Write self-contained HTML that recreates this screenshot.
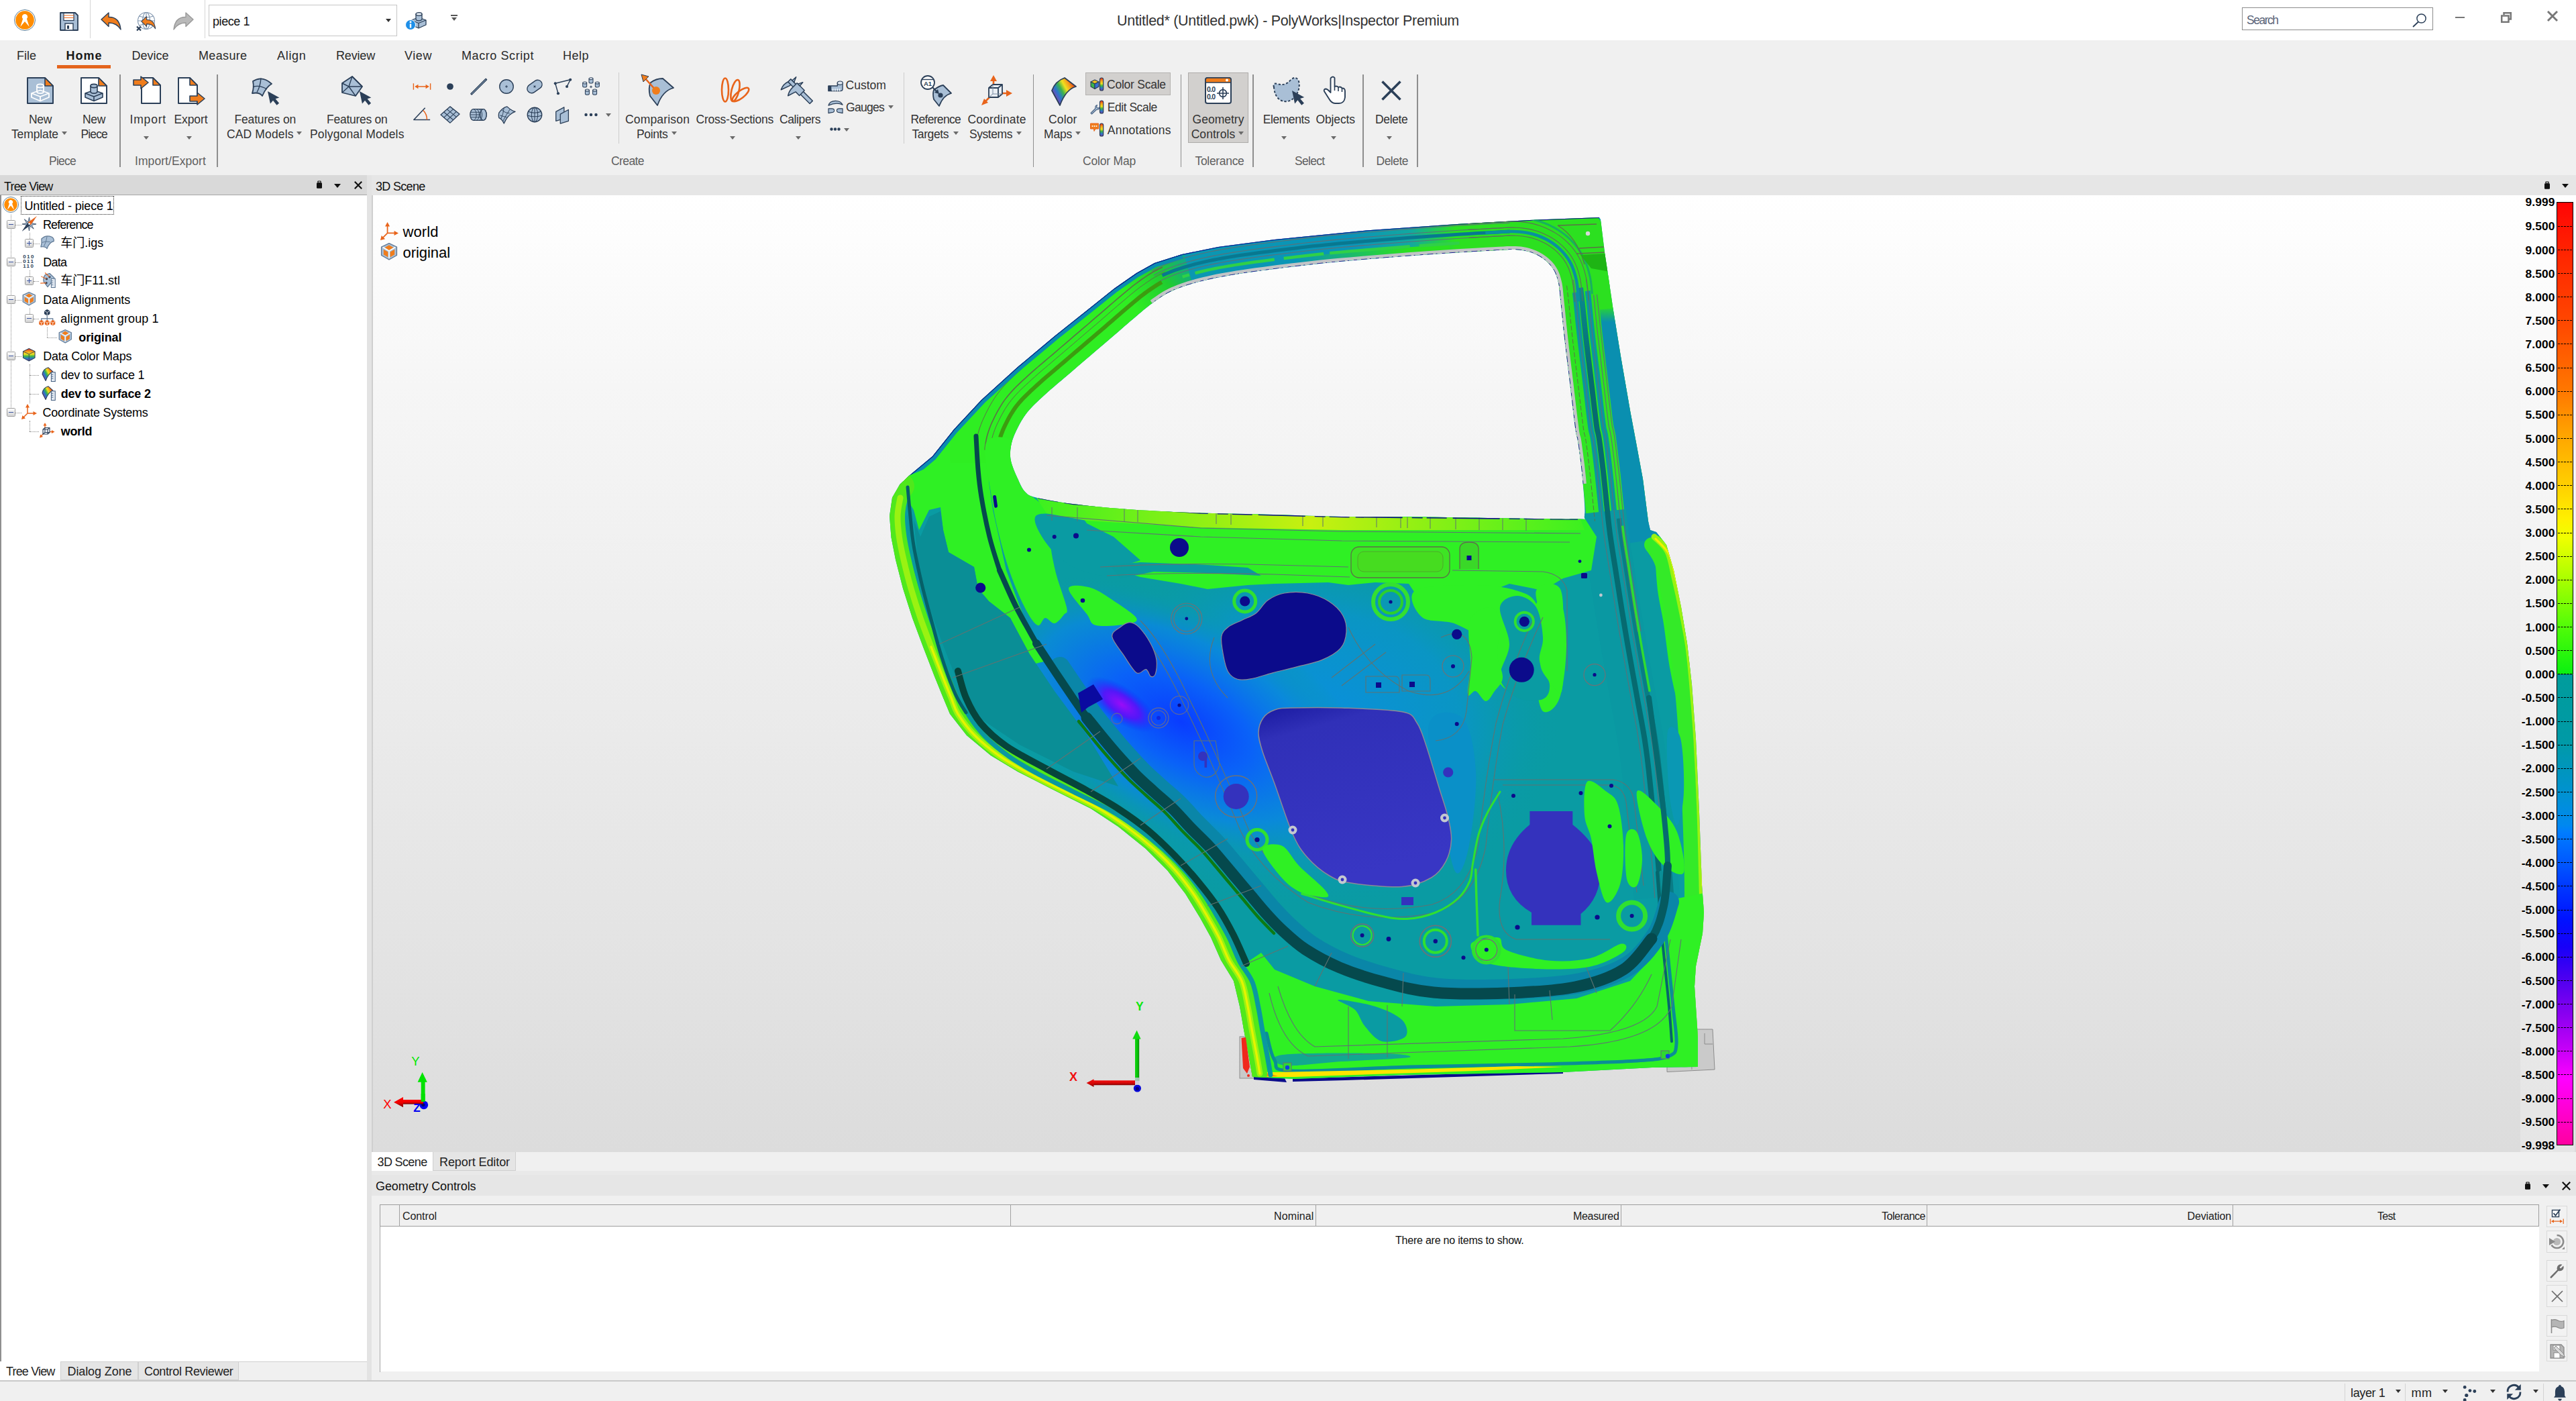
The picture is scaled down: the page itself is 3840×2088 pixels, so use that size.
<!DOCTYPE html>
<html><head><meta charset="utf-8"><title>PolyWorks|Inspector Premium</title>
<style>
html,body{margin:0;padding:0;background:#f0f0f0;overflow:hidden}
body{width:3840px;height:2088px;position:relative;font-family:"Liberation Sans","Noto Sans CJK SC",sans-serif}
.t{position:absolute;white-space:nowrap;line-height:1}
</style></head><body>
<div style="position:absolute;left:0px;top:261px;width:3840px;height:1827px;background:#f0f0f0;"></div>
<div style="position:absolute;left:0px;top:261px;width:547px;height:30px;background:#d9d9d9;"></div>
<div style="position:absolute;left:0px;top:290px;width:547px;height:1.3px;background:#a5a5a5;"></div>
<div style="position:absolute;left:547px;top:261px;width:7px;height:1796px;background:#e3e3e3;"></div>
<div class="t" style="left:6.0px;top:269.3px;font-size:18.0px;letter-spacing:-0.84px;color:#111;">Tree View</div>
<svg style="position:absolute;left:470.5px;top:269px;overflow:visible;" width="10" height="12" viewBox="0 0 10 12"><rect x="1" y="3.2" width="8" height="8.6" rx="1.2" fill="#111"/><rect x="2.4" y="0.4" width="5.2" height="3.4" rx="0.8" fill="#111"/><rect x="3.6" y="1.5" width="2.8" height="1.4" fill="#ddd"/></svg>
<div style="position:absolute;left:498px;top:273.5px;width:0;height:0;border-left:5.5px solid transparent;border-right:5.5px solid transparent;border-top:6px solid #111"></div>
<svg style="position:absolute;left:527.5px;top:269.5px;overflow:visible;" width="12" height="12" viewBox="0 0 12 12"><path d="M0.8,0.8 L11.2,11.2 M11.2,0.8 L0.8,11.2" stroke="#111" stroke-width="2.2"/></svg>
<div style="position:absolute;left:0px;top:291.3px;width:547px;height:1738px;background:#ffffff;"></div>
<div style="position:absolute;left:0px;top:291px;width:1.6px;height:1766px;background:#8f8f8f;"></div>
<div style="position:absolute;left:16.3px;top:320px;width:0;height:294.5px;border-left:1.2px dotted #8a8a8a"></div>
<svg style="position:absolute;left:4.2px;top:293.4px;overflow:visible;" width="24" height="24" viewBox="0 0 24 24"><circle cx="12" cy="12" r="11.5" fill="#fff" stroke="#5f7f96" stroke-width="1"/><circle cx="12" cy="12" r="9.8" fill="#ff8c00"/><path d="M9.84,10.56 a3.12,3.12 0 1 1 4.32,0 L17.04,19.439999999999998 L12,13.44 L6.96,19.439999999999998 Z" fill="#fff"/></svg>
<div style="position:absolute;left:31px;top:292.3px;width:139px;height:27.5px;box-sizing:border-box;border:1.3px dotted #222"></div>
<div class="t" style="left:36.5px;top:297.8px;font-size:18.0px;letter-spacing:-0.17px;color:#000;">Untitled - piece 1</div>
<div style="position:absolute;left:23px;top:334.7px;width:9px;height:0;border-top:1.2px dotted #8a8a8a"></div>
<div style="position:absolute;left:10.3px;top:328.4px;width:12.6px;height:12.6px;box-sizing:border-box;border:1px solid #9c9c9c;border-radius:1.5px;background:linear-gradient(#ffffff,#e4e4e4 55%,#d4d4d4)"></div><div style="position:absolute;left:12.8px;top:334.1px;width:7.6px;height:1.3px;background:#3c55a0;"></div>
<div style="position:absolute;left:23px;top:390.7px;width:9px;height:0;border-top:1.2px dotted #8a8a8a"></div>
<div style="position:absolute;left:10.3px;top:384.4px;width:12.6px;height:12.6px;box-sizing:border-box;border:1px solid #9c9c9c;border-radius:1.5px;background:linear-gradient(#ffffff,#e4e4e4 55%,#d4d4d4)"></div><div style="position:absolute;left:12.8px;top:390.1px;width:7.6px;height:1.3px;background:#3c55a0;"></div>
<div style="position:absolute;left:23px;top:446.7px;width:9px;height:0;border-top:1.2px dotted #8a8a8a"></div>
<div style="position:absolute;left:10.3px;top:440.4px;width:12.6px;height:12.6px;box-sizing:border-box;border:1px solid #9c9c9c;border-radius:1.5px;background:linear-gradient(#ffffff,#e4e4e4 55%,#d4d4d4)"></div><div style="position:absolute;left:12.8px;top:446.1px;width:7.6px;height:1.3px;background:#3c55a0;"></div>
<div style="position:absolute;left:23px;top:530.7px;width:9px;height:0;border-top:1.2px dotted #8a8a8a"></div>
<div style="position:absolute;left:10.3px;top:524.4px;width:12.6px;height:12.6px;box-sizing:border-box;border:1px solid #9c9c9c;border-radius:1.5px;background:linear-gradient(#ffffff,#e4e4e4 55%,#d4d4d4)"></div><div style="position:absolute;left:12.8px;top:530.1px;width:7.6px;height:1.3px;background:#3c55a0;"></div>
<div style="position:absolute;left:23px;top:614.7px;width:9px;height:0;border-top:1.2px dotted #8a8a8a"></div>
<div style="position:absolute;left:10.3px;top:608.4px;width:12.6px;height:12.6px;box-sizing:border-box;border:1px solid #9c9c9c;border-radius:1.5px;background:linear-gradient(#ffffff,#e4e4e4 55%,#d4d4d4)"></div><div style="position:absolute;left:12.8px;top:614.1px;width:7.6px;height:1.3px;background:#3c55a0;"></div>
<svg style="position:absolute;left:31.5px;top:322px;overflow:visible;" width="23" height="23" viewBox="0 0 24 24"><path d="M12,2 L13.6,9.2 L20,5 L15.8,11 L23,12.5 L15.8,14 L19,20 L13.4,15.6 L12,23 L10.4,15.6 L4.5,20 L8.2,14 L1,12.5 L8.2,11 L4.5,5 L10.4,9.2 Z" fill="#a9bfd6" stroke="#2b3f58" stroke-width=".8" stroke-linejoin="round"/><path d="M24,0 L14.2,14.2 L10,10 Z" fill="#e8641b"/><path d="M0.5,24 L10,10 L14.2,14.2 Z" fill="#2b3f58"/><circle cx="12.1" cy="12.1" r="1.5" fill="#fff"/></svg>
<div class="t" style="left:64.0px;top:325.8px;font-size:18.0px;letter-spacing:-0.93px;color:#000;">Reference</div>
<div style="position:absolute;left:43.5px;top:347px;width:0;height:9px;border-left:1.2px dotted #8a8a8a"></div>
<div style="position:absolute;left:50px;top:362.5px;width:9px;height:0;border-top:1.2px dotted #8a8a8a"></div>
<div style="position:absolute;left:37.2px;top:356.2px;width:12.6px;height:12.6px;box-sizing:border-box;border:1px solid #9c9c9c;border-radius:1.5px;background:linear-gradient(#ffffff,#e4e4e4 55%,#d4d4d4)"></div><div style="position:absolute;left:39.7px;top:361.9px;width:7.6px;height:1.3px;background:#3c55a0;"></div><div style="position:absolute;left:42.9px;top:358.7px;width:1.3px;height:7.6px;background:#3c55a0;"></div>
<svg style="position:absolute;left:59.7px;top:351px;overflow:visible;" width="22" height="21" viewBox="0 0 24 22"><path d="M2,5 Q9,-2 19,2 Q23,5 22,9 Q15,10 11,21 Q9,17 1,18 Q3,11 2,5 Z" fill="#a9bfd6" stroke="#5d7692" stroke-width="1.3" stroke-linejoin="round"/><path d="M11,1 Q10,10 6,17 M2.5,11 Q9,8 16,10" fill="none" stroke="#5d7692" stroke-width="1"/></svg>
<div class="t" style="left:90.3px;top:352.563px;font-size:18px;color:#000;font-family:'Liberation Sans','Noto Sans CJK SC',sans-serif;">车门.igs</div>
<svg style="position:absolute;left:34px;top:379.3px;overflow:visible;" width="18.5" height="20.5" viewBox="0 0 19.5 22"><text font-family="Liberation Sans,sans-serif" font-weight="bold" font-size="8.6" fill="#2b3f58" letter-spacing="1.55"><tspan x="0" y="6.5">010</tspan><tspan x="0" y="14">011</tspan><tspan x="0" y="21.5">110</tspan></text></svg>
<div class="t" style="left:64.2px;top:381.8px;font-size:18.0px;letter-spacing:-0.76px;color:#000;">Data</div>
<div style="position:absolute;left:43.5px;top:403px;width:0;height:9px;border-left:1.2px dotted #8a8a8a"></div>
<div style="position:absolute;left:50px;top:418.5px;width:8px;height:0;border-top:1.2px dotted #8a8a8a"></div>
<div style="position:absolute;left:37.2px;top:412.2px;width:12.6px;height:12.6px;box-sizing:border-box;border:1px solid #9c9c9c;border-radius:1.5px;background:linear-gradient(#ffffff,#e4e4e4 55%,#d4d4d4)"></div><div style="position:absolute;left:39.7px;top:417.9px;width:7.6px;height:1.3px;background:#3c55a0;"></div><div style="position:absolute;left:42.9px;top:414.7px;width:1.3px;height:7.6px;background:#3c55a0;"></div>
<svg style="position:absolute;left:58.5px;top:405.5px;overflow:visible;" width="24" height="23" viewBox="0 0 24 23.5"><path d="M8,4 L15,1.5 L22,8 V10 L12,22 L6,14 Q5,8 8,4 Z" fill="#a9bfd6" stroke="#5d7692" stroke-width="1.2" stroke-linejoin="round"/><g fill="#2b3f58"><circle cx="10.5" cy="10" r="1.7"/><circle cx="15" cy="7" r="1.7"/><circle cx="10" cy="16" r="1.7"/></g><g stroke="#e8641b" stroke-width="1.1"><path d="M10.5,10 L2,6 M15,7 L8,0.5 M10,16 L1,16.5"/></g><rect x="17.5" y="9.5" width="6" height="13.5" fill="#e6edf5" stroke="#5d7692" stroke-width="1.1"/><path d="M17.5,13 H20.5 M17.5,16 H20.5 M17.5,19 H20.5" stroke="#5d7692" stroke-width="1"/></svg>
<div class="t" style="left:90.3px;top:408.563px;font-size:18px;color:#000;font-family:'Liberation Sans','Noto Sans CJK SC',sans-serif;">车门F11.stl</div>
<svg style="position:absolute;left:32.8px;top:435px;overflow:visible;" width="20.5" height="20.5" viewBox="0 0 23 23.5"><g transform="scale(1)"><path d="M11.5,0.5 L22,5.5 V17 L11.5,23 L1,17 V5.5 Z" fill="#a9bfd6" stroke="#5d7692" stroke-width="1.2" stroke-linejoin="round"/><path d="M6.2,0.2 L9.6,4 L6,6.4 Z M16.8,0.2 L13.4,4 L17,6.4 Z M0,9 L4.4,11 V14.8 L0,14 Z M23,9 L18.6,11 V14.8 L23,14 Z M7,23.6 L9.4,19.6 L13.6,19.6 L16,23.6 Z" fill="#fff" opacity=".0"/><path d="M11.5,3 L17.5,6.5 L11.5,10 L5.5,6.5 Z" fill="#f07d1c"/><path d="M4,9 L10,12.5 V19.5 L4,16 Z" fill="#f07d1c"/><path d="M19,9 L13,12.5 V19.5 L19,16 Z" fill="#f07d1c"/><path d="M11.5,11 V21 M11.5,11 L3,6 M11.5,11 L20,6" stroke="#fff" stroke-width="1.4"/></g></svg>
<div class="t" style="left:64.2px;top:437.8px;font-size:18.0px;letter-spacing:-0.07px;color:#000;">Data Alignments</div>
<div style="position:absolute;left:43.5px;top:459px;width:0;height:9px;border-left:1.2px dotted #8a8a8a"></div>
<div style="position:absolute;left:50px;top:474.5px;width:8px;height:0;border-top:1.2px dotted #8a8a8a"></div>
<div style="position:absolute;left:37.2px;top:468.2px;width:12.6px;height:12.6px;box-sizing:border-box;border:1px solid #9c9c9c;border-radius:1.5px;background:linear-gradient(#ffffff,#e4e4e4 55%,#d4d4d4)"></div><div style="position:absolute;left:39.7px;top:473.9px;width:7.6px;height:1.3px;background:#3c55a0;"></div>
<svg style="position:absolute;left:58px;top:460.5px;overflow:visible;" width="24.5" height="24.5" viewBox="0 0 23 23"><path d="M11.5,0 L15.5,2 V6.5 L11.5,9 L7.5,6.5 V2 Z" fill="#2b3f58"/><path d="M11.5,4.3 V9 M11.5,4.3 L7.5,2 M11.5,4.3 L15.5,2" stroke="#fff" stroke-width=".7"/><path d="M11.5,9 V16 M3.5,16 V13 H19.5 V16" fill="none" stroke="#5d7692" stroke-width="1.1"/><g fill="#e8641b"><path d="M3.5,15 L6.8,16.7 V21 L3.5,23 L0.2,21 V16.7 Z"/><path d="M11.5,15 L14.8,16.7 V21 L11.5,23 L8.2,21 V16.7 Z"/><path d="M19.5,15 L22.8,16.7 V21 L19.5,23 L16.2,21 V16.7 Z"/></g><path d="M3.5,19 V23 M3.5,19 L0.5,17 M3.5,19 L6.5,17 M11.5,19 V23 M11.5,19 L8.5,17 M11.5,19 L14.5,17 M19.5,19 V23 M19.5,19 L16.5,17 M19.5,19 L22.5,17" stroke="#fff" stroke-width=".8"/></svg>
<div class="t" style="left:90.3px;top:465.8px;font-size:18.0px;letter-spacing:0.14px;color:#000;">alignment group 1</div>
<div style="position:absolute;left:70px;top:488px;width:0;height:14.5px;border-left:1.2px dotted #8a8a8a"></div>
<div style="position:absolute;left:70px;top:502.5px;width:15px;height:0;border-top:1.2px dotted #8a8a8a"></div>
<svg style="position:absolute;left:87px;top:490.5px;overflow:visible;" width="20.5" height="20.5" viewBox="0 0 23 23.5"><g transform="scale(1)"><path d="M11.5,0.5 L22,5.5 V17 L11.5,23 L1,17 V5.5 Z" fill="#a9bfd6" stroke="#5d7692" stroke-width="1.2" stroke-linejoin="round"/><path d="M6.2,0.2 L9.6,4 L6,6.4 Z M16.8,0.2 L13.4,4 L17,6.4 Z M0,9 L4.4,11 V14.8 L0,14 Z M23,9 L18.6,11 V14.8 L23,14 Z M7,23.6 L9.4,19.6 L13.6,19.6 L16,23.6 Z" fill="#fff" opacity=".0"/><path d="M11.5,3 L17.5,6.5 L11.5,10 L5.5,6.5 Z" fill="#f07d1c"/><path d="M4,9 L10,12.5 V19.5 L4,16 Z" fill="#f07d1c"/><path d="M19,9 L13,12.5 V19.5 L19,16 Z" fill="#f07d1c"/><path d="M11.5,11 V21 M11.5,11 L3,6 M11.5,11 L20,6" stroke="#fff" stroke-width="1.4"/></g></svg>
<div class="t" style="left:117.3px;top:493.8px;font-size:18.0px;letter-spacing:-0.13px;font-weight:bold;color:#000;">original</div>
<svg style="position:absolute;left:34px;top:519px;overflow:visible;" width="18.5" height="19.5" viewBox="0 0 20 21"><defs><linearGradient id="rb4" x1="0" y1="0" x2="0" y2="1"><stop offset="0" stop-color="#e8201c"/><stop offset=".25" stop-color="#f5a51c"/><stop offset=".45" stop-color="#f0e020"/><stop offset=".62" stop-color="#3cb44a"/><stop offset=".8" stop-color="#2a78c8"/><stop offset="1" stop-color="#7a3cb4"/></linearGradient></defs><path d="M10,0.5 L19.5,5 V15.5 L10,20.5 L0.5,15.5 V5 Z" fill="url(#rb4)" stroke="#2b3f58" stroke-width="1.1" stroke-linejoin="round"/><path d="M10,9.5 V20.5 M10,9.5 L0.5,5 M10,9.5 L19.5,5" stroke="#2b3f58" stroke-width=".9" fill="none"/></svg>
<div class="t" style="left:64.2px;top:521.8px;font-size:18.0px;letter-spacing:-0.20px;color:#000;">Data Color Maps</div>
<div style="position:absolute;left:43.5px;top:543px;width:0;height:58px;border-left:1.2px dotted #8a8a8a"></div>
<div style="position:absolute;left:43.5px;top:559px;width:14px;height:0;border-top:1.2px dotted #8a8a8a"></div>
<div style="position:absolute;left:43.5px;top:587px;width:14px;height:0;border-top:1.2px dotted #8a8a8a"></div>
<svg style="position:absolute;left:61.5px;top:547px;overflow:visible;" width="21" height="22" viewBox="0 0 21 22.5"><defs><linearGradient id="cm2" x1="0.9" y1="0.15" x2="0.05" y2="0.7"><stop offset="0" stop-color="#e0201c"/><stop offset=".22" stop-color="#f59a1c"/><stop offset=".4" stop-color="#f0e020"/><stop offset=".58" stop-color="#3cb44a"/><stop offset=".76" stop-color="#2a78c8"/><stop offset="1" stop-color="#8a3cb4"/></linearGradient></defs><path d="M0.8,11 Q2,3 10,0.8 L17,7 Q10,10 6,21 Z" fill="url(#cm2)" stroke="#2b3f58" stroke-width="1.1" stroke-linejoin="round"/><rect x="14.5" y="8" width="6" height="14" fill="#e6edf5" stroke="#4a6484" stroke-width="1.1"/><path d="M14.5,11.5 H17.5 M14.5,14.5 H17.5 M14.5,17.5 H17.5" stroke="#4a6484" stroke-width="1"/></svg>
<div class="t" style="left:90.7px;top:549.8px;font-size:18.0px;letter-spacing:-0.22px;color:#000;">dev to surface 1</div>
<svg style="position:absolute;left:61.5px;top:575px;overflow:visible;" width="21" height="22" viewBox="0 0 21 22.5"><defs><linearGradient id="cm3" x1="0.9" y1="0.15" x2="0.05" y2="0.7"><stop offset="0" stop-color="#e0201c"/><stop offset=".22" stop-color="#f59a1c"/><stop offset=".4" stop-color="#f0e020"/><stop offset=".58" stop-color="#3cb44a"/><stop offset=".76" stop-color="#2a78c8"/><stop offset="1" stop-color="#8a3cb4"/></linearGradient></defs><path d="M0.8,11 Q2,3 10,0.8 L17,7 Q10,10 6,21 Z" fill="url(#cm3)" stroke="#2b3f58" stroke-width="1.1" stroke-linejoin="round"/><rect x="14.5" y="8" width="6" height="14" fill="#e6edf5" stroke="#4a6484" stroke-width="1.1"/><path d="M14.5,11.5 H17.5 M14.5,14.5 H17.5 M14.5,17.5 H17.5" stroke="#4a6484" stroke-width="1"/></svg>
<div class="t" style="left:90.7px;top:577.8px;font-size:18.0px;letter-spacing:-0.19px;font-weight:bold;color:#000;">dev to surface 2</div>
<svg style="position:absolute;left:31.5px;top:602px;overflow:visible;" width="23" height="23" viewBox="0 0 23 23"><g transform="scale(1)"><path d="M9,3 V14 H20 M9,14 L2,21" fill="none" stroke="#e8641b" stroke-width="1.5"/><g fill="#e8641b"><path d="M9,0 L12,5.5 H6 Z"/><path d="M23,14 L17.5,11 V17 Z"/><path d="M0,23 L1.5,17 L6,21.5 Z"/></g></g></svg>
<div class="t" style="left:63.5px;top:605.8px;font-size:18.0px;letter-spacing:-0.28px;color:#000;">Coordinate Systems</div>
<div style="position:absolute;left:43.5px;top:627px;width:0;height:15.5px;border-left:1.2px dotted #8a8a8a"></div>
<div style="position:absolute;left:43.5px;top:643px;width:14px;height:0;border-top:1.2px dotted #8a8a8a"></div>
<svg style="position:absolute;left:59px;top:629.5px;overflow:visible;" width="22.5" height="22.5" viewBox="0 0 22.5 22.5"><g><path d="M8,2 V8 M15,13.5 H19 M5,17 L2,20" fill="none" stroke="#e8641b" stroke-width="1.3"/><g fill="#e8641b"><path d="M8,0 L10.5,4.5 H5.5 Z"/><path d="M22.5,13.5 L18,11 V16 Z"/><path d="M0,22.5 L1.2,17.5 L5,21 Z"/></g><g fill="#f4f7fa" stroke="#2b3f58" stroke-width="1.1" stroke-linejoin="round"><path d="M5,10 L8,7.5 H15 V14.5 L12,17 H5 Z"/><path d="M5,10 H12 V17 M12,10 L15,7.5 M8,7.5 V14.5 H15 M8,14.5 L5,17" fill="none"/></g></g></svg>
<div class="t" style="left:90.7px;top:633.8px;font-size:18.0px;letter-spacing:-0.30px;font-weight:bold;color:#000;">world</div>
<div style="position:absolute;left:0px;top:2029.3px;width:547px;height:27.7px;background:#f0f0f0;"></div>
<div style="position:absolute;left:0px;top:2029.3px;width:547px;height:1px;background:#d0d0d0;"></div>
<div style="position:absolute;left:0px;top:2029.3px;width:90px;height:27.7px;background:#ffffff;"></div>
<div style="position:absolute;left:90px;top:2029.3px;width:115.7px;height:27.7px;background:#e5e5e5;border:1px solid #cfcfcf;box-sizing:border-box"></div>
<div style="position:absolute;left:205.7px;top:2029.3px;width:150.6px;height:27.7px;background:#e5e5e5;border:1px solid #cfcfcf;box-sizing:border-box"></div>
<div class="t" style="left:9.0px;top:2035.1px;font-size:18.0px;letter-spacing:-0.84px;color:#222;">Tree View</div>
<div class="t" style="left:100.5px;top:2035.1px;font-size:18.0px;letter-spacing:-0.10px;color:#222;">Dialog Zone</div>
<div class="t" style="left:215.0px;top:2035.1px;font-size:18.0px;letter-spacing:-0.35px;color:#222;">Control Reviewer</div>
<div style="position:absolute;left:554px;top:261px;width:3286px;height:29.6px;background:#e6e6e6;"></div>
<div class="t" style="left:560.0px;top:269.3px;font-size:18.0px;letter-spacing:-0.69px;color:#111;">3D Scene</div>
<svg style="position:absolute;left:3792px;top:269.5px;overflow:visible;" width="10" height="12" viewBox="0 0 10 12"><rect x="1" y="3.2" width="8" height="8.6" rx="1.2" fill="#111"/><rect x="2.4" y="0.4" width="5.2" height="3.4" rx="0.8" fill="#111"/><rect x="3.6" y="1.5" width="2.8" height="1.4" fill="#ddd"/></svg>
<div style="position:absolute;left:3818.5px;top:274px;width:0;height:0;border-left:5.5px solid transparent;border-right:5.5px solid transparent;border-top:6px solid #111"></div>
<div style="position:absolute;left:554px;top:290.6px;width:2px;height:1426.6px;background:#cfcfcf;"></div>
<div style="position:absolute;left:554px;top:1717.2px;width:3286px;height:27.6px;background:#f0f0f0;"></div>
<div style="position:absolute;left:554px;top:1717.2px;width:91px;height:27.6px;background:#ffffff;"></div>
<div style="position:absolute;left:645px;top:1717.2px;width:123.7px;height:27.6px;background:#e5e5e5;border:1px solid #cfcfcf;border-top:none;box-sizing:border-box"></div>
<div class="t" style="left:562.5px;top:1723.3px;font-size:18.0px;letter-spacing:-0.63px;color:#222;">3D Scene</div>
<div class="t" style="left:655.0px;top:1723.3px;font-size:18.0px;letter-spacing:-0.08px;color:#222;">Report Editor</div>
<div style="position:absolute;left:554px;top:1744.8px;width:3286px;height:6.4px;background:#e9e9e9;"></div>
<div style="position:absolute;left:554px;top:1751px;width:3286px;height:31px;background:#e6e6e6;"></div>
<div class="t" style="left:560.0px;top:1759.3px;font-size:18.0px;letter-spacing:-0.09px;color:#111;">Geometry Controls</div>
<svg style="position:absolute;left:3762.5px;top:1760.5px;overflow:visible;" width="10" height="12" viewBox="0 0 10 12"><rect x="1" y="3.2" width="8" height="8.6" rx="1.2" fill="#111"/><rect x="2.4" y="0.4" width="5.2" height="3.4" rx="0.8" fill="#111"/><rect x="3.6" y="1.5" width="2.8" height="1.4" fill="#ddd"/></svg>
<div style="position:absolute;left:3790px;top:1765px;width:0;height:0;border-left:5.5px solid transparent;border-right:5.5px solid transparent;border-top:6px solid #111"></div>
<svg style="position:absolute;left:3818.5px;top:1761px;overflow:visible;" width="13" height="13" viewBox="0 0 13 13"><path d="M0.8,0.8 L12.2,12.2 M12.2,0.8 L0.8,12.2" stroke="#111" stroke-width="2.2"/></svg>
<div style="position:absolute;left:554px;top:1782px;width:3286px;height:275.5px;background:#f0f0f0;"></div>
<div style="position:absolute;left:565.5px;top:1795.4px;width:3219.5px;height:249px;background:#ffffff;"></div>
<div style="position:absolute;left:565.5px;top:1795.4px;width:3219.5px;height:33px;background:#f0f0f0;border:1px solid #9e9e9e;box-sizing:border-box"></div>
<div style="position:absolute;left:565.5px;top:1828px;width:1.2px;height:216.5px;background:#a8a8a8;"></div>
<div style="position:absolute;left:595.1px;top:1796px;width:1.1px;height:32px;background:#a2a2a2;"></div>
<div style="position:absolute;left:1505.5px;top:1796px;width:1.1px;height:32px;background:#a2a2a2;"></div>
<div style="position:absolute;left:1960.7px;top:1796px;width:1.1px;height:32px;background:#a2a2a2;"></div>
<div style="position:absolute;left:2415.9px;top:1796px;width:1.1px;height:32px;background:#a2a2a2;"></div>
<div style="position:absolute;left:2872px;top:1796px;width:1.1px;height:32px;background:#a2a2a2;"></div>
<div style="position:absolute;left:3328.2px;top:1796px;width:1.1px;height:32px;background:#a2a2a2;"></div>
<div class="t" style="left:600.0px;top:1804.8px;font-size:16.0px;letter-spacing:-0.08px;color:#1c1c1c;">Control</div>
<div class="t" style="left:1899.0px;top:1804.8px;font-size:16.0px;letter-spacing:0.12px;color:#1c1c1c;">Nominal</div>
<div class="t" style="left:2345.0px;top:1804.8px;font-size:16.0px;letter-spacing:-0.33px;color:#1c1c1c;">Measured</div>
<div class="t" style="left:2805.0px;top:1804.8px;font-size:16.0px;letter-spacing:-0.49px;color:#1c1c1c;">Tolerance</div>
<div class="t" style="left:3260.5px;top:1804.8px;font-size:16.0px;letter-spacing:-0.13px;color:#1c1c1c;">Deviation</div>
<div class="t" style="left:3544.0px;top:1804.8px;font-size:16.0px;letter-spacing:-0.71px;color:#1c1c1c;">Test</div>
<div class="t" style="left:2080.0px;top:1840.5px;font-size:16.0px;letter-spacing:-0.22px;color:#111;">There are no items to show.</div>
<div style="position:absolute;left:3796px;top:1796.8px;width:30.5px;height:32.4px;background:#f2f2f2;border:1px solid #d9d9d9;box-sizing:border-box"></div>
<div style="position:absolute;left:3796px;top:1834.4px;width:30.5px;height:32.4px;background:#f2f2f2;border:1px solid #d9d9d9;box-sizing:border-box"></div>
<div style="position:absolute;left:3796px;top:1878.1px;width:30.5px;height:32.4px;background:#f2f2f2;border:1px solid #d9d9d9;box-sizing:border-box"></div>
<div style="position:absolute;left:3796px;top:1915.4px;width:30.5px;height:32.4px;background:#f2f2f2;border:1px solid #d9d9d9;box-sizing:border-box"></div>
<div style="position:absolute;left:3796px;top:1959.8px;width:30.5px;height:32.4px;background:#f2f2f2;border:1px solid #d9d9d9;box-sizing:border-box"></div>
<div style="position:absolute;left:3796px;top:1997.1px;width:30.5px;height:32.4px;background:#f2f2f2;border:1px solid #d9d9d9;box-sizing:border-box"></div>
<svg style="position:absolute;left:3801px;top:1802px;overflow:visible;" width="21" height="23" viewBox="0 0 21 23"><rect x="3.5" y="1.5" width="10" height="10" fill="#fff" stroke="#2b3f58" stroke-width="1.4"/><path d="M5.5,6 L8.5,9.5 L15.5,0.5" fill="none" stroke="#2b3f58" stroke-width="1.8"/><g stroke="#e8641b" stroke-width="1.2"><path d="M0.8,14.5 V22 M20.2,14.5 V22 M3,18.2 H18"/></g><path d="M2,18.2 L6,15.8 V20.6 Z M19,18.2 L15,15.8 V20.6 Z" fill="#e8641b"/></svg>
<svg style="position:absolute;left:3800px;top:1839px;overflow:visible;" width="23" height="23" viewBox="0 0 23 23"><path d="M11.5,2 A9.5,9.5 0 1 1 3.5,16.5" fill="none" stroke="#8a8a8a" stroke-width="2.6"/><circle cx="11.5" cy="11.5" r="5.6" fill="#b9b9b9"/><path d="M0,6 L9,11.5 L0,17 Z" fill="#8a8a8a"/><path d="M23,23 V19 L19,23 Z" fill="#8a8a8a"/></svg>
<svg style="position:absolute;left:3800px;top:1883px;overflow:visible;" width="23" height="23" viewBox="0 0 23 23"><path d="M1.5,20 L12,9.5 Q10.5,4.5 14.5,2 Q17,0.7 19.5,1.8 L15.5,5.8 L17.2,7.5 L21.2,3.5 Q22.5,6.5 20.5,9.3 Q18,12 13.8,11 L3.5,21.8 Q1.5,22.5 1.5,20 Z" fill="#6e6e6e"/></svg>
<svg style="position:absolute;left:3802.5px;top:1923px;overflow:visible;" width="18" height="18" viewBox="0 0 18 18"><path d="M1,1 L17,17 M17,1 L1,17" stroke="#6e6e6e" stroke-width="1.7"/></svg>
<svg style="position:absolute;left:3801px;top:1965px;overflow:visible;" width="22" height="22" viewBox="0 0 22 22"><path d="M2.5,1 V22" stroke="#8a8a8a" stroke-width="1.6"/><path d="M2.5,2.5 Q8,0.5 12,3 Q16,5.5 21,3.5 V14 Q16,16 12,13.5 Q8,11 2.5,13 Z" fill="#b5b5b5" stroke="#8a8a8a" stroke-width="1.2"/></svg>
<svg style="position:absolute;left:3800.5px;top:2002.5px;overflow:visible;" width="23" height="22" viewBox="0 0 23 22"><path d="M1,1 H17 L21,5 V21 H1 Z" fill="#b5b5b5" stroke="#8a8a8a" stroke-width="1.3"/><rect x="5" y="2" width="10" height="7" fill="#fff" stroke="#8a8a8a" stroke-width="1"/><rect x="6" y="13" width="9" height="8" fill="#fff" stroke="#8a8a8a" stroke-width="1"/><path d="M9,3 L20,14 L22.5,19.5 L17,17 L6,6 Z" fill="#d9d9d9" stroke="#8a8a8a" stroke-width="1"/></svg>
<div style="position:absolute;left:0px;top:2057.3px;width:3840px;height:1.3px;background:#c9c9c9;"></div>
<div style="position:absolute;left:0px;top:2058.6px;width:3840px;height:29.4px;background:#f0f0f0;"></div>
<div style="position:absolute;left:3495px;top:2062px;width:1px;height:26px;background:#d4d4d4;"></div>
<div style="position:absolute;left:3584.6px;top:2062px;width:1px;height:26px;background:#d4d4d4;"></div>
<div style="position:absolute;left:3791px;top:2062px;width:1px;height:26px;background:#d4d4d4;"></div>
<div class="t" style="left:3504.0px;top:2067.4px;font-size:18.0px;letter-spacing:-0.36px;color:#222;">layer 1</div>
<div style="position:absolute;left:3570.5px;top:2071px;width:0;height:0;border-left:4.5px solid transparent;border-right:4.5px solid transparent;border-top:5px solid #333"></div>
<div class="t" style="left:3594.5px;top:2067.4px;font-size:18.0px;letter-spacing:0.51px;color:#222;">mm</div>
<div style="position:absolute;left:3640.5px;top:2071px;width:0;height:0;border-left:4.5px solid transparent;border-right:4.5px solid transparent;border-top:5px solid #333"></div>
<svg style="position:absolute;left:3670px;top:2064px;overflow:visible;" width="23" height="25" viewBox="0 0 25 29"><g fill="#2b3f58"><circle cx="4" cy="4" r="2.8"/><circle cx="13" cy="10" r="2.8"/><circle cx="21" cy="11" r="2.8"/><circle cx="7" cy="18" r="3"/><circle cx="4" cy="26" r="2.8"/></g></svg>
<div style="position:absolute;left:3712px;top:2071px;width:0;height:0;border-left:4.5px solid transparent;border-right:4.5px solid transparent;border-top:5px solid #333"></div>
<svg style="position:absolute;left:3735px;top:2062px;overflow:visible;" width="25" height="25" viewBox="0 0 28 28"><g fill="none" stroke="#2b3f58" stroke-width="3.2"><path d="M3.5,14 A10.5,10.5 0 0 1 22,6.5"/><path d="M24.5,14 A10.5,10.5 0 0 1 6,21.5"/></g><path d="M25.5,1 V11 H15.5 Z M2.5,27 V17 H12.5 Z" fill="#2b3f58"/></svg>
<div style="position:absolute;left:3776px;top:2071px;width:0;height:0;border-left:4.5px solid transparent;border-right:4.5px solid transparent;border-top:5px solid #333"></div>
<svg style="position:absolute;left:3807px;top:2063.5px;overflow:visible;" width="18" height="24" viewBox="0 0 19 25.5"><path d="M9.5,0 Q11.5,0 11.5,2 Q17,4 17,11 V17 L19,20 H0 L2,17 V11 Q2,4 7.5,2 Q7.5,0 9.5,0 Z" fill="#2b3f58"/><path d="M6.5,22 H12.5 Q12,25 9.5,25 Q7,25 6.5,22 Z" fill="#2b3f58"/></svg>
<div style="position:absolute;left:0px;top:0px;width:3840px;height:60px;background:#ffffff;"></div>
<svg style="position:absolute;left:21px;top:14px;overflow:visible;" width="32" height="32" viewBox="0 0 32 32"><circle cx="16" cy="16" r="15.5" fill="#fff" stroke="#5f7f96" stroke-width="1"/><circle cx="16" cy="16" r="13.8" fill="#ff8c00"/><path d="M13.120000000000001,14.08 a4.16,4.16 0 1 1 5.76,0 L22.72,25.92 L16,17.92 L9.280000000000001,25.92 Z" fill="#fff"/></svg>
<svg style="position:absolute;left:88.5px;top:17.5px;overflow:visible;" width="28" height="28" viewBox="0 0 28 28"><path d="M1,1 H23 L27,5 V27 H1 Z" fill="#a9bfd6" stroke="#2b3f58" stroke-width="1.8" stroke-linejoin="round"/><rect x="6" y="1.5" width="15" height="11" fill="#fff" stroke="#2b3f58" stroke-width="1.2"/><path d="M6,5 H21 M6,8.5 H21" stroke="#e8641b" stroke-width="1.2"/><rect x="8" y="17" width="12" height="10" fill="#fff" stroke="#2b3f58" stroke-width="1.4"/><rect x="11" y="20" width="3" height="5" fill="#2b3f58"/></svg>
<div style="position:absolute;left:134px;top:0px;width:1px;height:57px;background:#d5d5d5;"></div>
<svg style="position:absolute;left:150px;top:18px;overflow:visible;" width="31" height="27" viewBox="0 0 31 27"><path d="M1,11 L12,1 V7.5 Q28,7 30,26 Q24,16 12,16 V21.5 Z" fill="#f07d1c" stroke="#2b3f58" stroke-width="1.4" stroke-linejoin="round"/></svg>
<svg style="position:absolute;left:203px;top:18px;overflow:visible;" width="30" height="28" viewBox="0 0 30 28"><g fill="none" stroke="#7f94ad" stroke-width="1.1"><circle cx="15" cy="13" r="12.5"/><ellipse cx="15" cy="13" rx="5.5" ry="12.5"/><path d="M15,0.5 V25.5 M2.5,13 H27.5 M4.5,6 Q15,10 25.5,6 M4.5,20 Q15,16 25.5,20"/></g><g transform="translate(7,6) scale(.72)"><path d="M1,11 L12,1 V7.5 Q28,7 30,26 Q24,16 12,16 V21.5 Z" fill="#f07d1c" stroke="#2b3f58" stroke-width="1.4" stroke-linejoin="round"/></g><path d="M1,21.5 L7,27.5 M7,21.5 L1,27.5" stroke="#2b3f58" stroke-width="2.2"/></svg>
<svg style="position:absolute;left:258px;top:18px" width="31" height="27" viewBox="0 0 31 27"><g transform="translate(31,0) scale(-1,1)"><path d="M1,11 L12,1 V7.5 Q28,7 30,26 Q24,16 12,16 V21.5 Z" fill="#b9b9b9" stroke="#9a9a9a" stroke-width="1.4" stroke-linejoin="round"/></g></svg>
<div style="position:absolute;left:305px;top:0px;width:1px;height:57px;background:#d5d5d5;"></div>
<div style="position:absolute;left:311px;top:7px;width:281px;height:47px;background:#fff;border:1px solid #c6c6c6;box-sizing:border-box"></div>
<div class="t" style="left:317.0px;top:23.3px;font-size:18.0px;letter-spacing:-0.43px;color:#111;">piece 1</div>
<div style="position:absolute;left:574.5px;top:27.5px;width:0;height:0;border-left:4.5px solid transparent;border-right:4.5px solid transparent;border-top:5px solid #333"></div>
<svg style="position:absolute;left:604px;top:16px;overflow:visible;" width="34" height="30" viewBox="0 0 34 30"><g stroke="#2b3f58" stroke-width="1.3" stroke-linejoin="round" fill="#a9bfd6"><path d="M9,14 L20,10 L31,14 V21 L20,26 L9,21 Z"/><path d="M9,14 L20,18.5 L31,14 M20,18.5 V26" fill="none"/><path d="M16,5 V12.5 A4.5,2.3 0 0 0 25,12.5 V5 Z"/><ellipse cx="20.5" cy="5" rx="4.5" ry="2.3" fill="#dfe7f0"/></g><circle cx="8" cy="21" r="7.5" fill="#1e8fe8" stroke="#fff" stroke-width="1"/><rect x="6.8" y="19.5" width="2.4" height="6" fill="#fff"/><circle cx="8" cy="16.8" r="1.5" fill="#fff"/></svg>
<div style="position:absolute;left:672px;top:22px;width:10px;height:2px;background:#555;"></div>
<div style="position:absolute;left:672.5px;top:25.5px;width:0;height:0;border-left:4.5px solid transparent;border-right:4.5px solid transparent;border-top:5px solid #555"></div>
<div class="t" style="left:1665.0px;top:20.8px;font-size:21.5px;letter-spacing:-0.30px;color:#333;">Untitled* (Untitled.pwk) - PolyWorks|Inspector Premium</div>
<div style="position:absolute;left:3342px;top:11px;width:285px;height:34px;background:#fff;border:1px solid #8c8c8c;box-sizing:border-box"></div>
<div class="t" style="left:3349.0px;top:22.0px;font-size:17.5px;letter-spacing:-1.49px;color:#5a6478;">Search</div>
<svg style="position:absolute;left:3596px;top:19px;overflow:visible;" width="22" height="22" viewBox="0 0 22 22"><circle cx="13.5" cy="8.5" r="6.6" fill="none" stroke="#2b3f58" stroke-width="1.5"/><path d="M9,13.5 L1,21" stroke="#2b3f58" stroke-width="1.8"/></svg>
<div style="position:absolute;left:3660px;top:24.6px;width:14px;height:2.8px;background:#777;"></div>
<svg style="position:absolute;left:3728px;top:18px;overflow:visible;" width="16" height="16" viewBox="0 0 16 16"><path d="M4.5,4 V1.2 H14.8 V10.5 H12" fill="none" stroke="#777" stroke-width="2.5"/><rect x="1.2" y="5.5" width="10.3" height="9.3" fill="none" stroke="#777" stroke-width="2.5"/></svg>
<svg style="position:absolute;left:3797px;top:16px;overflow:visible;" width="16" height="16" viewBox="0 0 16 16"><path d="M1,1 L15,15 M15,1 L1,15" stroke="#777" stroke-width="2.9"/></svg>
<div style="position:absolute;left:0px;top:60px;width:3840px;height:201px;background:#f0f0f0;"></div>
<div class="t" style="left:25.0px;top:73.8px;font-size:18.0px;color:#2a2a2a;">File</div>
<div class="t" style="left:196.6px;top:73.8px;font-size:18.0px;color:#2a2a2a;">Device</div>
<div class="t" style="left:296.0px;top:73.8px;font-size:18.0px;letter-spacing:0.35px;color:#2a2a2a;">Measure</div>
<div class="t" style="left:413.0px;top:73.8px;font-size:18.0px;letter-spacing:0.69px;color:#2a2a2a;">Align</div>
<div class="t" style="left:501.0px;top:73.8px;font-size:18.0px;letter-spacing:-0.17px;color:#2a2a2a;">Review</div>
<div class="t" style="left:603.0px;top:73.8px;font-size:18.0px;letter-spacing:0.58px;color:#2a2a2a;">View</div>
<div class="t" style="left:688.0px;top:73.8px;font-size:18.0px;letter-spacing:0.58px;color:#2a2a2a;">Macro Script</div>
<div class="t" style="left:839.0px;top:73.8px;font-size:18.0px;letter-spacing:0.50px;color:#2a2a2a;">Help</div>
<div class="t" style="left:98.5px;top:73.8px;font-size:18.0px;letter-spacing:1.00px;font-weight:bold;color:#1a1a1a;">Home</div>
<div style="position:absolute;left:85px;top:97px;width:80px;height:5px;background:#e4641c;"></div>
<div style="position:absolute;left:178.2px;top:111px;width:1.7px;height:138px;background:#8e8e8e;"></div>
<div style="position:absolute;left:323.2px;top:111px;width:1.7px;height:138px;background:#8e8e8e;"></div>
<div style="position:absolute;left:1539.7px;top:111px;width:1.7px;height:138px;background:#8e8e8e;"></div>
<div style="position:absolute;left:1759.7px;top:111px;width:1.7px;height:138px;background:#8e8e8e;"></div>
<div style="position:absolute;left:1867.2px;top:111px;width:1.7px;height:138px;background:#8e8e8e;"></div>
<div style="position:absolute;left:2031.2px;top:111px;width:1.7px;height:138px;background:#8e8e8e;"></div>
<div style="position:absolute;left:2112.2px;top:111px;width:1.7px;height:138px;background:#8e8e8e;"></div>
<div style="position:absolute;left:921.8px;top:108px;width:1px;height:106px;background:#cdcdcd;"></div>
<div style="position:absolute;left:1346.7px;top:108px;width:1px;height:106px;background:#cdcdcd;"></div>
<div class="t" style="left:73.0px;top:231.7px;font-size:17.5px;letter-spacing:-0.76px;color:#5f5f5f;">Piece</div>
<div class="t" style="left:201.0px;top:231.7px;font-size:17.5px;letter-spacing:0.07px;color:#5f5f5f;">Import/Export</div>
<div class="t" style="left:911.0px;top:231.7px;font-size:17.5px;letter-spacing:-0.59px;color:#5f5f5f;">Create</div>
<div class="t" style="left:1614.0px;top:231.7px;font-size:17.5px;letter-spacing:-0.19px;color:#5f5f5f;">Color Map</div>
<div class="t" style="left:1781.5px;top:231.7px;font-size:17.5px;letter-spacing:-0.32px;color:#5f5f5f;">Tolerance</div>
<div class="t" style="left:1930.0px;top:231.7px;font-size:17.5px;letter-spacing:-0.69px;color:#5f5f5f;">Select</div>
<div class="t" style="left:2051.5px;top:231.7px;font-size:17.5px;letter-spacing:-0.51px;color:#5f5f5f;">Delete</div>
<svg style="position:absolute;left:40px;top:115px;overflow:visible;" width="40" height="40" viewBox="0 0 40 40"><path d="M1,1 H27 L39,13 V39 H1 Z" fill="#a9bfd6" stroke="#2b3f58" stroke-width="2" stroke-linejoin="round"/><path d="M27,1 L39,13 H27 Z" fill="#f07d1c" stroke="#2b3f58" stroke-width="1.6" stroke-linejoin="round"/><g fill="none" stroke="#fff" stroke-width="1.8" stroke-linejoin="round"><path d="M7,24 L20,19.5 L33,24 L20,29 Z"/><path d="M7,24 V30 L20,35.5 L33,30 V24 M20,29 V35.5"/><ellipse cx="20" cy="13" rx="5" ry="2.6"/><path d="M15,13 V21.5 A5,2.6 0 0 0 25,21.5 V13"/></g></svg>
<div class="t" style="left:43.0px;top:170.2px;font-size:17.5px;letter-spacing:-0.34px;color:#333333;">New</div>
<div class="t" style="left:17.0px;top:191.7px;font-size:17.5px;letter-spacing:-0.13px;color:#333333;">Template</div>
<div style="position:absolute;left:91.5px;top:195.5px;width:0;height:0;border-left:4.5px solid transparent;border-right:4.5px solid transparent;border-top:5px solid #6a6a6a"></div>
<svg style="position:absolute;left:120px;top:115px;overflow:visible;" width="40" height="40" viewBox="0 0 40 40"><path d="M1,1 H27 L39,13 V39 H1 Z" fill="#fff" stroke="#2b3f58" stroke-width="2" stroke-linejoin="round"/><path d="M27,1 L39,13 H27 Z" fill="#f07d1c" stroke="#2b3f58" stroke-width="1.6" stroke-linejoin="round"/><g fill="#a9bfd6" stroke="#2b3f58" stroke-width="1.6" stroke-linejoin="round"><path d="M7,24 L20,19.5 L33,24 V30 L20,35.5 L7,30 Z"/><path d="M7,24 L20,29 L33,24 M20,29 V35.5" fill="none"/><path d="M15,13 V21.5 A5,2.6 0 0 0 25,21.5 V13 Z"/><ellipse cx="20" cy="13" rx="5" ry="2.6"/></g></svg>
<div class="t" style="left:123.0px;top:170.2px;font-size:17.5px;letter-spacing:-0.34px;color:#333333;">New</div>
<div class="t" style="left:120.5px;top:191.7px;font-size:17.5px;letter-spacing:-0.86px;color:#333333;">Piece</div>
<svg style="position:absolute;left:198px;top:113px;overflow:visible;" width="42" height="42" viewBox="0 0 42 42"><path d="M13,3 H30 L41,14 V41 H13 Z" fill="#fff" stroke="#2b3f58" stroke-width="2" stroke-linejoin="round"/><path d="M30,3 L41,14 H30 Z" fill="#f07d1c" stroke="#2b3f58" stroke-width="1.6" stroke-linejoin="round"/><path d="M1,6 H12 V1 L23,10 L12,19 V14 H1 Z" fill="#f07d1c" stroke="#2b3f58" stroke-width="1.6" stroke-linejoin="round"/></svg>
<div class="t" style="left:193.5px;top:170.2px;font-size:17.5px;letter-spacing:0.82px;color:#333333;">Import</div>
<div style="position:absolute;left:214px;top:203px;width:0;height:0;border-left:4.5px solid transparent;border-right:4.5px solid transparent;border-top:5px solid #6a6a6a"></div>
<svg style="position:absolute;left:265px;top:113px;overflow:visible;" width="42" height="44" viewBox="0 0 42 44"><path d="M1,3 H18 L29,14 V41 H1 Z" fill="#fff" stroke="#2b3f58" stroke-width="2" stroke-linejoin="round"/><path d="M18,3 L29,14 H18 Z" fill="#f07d1c" stroke="#2b3f58" stroke-width="1.6" stroke-linejoin="round"/><path d="M18,30 H29 V25 L40,34 L29,43 V38 H18 Z" fill="#f07d1c" stroke="#2b3f58" stroke-width="1.6" stroke-linejoin="round"/></svg>
<div class="t" style="left:259.5px;top:170.2px;font-size:17.5px;letter-spacing:-0.10px;color:#333333;">Export</div>
<div style="position:absolute;left:278px;top:203px;width:0;height:0;border-left:4.5px solid transparent;border-right:4.5px solid transparent;border-top:5px solid #6a6a6a"></div>
<svg style="position:absolute;left:375px;top:115px;overflow:visible;" width="40" height="42" viewBox="0 0 40 42"><path d="M2,6 Q16,-3 30,10 Q22,14 16,28 Q12,22 1,24 Q4,15 2,6 Z" fill="#a9bfd6" stroke="#2b3f58" stroke-width="1.8" stroke-linejoin="round"/><path d="M14,1.5 Q13,14 8,22.5 M2,14.5 Q12,11 23,18" fill="none" stroke="#2b3f58" stroke-width="1.4"/><g transform="translate(24,21) scale(1) rotate(-12)"><path d="M0,0 L0,19 L5,15 L9,23 L13,21 L9,13.5 L15,13 Z" fill="#2b3f58"/></g></svg>
<div class="t" style="left:349.5px;top:170.2px;font-size:17.5px;letter-spacing:-0.17px;color:#333333;">Features on</div>
<div class="t" style="left:338.0px;top:191.7px;font-size:17.5px;letter-spacing:0.13px;color:#333333;">CAD Models</div>
<div style="position:absolute;left:441.5px;top:195.5px;width:0;height:0;border-left:4.5px solid transparent;border-right:4.5px solid transparent;border-top:5px solid #6a6a6a"></div>
<svg style="position:absolute;left:509px;top:113px;overflow:visible;" width="42" height="44" viewBox="0 0 42 44"><path d="M16,1 L31,16 L21,30 L1,25 L1,11 Z" fill="#a9bfd6" stroke="#2b3f58" stroke-width="1.8" stroke-linejoin="round"/><path d="M16,1 L11,16 L1,11 M11,16 L31,16 M11,16 L1,25 M11,16 L21,30 M16,1 L31,16" fill="none" stroke="#2b3f58" stroke-width="1.4"/><g transform="translate(27,23) scale(1) rotate(-12)"><path d="M0,0 L0,19 L5,15 L9,23 L13,21 L9,13.5 L15,13 Z" fill="#2b3f58"/></g></svg>
<div class="t" style="left:487.0px;top:170.2px;font-size:17.5px;letter-spacing:-0.26px;color:#333333;">Features on</div>
<div class="t" style="left:462.0px;top:191.7px;font-size:17.5px;letter-spacing:0.15px;color:#333333;">Polygonal Models</div>
<svg style="position:absolute;left:615px;top:115px;overflow:visible;" width="28" height="28" viewBox="0 0 30 30"><g stroke="#e8641b" stroke-width="1.5" fill="none"><path d="M1.5,10 V20 M28.5,10 V20 M5,15 H25"/></g><path d="M3.5,15 L9,11.5 V18.5 Z M26.5,15 L21,11.5 V18.5 Z" fill="#e8641b"/></svg>
<svg style="position:absolute;left:657px;top:115px;overflow:visible;" width="28" height="28" viewBox="0 0 30 30"><circle cx="15" cy="15" r="5.2" fill="#2b3f58"/></svg>
<svg style="position:absolute;left:698.8px;top:115px;overflow:visible;" width="28" height="28" viewBox="0 0 30 30"><path d="M3,26.5 L27,2.5 L28.5,4 L4.5,28 Z" fill="#a9bfd6" stroke="#2b3f58" stroke-width="1.4" stroke-linejoin="round"/></svg>
<svg style="position:absolute;left:740.8px;top:115px;overflow:visible;" width="28" height="28" viewBox="0 0 30 30"><circle cx="15" cy="15" r="11" fill="#a9bfd6" stroke="#2b3f58" stroke-width="1.5"/><path d="M15,13 V17 M13,15 H17" stroke="#2b3f58" stroke-width="1.2"/></svg>
<svg style="position:absolute;left:782.9px;top:115px;overflow:visible;" width="28" height="28" viewBox="0 0 30 30"><rect x="2" y="8" width="26" height="14" rx="7" transform="rotate(-35 15 15)" fill="#a9bfd6" stroke="#2b3f58" stroke-width="1.5"/><path d="M13.5,13.5 L16.5,16.5 M16.5,13.5 L13.5,16.5" stroke="#2b3f58" stroke-width="1.1"/></svg>
<svg style="position:absolute;left:824.8px;top:115px;overflow:visible;" width="28" height="28" viewBox="0 0 30 30"><path d="M7.5,26 L3,10 L27,4 L21.5,15" fill="none" stroke="#2b3f58" stroke-width="1.6" stroke-linejoin="round"/><g fill="#2b3f58"><circle cx="7.5" cy="26" r="2.2"/><circle cx="3" cy="10" r="2.2"/><circle cx="27" cy="4" r="2.2"/><circle cx="21.5" cy="15" r="2.2"/></g></svg>
<svg style="position:absolute;left:866.7px;top:115px;overflow:visible;" width="28" height="28" viewBox="0 0 30 30"><path d="M11.8,2.5 v5.5 a3.2,1.6 0 0 0 6.4,0 v-5.5" fill="#a9bfd6" stroke="#2b3f58" stroke-width="1.1"/><ellipse cx="15" cy="2.5" rx="3.2" ry="1.6" fill="#dfe7f0" stroke="#2b3f58" stroke-width="1.1"/><path d="M1.8,9 v5.5 a3.2,1.6 0 0 0 6.4,0 v-5.5" fill="#a9bfd6" stroke="#2b3f58" stroke-width="1.1"/><ellipse cx="5" cy="9" rx="3.2" ry="1.6" fill="#dfe7f0" stroke="#2b3f58" stroke-width="1.1"/><path d="M21.8,9 v5.5 a3.2,1.6 0 0 0 6.4,0 v-5.5" fill="#a9bfd6" stroke="#2b3f58" stroke-width="1.1"/><ellipse cx="25" cy="9" rx="3.2" ry="1.6" fill="#dfe7f0" stroke="#2b3f58" stroke-width="1.1"/><path d="M5.8,21 v5.5 a3.2,1.6 0 0 0 6.4,0 v-5.5" fill="#a9bfd6" stroke="#2b3f58" stroke-width="1.1"/><ellipse cx="9" cy="21" rx="3.2" ry="1.6" fill="#dfe7f0" stroke="#2b3f58" stroke-width="1.1"/><path d="M17.8,21 v5.5 a3.2,1.6 0 0 0 6.4,0 v-5.5" fill="#a9bfd6" stroke="#2b3f58" stroke-width="1.1"/><ellipse cx="21" cy="21" rx="3.2" ry="1.6" fill="#dfe7f0" stroke="#2b3f58" stroke-width="1.1"/><path d="M15,13.5 V17.5 M13,15.5 H17" stroke="#2b3f58" stroke-width="1.1"/></svg>
<svg style="position:absolute;left:615px;top:157px;overflow:visible;" width="28" height="28" viewBox="0 0 30 30"><path d="M20,4 L2,23 H28" fill="none" stroke="#2b3f58" stroke-width="1.7" stroke-linejoin="round"/><path d="M17,8 Q23,14 23,23" fill="none" stroke="#e8641b" stroke-width="1.7"/></svg>
<svg style="position:absolute;left:657px;top:157px;overflow:visible;" width="28" height="28" viewBox="0 0 30 30"><path d="M15,2 L30,14 L15,28 L0,15 Z" fill="#a9bfd6" stroke="#2b3f58" stroke-width="1.4" stroke-linejoin="round"/><path d="M5,10.7 L20,23.3 M10,6.3 L25,18.7 M20,6 L5,19.3 M25,10 L10,23.7" stroke="#2b3f58" stroke-width="1.1"/></svg>
<svg style="position:absolute;left:698.8px;top:157px;overflow:visible;" width="28" height="28" viewBox="0 0 30 30"><path d="M7,6 H23 A5,9 0 0 1 23,24 H7 A5,9 0 0 1 7,6 Z" fill="#a9bfd6" stroke="#2b3f58" stroke-width="1.4"/><ellipse cx="23" cy="15" rx="5" ry="9" fill="#a9bfd6" stroke="#2b3f58" stroke-width="1.4"/><path d="M3,11 H19 M2.5,15 H18 M3,19 H19 M7,6 A5,9 0 0 1 7,24 M11.5,6 A5,9 0 0 1 11.5,24 M16,6 A5,9 0 0 1 16,24" fill="none" stroke="#2b3f58" stroke-width="1"/></svg>
<svg style="position:absolute;left:740.8px;top:157px;overflow:visible;" width="28" height="28" viewBox="0 0 30 30"><path d="M3,12 Q9,3 16,2 Q22,8 29,10 Q17,14 11,29 Q8,22 3,20 Q2,16 3,12 Z" fill="#a9bfd6" stroke="#2b3f58" stroke-width="1.4" stroke-linejoin="round"/><path d="M7,7 Q14,13 20,12.5 M4.5,16 Q11,18 15.5,19 M11,4 Q10,14 6,22 M20.5,6.5 Q15,14 9.5,25" fill="none" stroke="#2b3f58" stroke-width="1"/></svg>
<svg style="position:absolute;left:782.9px;top:157px;overflow:visible;" width="28" height="28" viewBox="0 0 30 30"><circle cx="15" cy="15" r="11.5" fill="#a9bfd6" stroke="#2b3f58" stroke-width="1.5"/><ellipse cx="15" cy="15" rx="5" ry="11.5" fill="none" stroke="#2b3f58" stroke-width="1.1"/><path d="M15,3.5 V26.5 M4.5,10 Q15,14 25.5,10 M3.5,16 Q15,20 26.5,16" fill="none" stroke="#2b3f58" stroke-width="1.1"/></svg>
<svg style="position:absolute;left:824.8px;top:157px;overflow:visible;" width="28" height="28" viewBox="0 0 30 30"><path d="M4,10 L17,3 V21 L4,25 Z" fill="#a9bfd6" stroke="#2b3f58" stroke-width="1.4" stroke-linejoin="round"/><path d="M11,14 L24,7 V25 L11,29 Z" fill="#a9bfd6" stroke="#2b3f58" stroke-width="1.4" stroke-linejoin="round"/></svg>
<svg style="position:absolute;left:866.7px;top:157px;overflow:visible;" width="28" height="28" viewBox="0 0 30 30"><g fill="#2b3f58"><circle cx="7" cy="15" r="2.4"/><circle cx="15" cy="15" r="2.4"/><circle cx="23" cy="15" r="2.4"/></g></svg>
<div style="position:absolute;left:902.5px;top:168.5px;width:0;height:0;border-left:4.5px solid transparent;border-right:4.5px solid transparent;border-top:5px solid #6a6a6a"></div>
<svg style="position:absolute;left:956px;top:111px;overflow:visible;" width="48" height="46" viewBox="0 0 48 46"><path d="M14,12 Q22,6 32,6 L48,20 Q32,24 24,46 L13,32 Q10,20 14,12 Z" fill="#a9bfd6" stroke="#2b3f58" stroke-width="1.8" stroke-linejoin="round"/><path d="M22,24 L5,5" stroke="#e8641b" stroke-width="2.6"/><path d="M0,0 L11,3 L3,11 Z" fill="#f07d1c" stroke="#2b3f58" stroke-width="1"/><circle cx="22" cy="24" r="6" fill="#f07d1c"/></svg>
<div class="t" style="left:932.0px;top:170.2px;font-size:17.5px;letter-spacing:0.17px;color:#333333;">Comparison</div>
<div class="t" style="left:949.0px;top:191.7px;font-size:17.5px;letter-spacing:-0.36px;color:#333333;">Points</div>
<div style="position:absolute;left:1000.5px;top:195.5px;width:0;height:0;border-left:4.5px solid transparent;border-right:4.5px solid transparent;border-top:5px solid #6a6a6a"></div>
<svg style="position:absolute;left:1075px;top:115px;overflow:visible;" width="42" height="40" viewBox="0 0 42 40"><g fill="none" stroke="#e8641b" stroke-width="2.6"><ellipse cx="6" cy="19" rx="5" ry="17.5"/><ellipse cx="21" cy="20" rx="5.5" ry="16.5" transform="rotate(14 21 20)"/><ellipse cx="29" cy="26" rx="5.5" ry="15" transform="rotate(52 29 26)"/></g></svg>
<div class="t" style="left:1037.5px;top:170.2px;font-size:17.5px;letter-spacing:-0.22px;color:#333333;">Cross-Sections</div>
<div style="position:absolute;left:1088px;top:203px;width:0;height:0;border-left:4.5px solid transparent;border-right:4.5px solid transparent;border-top:5px solid #6a6a6a"></div>
<svg style="position:absolute;left:1170px;top:114px;overflow:visible;" width="43" height="41" viewBox="0 0 44 40"><g transform="translate(9,3) rotate(45)" fill="#a9bfd6" stroke="#2b3f58" stroke-width="1.5" stroke-linejoin="round"><path d="M0,0 H47 V6 H0 Z"/><path d="M0,6 Q-3,14 1,22 L6,8 V6 Z"/><path d="M11,-2.5 H27 V8.5 H19 L15,21 Q11,15 11,8.5 Z"/><path d="M3,0 L3.5,-8 L7,0 Z M13,-2.5 L16.5,-9.5 L17,-2.5 Z"/></g></svg>
<div class="t" style="left:1162.0px;top:170.2px;font-size:17.5px;letter-spacing:-0.40px;color:#333333;">Calipers</div>
<div style="position:absolute;left:1186px;top:203px;width:0;height:0;border-left:4.5px solid transparent;border-right:4.5px solid transparent;border-top:5px solid #6a6a6a"></div>
<svg style="position:absolute;left:1233.5px;top:119.5px;overflow:visible;" width="23" height="17" viewBox="0 0 24 17"><path d="M1,8 H15 V3.5 A4.5,3 0 0 1 23,3.5 V13 Q23,16 19,16 H1 Z" fill="#a9bfd6" stroke="#2b3f58" stroke-width="1.4" stroke-linejoin="round"/><ellipse cx="19" cy="3.5" rx="4.2" ry="2.8" fill="#dfe7f0" stroke="#2b3f58" stroke-width="1.2"/><rect x="0.5" y="8" width="5" height="8" fill="#2b3f58"/><path d="M8,16 V12.5 M11.5,16 V12.5 M15,16 V12.5 M18.5,16 V12.5" stroke="#fff" stroke-width="1.2"/></svg>
<div class="t" style="left:1260.5px;top:118.7px;font-size:17.5px;letter-spacing:0.03px;color:#333333;">Custom</div>
<svg style="position:absolute;left:1233.5px;top:148.5px;overflow:visible;" width="23" height="21" viewBox="0 0 24 21"><path d="M1,8 Q3,1 12,1 Q20,1 23,7 Q14,2.5 1,8 Z" fill="#a9bfd6" stroke="#2b3f58" stroke-width="1.3" stroke-linejoin="round"/><path d="M1,13 H6 Q10,13 10,16 Q10,19 6,19 L1,20 Z M23,13 H18 Q14,13 14,16 Q14,19 18,19 L23,20 Z" fill="#a9bfd6" stroke="#2b3f58" stroke-width="1.2" stroke-linejoin="round"/></svg>
<div class="t" style="left:1261.0px;top:152.4px;font-size:17.5px;letter-spacing:-0.72px;color:#333333;">Gauges</div>
<div style="position:absolute;left:1323.5px;top:157px;width:0;height:0;border-left:4.5px solid transparent;border-right:4.5px solid transparent;border-top:5px solid #6a6a6a"></div>
<svg style="position:absolute;left:1234px;top:181px;overflow:visible;" width="22" height="22" viewBox="0 0 22 22"><g fill="#2b3f58"><circle cx="5.5" cy="11.5" r="2.2"/><circle cx="11" cy="11.5" r="2.2"/><circle cx="16.5" cy="11.5" r="2.2"/></g></svg>
<div style="position:absolute;left:1258px;top:190.5px;width:0;height:0;border-left:4.5px solid transparent;border-right:4.5px solid transparent;border-top:5px solid #6a6a6a"></div>
<svg style="position:absolute;left:1372px;top:112px;overflow:visible;" width="47" height="47" viewBox="0 0 47 47"><path d="M20,22 Q28,16 34,15 L46,27 Q34,30 28,46 L20,36 Q18,28 20,22 Z" fill="#a9bfd6" stroke="#2b3f58" stroke-width="1.8" stroke-linejoin="round"/><circle cx="11" cy="11" r="10" fill="#fff" stroke="#2b3f58" stroke-width="1.8"/><path d="M3,6.5 H19" stroke="#2b3f58" stroke-width="1.4"/><text x="11" y="16" font-family="Liberation Sans,sans-serif" font-weight="bold" font-size="9.5" text-anchor="middle" fill="#2b3f58">A1</text><path d="M18,18 L26,26" stroke="#2b3f58" stroke-width="2"/><path d="M28,28 L21,26 L26,21 Z" fill="#2b3f58"/><circle cx="30" cy="30" r="3.6" fill="#2b3f58"/></svg>
<div class="t" style="left:1357.5px;top:170.2px;font-size:17.5px;letter-spacing:-0.69px;color:#333333;">Reference</div>
<div class="t" style="left:1359.5px;top:191.7px;font-size:17.5px;letter-spacing:-0.41px;color:#333333;">Targets</div>
<div style="position:absolute;left:1420.5px;top:195.5px;width:0;height:0;border-left:4.5px solid transparent;border-right:4.5px solid transparent;border-top:5px solid #6a6a6a"></div>
<svg style="position:absolute;left:1463px;top:112px;overflow:visible;" width="46" height="46" viewBox="0 0 46 46"><g stroke="#e8641b" stroke-width="2.6"><path d="M18,16 V6 M31,27 H40 M12,33 L5,40"/></g><g fill="#e8641b"><path d="M18,0 L23,9 H13 Z"/><path d="M46,27 L37,22 V32 Z"/><path d="M0,45 L4,35 L10,41 Z"/></g><g fill="#e9eef4" stroke="#2b3f58" stroke-width="1.8" stroke-linejoin="round"><path d="M11,19 L17,14 H31 V28 L25,33 H11 Z"/><path d="M11,19 H25 V33 M25,19 L31,14" fill="none"/><path d="M17,14 V28 H31 M17,28 L11,33" fill="none" stroke="#7b8da3" stroke-width="1"/></g></svg>
<div class="t" style="left:1442.5px;top:170.2px;font-size:17.5px;letter-spacing:0.14px;color:#333333;">Coordinate</div>
<div class="t" style="left:1445.0px;top:191.7px;font-size:17.5px;letter-spacing:-0.44px;color:#333333;">Systems</div>
<div style="position:absolute;left:1514.5px;top:195.5px;width:0;height:0;border-left:4.5px solid transparent;border-right:4.5px solid transparent;border-top:5px solid #6a6a6a"></div>
<svg style="position:absolute;left:1567px;top:115px;overflow:visible;" width="38" height="43" viewBox="0 0 38 43"><defs><linearGradient id="cm" x1="0.95" y1="0.2" x2="0.1" y2="0.75"><stop offset="0" stop-color="#e0201c"/><stop offset=".22" stop-color="#f59a1c"/><stop offset=".4" stop-color="#f0e020"/><stop offset=".58" stop-color="#3cb44a"/><stop offset=".76" stop-color="#2a78c8"/><stop offset="1" stop-color="#8a3cb4"/></linearGradient></defs><path d="M1,20 Q6,6 20,1 L37,14 Q22,18 13,42 Z" fill="url(#cm)" stroke="#2b3f58" stroke-width="1.8" stroke-linejoin="round"/></svg>
<div class="t" style="left:1563.0px;top:170.2px;font-size:17.5px;letter-spacing:0.14px;color:#333333;">Color</div>
<div class="t" style="left:1556.0px;top:191.7px;font-size:17.5px;letter-spacing:-0.20px;color:#333333;">Maps</div>
<div style="position:absolute;left:1602.5px;top:195.5px;width:0;height:0;border-left:4.5px solid transparent;border-right:4.5px solid transparent;border-top:5px solid #6a6a6a"></div>
<div style="position:absolute;left:1618px;top:108.4px;width:127px;height:33.2px;background:#d2d0ce;border:1px solid #b4b2b0;box-sizing:border-box"></div>
<svg style="position:absolute;left:1624.5px;top:114.5px;overflow:visible;" width="21" height="21" viewBox="0 0 21 21"><defs><linearGradient id="rb" x1="0" y1="0" x2="0" y2="1"><stop offset="0" stop-color="#e8201c"/><stop offset=".25" stop-color="#f5a51c"/><stop offset=".45" stop-color="#f0e020"/><stop offset=".62" stop-color="#3cb44a"/><stop offset=".8" stop-color="#2a78c8"/><stop offset="1" stop-color="#7a3cb4"/></linearGradient></defs><rect x="14.5" y="1" width="5.2" height="19" rx="2.6" fill="url(#rb)" stroke="#2b3f58" stroke-width="1.2"/><g stroke="#2b3f58" stroke-width="1.1" stroke-linejoin="round"><path d="M1,7 L7,4 L13,7 L7,10 Z" fill="#f0c020"/><path d="M1,7 V14 L7,17.5 V10 Z" fill="#3cb44a"/><path d="M13,7 V14 L7,17.5 V10 Z" fill="#3a6fd0"/></g></svg>
<div class="t" style="left:1650.0px;top:118.4px;font-size:17.5px;letter-spacing:-0.24px;color:#333333;">Color Scale</div>
<svg style="position:absolute;left:1624.5px;top:148.5px;overflow:visible;" width="21" height="22" viewBox="0 0 21 22"><defs><linearGradient id="rb2" x1="0" y1="0" x2="0" y2="1"><stop offset="0" stop-color="#e8201c"/><stop offset=".25" stop-color="#f5a51c"/><stop offset=".45" stop-color="#f0e020"/><stop offset=".62" stop-color="#3cb44a"/><stop offset=".8" stop-color="#2a78c8"/><stop offset="1" stop-color="#7a3cb4"/></linearGradient></defs><rect x="14.5" y="1" width="5.2" height="19" rx="2.6" fill="url(#rb2)" stroke="#2b3f58" stroke-width="1.2"/><path d="M1,19.5 L8,12.5 Q7,8.5 10.5,7.5 L9.5,10.5 L11.5,12.5 L14,11 Q13.5,15 9.5,14.5 L2.5,21 Z" fill="#a9bfd6" stroke="#4a6484" stroke-width="1.1" stroke-linejoin="round"/></svg>
<div class="t" style="left:1650.8px;top:152.4px;font-size:17.5px;letter-spacing:-0.48px;color:#333333;">Edit Scale</div>
<svg style="position:absolute;left:1624.5px;top:182.5px;overflow:visible;" width="21" height="21" viewBox="0 0 21 21"><defs><linearGradient id="rb3" x1="0" y1="0" x2="0" y2="1"><stop offset="0" stop-color="#e8201c"/><stop offset=".25" stop-color="#f5a51c"/><stop offset=".45" stop-color="#f0e020"/><stop offset=".62" stop-color="#3cb44a"/><stop offset=".8" stop-color="#2a78c8"/><stop offset="1" stop-color="#7a3cb4"/></linearGradient></defs><rect x="14.5" y="1" width="5.2" height="19" rx="2.6" fill="url(#rb3)" stroke="#2b3f58" stroke-width="1.2"/><path d="M0.5,1 H12.5 V9 H8 L6,12.5 L5.5,9 H0.5 Z" fill="#f07d1c" stroke="#e8641b" stroke-width="1" stroke-linejoin="round"/><g fill="#fff"><circle cx="3.5" cy="5" r="1"/><circle cx="6.5" cy="5" r="1"/><circle cx="9.5" cy="5" r="1"/></g></svg>
<div class="t" style="left:1650.8px;top:186.4px;font-size:17.5px;letter-spacing:0.23px;color:#333333;">Annotations</div>
<div style="position:absolute;left:1771px;top:108.4px;width:90px;height:104.4px;background:#d2d0ce;border:1px solid #aeacaa;box-sizing:border-box"></div>
<svg style="position:absolute;left:1796px;top:115px;overflow:visible;" width="40" height="40" viewBox="0 0 40 40"><rect x="1" y="1" width="38" height="38" rx="3" fill="#fff" stroke="#2b3f58" stroke-width="2"/><path d="M1,8 V4 Q1,1 4,1 H36 Q39,1 39,4 V8 Z" fill="#f07d1c" stroke="#2b3f58" stroke-width="1.6"/><circle cx="33" cy="4.6" r="2" fill="#fff"/><text x="3" y="22" font-family="Liberation Sans,sans-serif" font-weight="bold" font-size="10.5" letter-spacing="-0.8" fill="#2b3f58">0.0</text><text x="3" y="33" font-family="Liberation Sans,sans-serif" font-weight="bold" font-size="10.5" letter-spacing="-0.8" fill="#2b3f58">0.0</text><circle cx="27" cy="24" r="5.4" fill="none" stroke="#2b3f58" stroke-width="1.6"/><path d="M27,15 V33 M18,24 H36" stroke="#2b3f58" stroke-width="1.6"/></svg>
<div class="t" style="left:1777.5px;top:170.2px;font-size:17.5px;letter-spacing:0.02px;color:#333333;">Geometry</div>
<div class="t" style="left:1775.7px;top:191.7px;font-size:17.5px;letter-spacing:0.04px;color:#333333;">Controls</div>
<div style="position:absolute;left:1846px;top:195.5px;width:0;height:0;border-left:4.5px solid transparent;border-right:4.5px solid transparent;border-top:5px solid #6a6a6a"></div>
<svg style="position:absolute;left:1896px;top:115px;overflow:visible;" width="46" height="44" viewBox="0 0 46 44"><path d="M3,15 Q1,8 8,10 Q20,14 28,4 Q36,-3 40,6 Q43,18 34,30 Q24,40 12,34 Q4,28 3,15 Z" fill="#a9bfd6" stroke="#2b3f58" stroke-width="2" stroke-dasharray="3.2 2.6"/><g transform="translate(30,20) scale(1.05) rotate(-12)"><path d="M0,0 L0,19 L5,15 L9,23 L13,21 L9,13.5 L15,13 Z" fill="#2b3f58"/></g></svg>
<div class="t" style="left:1882.7px;top:170.2px;font-size:17.5px;letter-spacing:-0.43px;color:#333333;">Elements</div>
<div style="position:absolute;left:1909.8px;top:203px;width:0;height:0;border-left:4.5px solid transparent;border-right:4.5px solid transparent;border-top:5px solid #6a6a6a"></div>
<svg style="position:absolute;left:1973px;top:114px;overflow:visible;" width="33" height="41" viewBox="0 0 33 41"><path d="M11,2 Q14,-1 16.5,2 V15 Q20,13.5 22,16 Q25.5,14.5 27.5,17.5 Q32,17 32,22 V31 Q31,40 23,40 H17 Q12,40 8,33 L1,22 Q0,19 3,18.5 Q6,18.5 10.5,24 V4 Q10.5,2.5 11,2 Z" fill="#fff" stroke="#2b3f58" stroke-width="1.9" stroke-linejoin="round"/><path d="M16.5,15 V21 M22,16 V22 M27.5,18 V23" stroke="#2b3f58" stroke-width="1.6"/></svg>
<div class="t" style="left:1961.5px;top:170.2px;font-size:17.5px;letter-spacing:-0.12px;color:#333333;">Objects</div>
<div style="position:absolute;left:1984px;top:203px;width:0;height:0;border-left:4.5px solid transparent;border-right:4.5px solid transparent;border-top:5px solid #6a6a6a"></div>
<svg style="position:absolute;left:2059px;top:120px;overflow:visible;" width="30" height="30" viewBox="0 0 30 30"><path d="M1.5,1.5 L28.5,28.5 M28.5,1.5 L1.5,28.5" stroke="#2b3f58" stroke-width="3.6"/></svg>
<div class="t" style="left:2050.0px;top:170.2px;font-size:17.5px;letter-spacing:-0.35px;color:#333333;">Delete</div>
<div style="position:absolute;left:2067px;top:203px;width:0;height:0;border-left:4.5px solid transparent;border-right:4.5px solid transparent;border-top:5px solid #6a6a6a"></div>
<div style="position:absolute;left:556px;top:290.6px;width:3284px;height:1426.6px;background:linear-gradient(to bottom,#ffffff 0%,#f6f6f6 20%,#ececec 50%,#e3e3e3 80%,#dcdcdc 100%)"></div>
<svg style="position:absolute;left:556px;top:291px" width="3284" height="1426" viewBox="556 291 3284 1426">
<defs>
<clipPath id="dc"><path d="M2384.0,324.0 L2280.0,328.0 L2172.0,334.0 L2036.0,343.5 L1900.0,357.0 L1816.0,368.0 L1762.0,379.0 L1721.0,392.0 L1694.0,407.0 L1661.0,430.0 L1626.0,458.0 L1572.0,501.0 L1517.0,547.0 L1463.0,596.0 L1422.0,640.0 L1390.0,680.0 L1354.0,710.0 L1341.0,722.5 L1330.0,741.5 L1326.0,769.0 L1328.5,801.0 L1335.0,834.0 L1346.0,877.0 L1360.0,921.0 L1376.0,964.0 L1393.0,1008.0 L1406.0,1040.0 L1416.0,1064.0 L1441.0,1096.0 L1477.0,1126.0 L1517.0,1150.0 L1572.0,1178.0 L1626.0,1205.0 L1667.0,1232.0 L1708.0,1265.0 L1740.0,1297.0 L1767.0,1332.0 L1789.0,1368.0 L1805.0,1397.0 L1820.0,1431.0 L1839.0,1462.0 L1848.0,1500.0 L1854.0,1534.0 L1861.0,1571.0 L1867.0,1605.0 L1929.0,1608.0 L2090.0,1602.0 L2330.0,1598.0 L2463.0,1591.0 L2531.0,1590.0 L2531.0,1546.0 L2526.0,1470.0 L2528.0,1440.0 L2538.0,1391.0 L2540.0,1360.0 L2537.0,1319.0 L2533.0,1210.0 L2528.0,1101.0 L2522.0,1020.0 L2515.0,959.0 L2506.0,905.0 L2495.0,850.0 L2484.0,812.0 L2469.0,793.0 L2460.0,790.0 L2457.0,777.0 L2449.0,714.0 L2439.0,660.0 L2430.0,612.0 L2416.0,531.0 L2405.0,463.0 L2397.0,409.0 L2392.0,376.0 L2386.0,327.0 Z M2000.0,389.7 C1967.9,392.6 1951.1,394.6 1925.0,397.8 C1898.9,401.0 1866.2,405.1 1843.5,408.7 C1820.8,412.3 1804.8,415.6 1789.0,419.6 C1773.2,423.7 1759.7,428.0 1748.4,433.0 C1737.1,438.0 1730.1,443.1 1721.0,449.5 C1711.9,455.9 1705.3,461.7 1694.0,471.2 C1682.7,480.7 1668.8,492.9 1653.0,506.5 C1637.2,520.1 1614.8,539.1 1599.0,552.7 C1583.2,566.3 1569.3,577.6 1558.0,588.0 C1546.7,598.4 1538.2,605.9 1531.0,615.0 C1523.8,624.1 1518.7,634.1 1514.7,642.4 C1510.7,650.7 1508.3,657.6 1507.0,665.0 C1505.7,672.4 1505.3,678.8 1507.0,687.0 C1508.7,695.2 1513.9,706.3 1517.4,714.0 C1520.9,721.7 1523.5,728.4 1528.0,733.0 C1532.5,737.6 1532.8,738.5 1544.6,741.5 C1556.4,744.5 1576.4,748.1 1599.0,751.0 C1621.6,753.9 1648.7,756.7 1680.4,759.0 C1712.1,761.3 1752.8,763.3 1789.0,764.6 C1825.2,765.9 1862.6,766.1 1897.8,767.0 C1933.0,767.9 1968.0,769.5 2000.0,770.0 C2032.0,770.5 2052.3,769.7 2090.0,770.0 C2127.7,770.3 2182.7,771.4 2226.0,772.0 C2269.3,772.6 2327.3,774.1 2350.0,773.6 C2372.7,773.1 2360.5,778.6 2362.0,768.7 C2363.5,758.8 2360.6,732.1 2359.0,714.0 C2357.4,695.9 2354.2,672.4 2352.4,660.0 C2350.6,647.6 2350.4,654.4 2348.4,639.7 C2346.4,625.0 2342.9,594.4 2340.2,571.7 C2337.5,549.1 2334.3,523.7 2332.0,503.8 C2329.7,483.9 2328.2,466.2 2326.6,452.2 C2325.0,438.2 2324.9,428.7 2322.6,419.6 C2320.3,410.5 2317.8,404.2 2313.0,397.8 C2308.2,391.4 2301.7,385.7 2294.0,381.5 C2286.3,377.3 2278.1,374.2 2266.8,372.8 C2255.5,371.4 2250.9,372.2 2226.0,373.4 C2201.1,374.6 2155.1,377.5 2117.4,380.2 C2079.7,382.9 2032.1,386.8 2000.0,389.7 Z" clip-rule="evenodd"/></clipPath>
<radialGradient id="bl1" cx="1760" cy="1075" r="330" gradientUnits="userSpaceOnUse" gradientTransform="translate(1760 1075) rotate(28) scale(1 .52) translate(-1760 -1075)"><stop offset="0" stop-color="#0a3cff"/><stop offset=".35" stop-color="#0a62f8"/><stop offset=".7" stop-color="#0a88dc" stop-opacity=".85"/><stop offset="1" stop-color="#0a9ba3" stop-opacity="0"/></radialGradient>
<radialGradient id="pu1" cx="1672" cy="1050" r="62" gradientUnits="userSpaceOnUse" gradientTransform="translate(1672 1050) rotate(35) scale(1 .42) translate(-1672 -1050)"><stop offset="0" stop-color="#9a0cf8"/><stop offset=".5" stop-color="#5a10f8" stop-opacity=".9"/><stop offset="1" stop-color="#0a30ff" stop-opacity="0"/></radialGradient>
<linearGradient id="vb1" x1="0" y1="0" x2="0.3" y2="1"><stop offset="0" stop-color="#1a1aa0"/><stop offset=".18" stop-color="#3030b8"/><stop offset="1" stop-color="#3836c4"/></linearGradient>
<linearGradient id="belt" x1="0" y1="0" x2="1" y2="0"><stop offset="0" stop-color="#3cf020"/><stop offset=".3" stop-color="#90f014"/><stop offset=".5" stop-color="#c8f010"/><stop offset=".7" stop-color="#90f014"/><stop offset="1" stop-color="#3cf020"/></linearGradient>
<linearGradient id="topf" gradientUnits="userSpaceOnUse" x1="1700" y1="0" x2="2330" y2="0"><stop offset="0" stop-color="#0a98b0"/><stop offset=".5" stop-color="#0a94b8"/><stop offset=".64" stop-color="#12a8a0"/><stop offset=".745" stop-color="#2ce020"/><stop offset="1" stop-color="#2ce020"/></linearGradient>
<linearGradient id="diag" gradientUnits="userSpaceOnUse" x1="1800" y1="400" x2="1700" y2="470"><stop offset="0" stop-color="#0a98b0"/><stop offset=".5" stop-color="#20cc30"/><stop offset="1" stop-color="#2fee22"/></linearGradient>
<linearGradient id="rp" gradientUnits="userSpaceOnUse" x1="0" y1="380" x2="0" y2="800"><stop offset="0" stop-color="#2ce020"/><stop offset=".25" stop-color="#2ce020"/><stop offset="1" stop-color="#34e828"/></linearGradient>
<linearGradient id="rpd" gradientUnits="userSpaceOnUse" x1="0" y1="430" x2="0" y2="560"><stop offset="0" stop-color="#0a8a90"/><stop offset="1" stop-color="#066a70"/></linearGradient>
<linearGradient id="rpo" gradientUnits="userSpaceOnUse" x1="0" y1="455" x2="0" y2="480"><stop offset="0" stop-color="#2ce020"/><stop offset="1" stop-color="#0a8fb0"/></linearGradient>
<radialGradient id="bl0" cx="1950" cy="1080" r="380" gradientUnits="userSpaceOnUse" gradientTransform="translate(1950 1080) scale(1 .74) translate(-1950 -1080)"><stop offset="0" stop-color="#0a8ee0"/><stop offset=".6" stop-color="#0a94cc" stop-opacity=".8"/><stop offset="1" stop-color="#0a9ba3" stop-opacity="0"/></radialGradient>
<linearGradient id="wedge" gradientUnits="userSpaceOnUse" x1="1930" y1="0" x2="2100" y2="0"><stop offset="0" stop-color="#2ce020" stop-opacity="0"/><stop offset="1" stop-color="#2ce020"/></linearGradient>
</defs>
<rect x="1848" y="1545" width="22" height="62" fill="#c9c9c9" stroke="#8c8c8c" stroke-width="1"/>
<path d="M2485,1534 H2553 L2556,1594 L2485,1597.5 Z" fill="#cacaca" stroke="#8c8c8c" stroke-width="1"/><path d="M2520,1536 L2522,1594 M2541,1540 V1556 H2553" fill="none" stroke="#8c8c8c" stroke-width="1"/>
<path d="M1869,1604 L1915,1607 L1918,1613 L1869,1609 Z" fill="#0b0b8b"/>
<path d="M1927,1607.5 L2330,1596 L2330,1600 L2005,1610 L1927,1612 Z" fill="#0b0b8b"/>
<path d="M2190,1592 L2408,1588 L2408,1592 L2190,1598 Z" fill="#0b0b8b"/>
<g clip-path="url(#dc)">
<rect x="1300" y="300" width="1300" height="1330" fill="#0a9ba3"/>
<ellipse cx="1950" cy="1080" rx="380" ry="280" fill="url(#bl0)"/>
<ellipse cx="1760" cy="1075" rx="330" ry="330" fill="url(#bl1)"/>
<ellipse cx="1672" cy="1050" rx="62" ry="62" fill="url(#pu1)"/>
<path d="M2130.0,1080.0 C2135.0,1056.7 2168.3,1058.3 2180.0,1070.0 C2191.7,1081.7 2198.3,1118.3 2200.0,1150.0 C2201.7,1181.7 2195.0,1235.0 2190.0,1260.0 C2185.0,1285.0 2176.7,1308.3 2170.0,1300.0 C2163.3,1291.7 2156.7,1246.7 2150.0,1210.0 C2143.3,1173.3 2125.0,1103.3 2130.0,1080.0 Z" fill="#0a90c8" />
<path d="M1450.0,590.0 L1384.0,684.0 L1340.0,722.0 L1400.0,740.0 L1480.0,700.0 L1490.0,640.0 Z" fill="#2ff024" />
<path d="M2251.5,372.1 L2246.9,372.3 L2241.3,372.6 L2234.4,373.0 L2226.0,373.4 L2215.7,373.9 L2203.8,374.6 L2190.6,375.4 L2176.5,376.2 L2161.7,377.2 L2146.8,378.2 L2131.9,379.2 L2117.4,380.2 L2102.9,381.3 L2087.7,382.4 L2072.2,383.6 L2056.6,384.9 L2041.3,386.1 L2026.6,387.4 L2012.7,388.6 L2000.0,389.7 L1988.6,390.8 L1978.4,391.8 L1969.1,392.7 L1960.3,393.7 L1951.7,394.6 L1943.2,395.6 L1934.4,396.7 L1925.0,397.8 L1914.9,399.0 L1904.4,400.3 L1893.7,401.7 L1883.0,403.1 L1872.4,404.5 L1862.1,405.9 L1852.4,407.3 L1843.5,408.7 L1835.3,410.0 L1827.7,411.4 L1820.5,412.7 L1813.7,414.0 L1807.2,415.3 L1801.0,416.7 L1795.0,418.1 L1789.0,419.6 L1783.2,421.1 L1777.6,422.7 L1772.2,424.3 L1767.0,426.0 L1762.0,427.6 L1757.3,429.4 L1752.7,431.2 L1748.4,433.0 L1744.3,434.9 L1740.6,436.8 L1737.1,438.7 L1733.8,440.7 L1702.0,389.9 L1706.9,386.9 L1712.3,383.9 L1718.1,380.9 L1724.1,378.1 L1730.1,375.6 L1736.0,373.3 L1742.1,371.1 L1748.3,369.0 L1754.5,367.0 L1760.9,365.1 L1767.5,363.2 L1774.1,361.5 L1780.9,359.8 L1787.7,358.2 L1794.7,356.7 L1801.9,355.2 L1809.4,353.7 L1817.2,352.3 L1825.3,350.9 L1834.1,349.4 L1843.6,348.0 L1853.7,346.5 L1864.3,345.0 L1875.1,343.6 L1886.1,342.2 L1897.0,340.8 L1907.6,339.5 L1917.8,338.2 L1927.2,337.1 L1936.2,336.0 L1944.9,335.0 L1953.7,334.0 L1962.8,333.0 L1972.5,332.1 L1982.9,331.0 L1994.5,329.9 L2007.4,328.8 L2021.5,327.6 L2036.3,326.3 L2051.8,325.1 L2067.4,323.8 L2083.1,322.6 L2098.4,321.4 L2113.1,320.4 L2127.7,319.3 L2142.8,318.3 L2157.9,317.3 L2172.7,316.4 L2187.0,315.5 L2200.4,314.7 L2212.5,314.0 L2222.9,313.5 L2231.3,313.0 L2238.1,312.7 L2244.1,312.4 L2249.8,312.2 Z" fill="url(#topf)" />
<path d="M1777.6,422.7 L1772.2,424.3 L1767.0,426.0 L1762.0,427.6 L1757.3,429.4 L1752.7,431.2 L1748.4,433.0 L1744.3,434.9 L1740.6,436.8 L1737.1,438.7 L1733.8,440.7 L1730.7,442.8 L1727.5,444.9 L1724.3,447.2 L1721.0,449.5 L1717.7,451.9 L1714.6,454.2 L1711.5,456.7 L1708.3,459.2 L1705.1,461.8 L1701.7,464.7 L1698.0,467.8 L1694.0,471.2 L1689.6,474.9 L1685.0,478.8 L1680.2,483.0 L1675.2,487.3 L1669.9,491.9 L1664.5,496.6 L1658.8,501.5 L1653.0,506.5 L1646.8,511.8 L1640.1,517.5 L1633.1,523.5 L1626.0,529.6 L1618.9,535.7 L1611.9,541.7 L1605.2,547.4 L1599.0,552.7 L1593.2,557.7 L1587.5,562.5 L1582.1,567.1 L1576.8,571.5 L1571.8,575.8 L1567.0,580.0 L1562.4,584.1 L1558.0,588.0 L1553.9,591.8 L1550.0,595.3 L1546.4,598.7 L1543.0,602.0 L1539.7,605.2 L1536.7,608.4 L1533.8,611.7 L1531.0,615.0 L1528.4,618.4 L1526.0,621.9 L1523.7,625.5 L1521.6,629.0 L1519.7,632.5 L1517.9,635.9 L1516.3,639.2 L1514.7,642.4 L1513.3,645.5 L1512.0,648.4 L1510.8,651.3 L1509.8,654.0 L1508.9,656.8 L1508.2,659.5 L1507.5,662.2 L1507.0,665.0 L1506.6,667.7 L1506.2,670.4 L1506.0,673.1 L1505.9,675.7 L1505.9,678.4 L1506.1,681.2 L1506.4,684.0 L1507.0,687.0 L1507.8,690.2 L1508.9,693.6 L1510.1,697.1 L1511.5,700.7 L1428.2,734.6 L1425.9,728.8 L1423.6,722.3 L1421.2,714.7 L1419.1,706.2 L1417.5,697.9 L1416.5,689.9 L1416.0,682.0 L1415.9,674.4 L1416.2,667.2 L1416.7,660.7 L1417.5,654.9 L1418.4,649.3 L1419.5,643.3 L1421.0,637.0 L1422.8,630.8 L1424.7,624.8 L1426.8,619.1 L1429.0,613.6 L1431.2,608.4 L1433.4,603.7 L1435.6,599.4 L1437.8,594.8 L1440.5,589.7 L1443.6,584.2 L1447.1,578.3 L1451.0,572.1 L1455.5,565.6 L1460.5,559.1 L1465.6,552.9 L1470.6,547.4 L1475.4,542.3 L1480.1,537.6 L1484.6,533.3 L1488.9,529.3 L1493.0,525.4 L1497.5,521.4 L1502.5,516.9 L1507.8,512.2 L1513.1,507.6 L1518.5,503.0 L1523.9,498.4 L1529.3,493.8 L1534.8,489.2 L1540.5,484.3 L1546.7,479.0 L1553.4,473.3 L1560.4,467.3 L1567.5,461.2 L1574.7,455.1 L1581.6,449.1 L1588.2,443.5 L1594.4,438.2 L1600.1,433.3 L1605.6,428.5 L1611.0,423.9 L1616.3,419.3 L1621.4,414.8 L1626.4,410.5 L1631.4,406.3 L1636.0,402.4 L1640.1,398.9 L1643.8,395.8 L1647.5,392.7 L1651.3,389.5 L1655.4,386.2 L1659.8,382.8 L1664.4,379.4 L1668.8,376.2 L1672.7,373.5 L1676.5,370.8 L1680.9,367.8 L1686.0,364.5 L1691.8,361.0 L1698.1,357.4 L1705.0,353.9 L1712.0,350.7 L1718.8,347.8 L1725.4,345.2 L1732.1,342.8 L1738.9,340.5 L1745.7,338.3 L1752.6,336.2 Z" fill="url(#diag)" />
<path d="M2324.9,434.0 L2324.4,430.2 L2324.0,426.5 L2323.4,423.0 L2322.6,419.6 L2321.7,416.3 L2320.8,413.3 L2319.8,410.4 L2318.7,407.7 L2317.5,405.1 L2316.2,402.6 L2314.7,400.2 L2313.0,397.8 L2311.1,395.4 L2309.1,393.2 L2306.9,391.0 L2304.6,388.8 L2302.1,386.8 L2299.5,384.9 L2296.8,383.1 L2294.0,381.5 L2291.1,380.0 L2288.1,378.6 L2285.0,377.3 L2281.8,376.1 L2278.4,375.0 L2274.7,374.1 L2270.9,373.4 L2266.8,372.8 L2262.8,372.4 L2259.1,372.2 L2255.5,372.1 L2251.5,372.1 L2246.9,372.3 L2241.3,372.6 L2234.4,373.0 L2226.0,373.4 L2215.7,373.9 L2203.8,374.6 L2190.6,375.4 L2176.5,376.2 L2170.3,276.4 L2184.6,275.6 L2198.1,274.8 L2210.3,274.1 L2220.8,273.5 L2229.2,273.1 L2236.0,272.7 L2242.3,272.4 L2248.7,272.2 L2255.7,272.1 L2263.5,272.2 L2271.3,272.7 L2279.1,273.6 L2287.6,274.8 L2296.5,276.5 L2305.2,278.7 L2313.5,281.3 L2321.4,284.2 L2328.8,287.2 L2335.5,290.4 L2342.1,293.8 L2349.2,298.0 L2356.5,302.7 L2363.4,307.8 L2370.0,313.2 L2376.2,318.9 L2382.1,324.8 L2387.7,331.1 L2393.0,337.8 L2398.0,344.9 L2402.7,352.5 L2406.9,360.2 L2410.5,368.0 L2413.5,375.5 L2416.0,382.6 L2418.0,389.2 L2419.8,396.0 L2421.5,403.8 L2422.8,411.5 L2423.7,418.3 L2424.4,424.0 Z" fill="url(#rp)" />
<path d="M2322.6,419.6 L2323.0,422.9 L2323.6,427.3 L2324.3,432.7 L2325.0,438.7 L2325.8,445.3 L2326.6,452.2 L2327.4,459.5 L2328.2,467.4 L2329.0,475.8 L2329.9,484.7 L2330.9,494.0 L2332.0,503.8 L2333.2,514.2 L2334.5,525.2 L2335.9,536.7 L2337.4,548.5 L2338.8,560.2 L2340.2,571.7 L2341.6,583.6 L2343.1,596.1 L2344.6,608.7 L2346.0,620.6 L2347.3,631.1 L2348.4,639.7 L2349.3,645.5 L2349.9,648.8 L2350.5,650.7 L2351.0,652.5 L2351.6,655.2 L2352.4,660.0 L2353.3,666.8 L2354.4,674.7 L2355.5,683.5 L2356.6,693.1 L2357.8,703.3 L2359.0,714.0 L2360.2,725.6 L2361.5,738.3 L2362.8,751.6 L2364.2,765.0 L2365.6,778.0 L2367.0,790.0 L2466.2,777.8 L2465.0,766.9 L2463.7,754.7 L2462.4,741.6 L2461.0,728.3 L2459.7,715.2 L2458.4,703.0 L2457.1,691.9 L2455.9,681.4 L2454.7,671.4 L2453.6,662.1 L2452.5,653.6 L2451.3,645.5 L2450.0,637.2 L2448.0,628.1 L2446.6,623.0 L2447.4,626.2 L2447.8,628.6 L2447.4,625.9 L2446.5,618.6 L2445.3,608.6 L2443.9,596.9 L2442.4,584.5 L2440.9,571.8 L2439.5,559.8 L2438.1,548.1 L2436.6,536.3 L2435.2,524.6 L2433.8,513.2 L2432.5,502.5 L2431.4,492.5 L2430.3,483.3 L2429.4,474.4 L2428.5,465.7 L2427.7,457.3 L2426.8,449.1 L2426.0,441.2 L2425.1,433.6 L2424.3,426.6 L2423.5,420.2 L2422.8,414.7 L2422.2,410.3 L2421.8,407.1 Z" fill="url(#rp)" />
<path d="M2161.4,372.2 L2146.4,373.2 L2131.5,374.2 L2117.0,375.2 L2102.5,376.3 L2087.3,377.4 L2071.8,378.6 L2056.2,379.9 L2040.9,381.1 L2026.2,382.4 L2012.3,383.6 L1999.5,384.7 L1988.2,385.8 L1977.9,386.8 L1968.5,387.7 L1959.7,388.7 L1951.2,389.7 L1942.6,390.6 L1933.8,391.7 L1932.8,383.8 L1941.7,382.7 L1950.3,381.7 L1958.8,380.7 L1967.7,379.8 L1977.1,378.8 L1987.4,377.8 L1998.8,376.8 L2011.6,375.6 L2025.5,374.4 L2040.2,373.2 L2055.6,371.9 L2071.1,370.7 L2086.7,369.5 L2101.9,368.3 L2116.5,367.2 L2131.0,366.2 L2145.9,365.2 L2160.9,364.2 Z" fill="url(#wedge)" />
<path d="M2175.6,362.3 L2160.8,363.2 L2145.8,364.2 L2130.9,365.2 L2116.4,366.2 L2101.8,367.3 L2086.6,368.5 L2071.1,369.7 L2055.5,370.9 L2040.1,372.2 L2025.4,373.4 L2011.5,374.6 L1998.7,375.8 L1987.3,376.8 L1977.0,377.8 L1967.6,378.8 L1958.7,379.7 L1950.1,380.7 L1941.6,381.7 L1932.7,382.8 L1923.3,383.9 L1913.2,385.1 L1902.7,386.4 L1892.0,387.8 L1881.1,389.2 L1870.5,390.6 L1860.2,392.0 L1850.4,393.5 L1841.3,394.9 L1833.0,396.2 L1825.2,397.6 L1817.9,398.9 L1810.9,400.3 L1804.3,401.6 L1797.9,403.0 L1791.7,404.5 L1785.5,406.0 L1779.5,407.6 L1773.7,409.3 L1768.1,410.9 L1762.6,412.7" fill="none" stroke="#30d048" stroke-width="4.5" stroke-dasharray="60 14 120 9"/>
<path d="M2250.7,345.1 L2245.6,345.3 L2239.9,345.6 L2233.0,346.0 L2224.6,346.4 L2214.3,347.0 L2202.3,347.6 L2189.0,348.4 L2174.8,349.3 L2160.0,350.2 L2145.0,351.2 L2130.0,352.2 L2115.5,353.3 L2100.8,354.3 L2085.6,355.5 L2070.0,356.7 L2054.4,358.0 L2039.1,359.2 L2024.3,360.5 L2010.3,361.7 L1997.5,362.8 L1986.1,363.9 L1975.7,364.9 L1966.2,365.9 L1957.3,366.8 L1948.7,367.8 L1940.1,368.8 L1931.2,369.9 L1921.7,371.0 L1911.6,372.2 L1901.1,373.5 L1890.3,374.9 L1879.5,376.3 L1868.7,377.7 L1858.3,379.2 L1848.4,380.6 L1839.3,382.0 L1830.8,383.4 L1822.9,384.8 L1815.5,386.1 L1808.4,387.5 L1801.6,388.9 L1795.0,390.4 L1788.6,391.9 L1782.3,393.4 L1776.1,395.1 L1770.1,396.8 L1764.2,398.5 L1758.6,400.3 L1753.1,402.2 L1747.7,404.1 L1742.6,406.2 L1737.5,408.3 L1732.5,410.6" fill="none" stroke="#087890" stroke-width="5" />
<path d="M2250.9,351.1 L2245.9,351.3 L2240.2,351.6 L2233.3,352.0 L2224.9,352.4 L2214.6,353.0 L2202.6,353.6 L2189.4,354.4 L2175.2,355.3 L2160.4,356.2 L2145.4,357.2 L2130.4,358.2 L2115.9,359.3 L2101.3,360.3 L2086.1,361.5 L2070.5,362.7 L2054.9,363.9 L2039.6,365.2 L2024.8,366.4 L2010.9,367.6 L1998.1,368.8 L1986.6,369.9 L1976.3,370.9 L1966.9,371.8 L1958.0,372.8 L1949.4,373.8 L1940.8,374.8 L1931.9,375.8 L1922.5,377.0 L1912.4,378.2 L1901.8,379.5 L1891.1,380.9 L1880.2,382.3 L1869.5,383.7 L1859.2,385.1 L1849.3,386.6 L1840.2,388.0 L1831.8,389.3 L1824.0,390.7 L1816.6,392.0 L1809.6,393.4 L1802.9,394.8 L1796.4,396.2 L1790.0,397.7 L1783.8,399.3 L1777.7,400.9 L1771.7,402.5 L1766.0,404.2 L1760.4,406.0 L1755.1,407.8 L1749.9,409.7 L1744.8,411.7 L1739.9,413.8 L1735.2,416.0 L1730.7,418.3 L1726.6,420.6" fill="none" stroke="#5c7078" stroke-width="1.1" />
<path d="M2250.6,339.1 L2245.4,339.3 L2239.6,339.6 L2232.7,340.0 L2224.3,340.4 L2213.9,341.0 L2201.9,341.7 L2188.6,342.4 L2174.4,343.3 L2159.6,344.2 L2144.6,345.2 L2129.6,346.3 L2115.0,347.3 L2100.4,348.4 L2085.1,349.5 L2069.6,350.7 L2053.9,352.0 L2038.6,353.2 L2023.8,354.5 L2009.8,355.7 L1997.0,356.8 L1985.5,357.9 L1975.1,358.9 L1965.6,359.9 L1956.7,360.9 L1948.0,361.8 L1939.4,362.8 L1930.5,363.9 L1921.0,365.0 L1910.9,366.3 L1900.4,367.6 L1889.5,368.9 L1878.7,370.4 L1867.9,371.8 L1857.5,373.2 L1847.6,374.7 L1838.3,376.1 L1829.8,377.5 L1821.9,378.9 L1814.4,380.2 L1807.2,381.6 L1800.3,383.1 L1793.7,384.5 L1787.2,386.0 L1780.8,387.6 L1774.5,389.3 L1768.4,391.0 L1762.5,392.8 L1756.7,394.6 L1751.1,396.5 L1745.6,398.5 L1740.3,400.6 L1735.1,402.8 L1729.9,405.2 L1725.0,407.7 L1720.5,410.2" fill="none" stroke="#5c7078" stroke-width="1.1" />
<path d="M2250.4,332.1 L2245.0,332.4 L2239.2,332.7 L2232.3,333.0 L2223.9,333.5 L2213.6,334.0 L2201.5,334.7 L2188.2,335.4 L2174.0,336.3 L2159.2,337.3 L2144.1,338.3 L2129.1,339.3 L2114.5,340.3 L2099.9,341.4 L2084.6,342.5 L2069.0,343.8 L2053.4,345.0 L2038.0,346.3 L2023.2,347.5 L2009.2,348.7 L1996.4,349.9 L1984.8,350.9 L1974.4,352.0 L1964.9,352.9 L1955.9,353.9 L1947.2,354.9 L1938.5,355.9 L1929.6,356.9 L1920.2,358.1 L1910.1,359.3 L1899.5,360.6 L1888.7,362.0 L1877.8,363.4 L1867.0,364.9 L1856.5,366.3 L1846.5,367.8 L1837.2,369.2 L1828.7,370.6 L1820.7,372.0 L1813.1,373.4 L1805.8,374.8 L1798.9,376.2 L1792.2,377.7 L1785.6,379.2 L1779.1,380.8 L1772.7,382.5 L1766.5,384.3 L1760.4,386.1 L1754.5,388.0 L1748.7,389.9 L1743.1,392.0 L1737.6,394.1 L1732.2,396.4 L1726.9,398.9 L1721.7,401.5 L1717.0,404.2" fill="none" stroke="#5c7078" stroke-width="1.1" />
<path d="M1731.9,420.5 L1727.8,422.8 L1724.0,425.1 L1720.4,427.4 L1717.0,429.7 L1713.7,432.0 L1710.3,434.4 L1706.7,437.0 L1703.3,439.6 L1699.9,442.2 L1696.6,444.9 L1693.3,447.6 L1689.8,450.5 L1686.1,453.6 L1682.1,457.1 L1677.7,460.8 L1673.0,464.8 L1668.1,469.0 L1663.1,473.3 L1657.8,477.9 L1652.4,482.6 L1646.8,487.5 L1640.9,492.5 L1634.7,497.8 L1628.1,503.5 L1621.1,509.4 L1614.0,515.5 L1606.8,521.6 L1599.9,527.6 L1593.2,533.3 L1587.0,538.6 L1581.2,543.6 L1575.5,548.4 L1570.1,553.0 L1564.8,557.5 L1559.7,561.8 L1554.8,566.1 L1550.1,570.2 L1545.6,574.3 L1541.4,578.1 L1537.4,581.7 L1533.7,585.3 L1530.0,588.8 L1526.5,592.3 L1523.1,595.9 L1519.7,599.6 L1516.5,603.5 L1513.4,607.6 L1510.6,611.7 L1508.0,615.8 L1505.6,619.8 L1503.4,623.7 L1501.5,627.4 L1499.7,631.0 L1498.0,634.4 L1496.4,637.8 L1494.9,641.2 L1493.6,644.6 L1492.3,648.0 L1491.2,651.4 L1490.3,654.9 L1489.4,658.3 L1488.8,661.8 L1488.3,665.1" fill="none" stroke="#3c9c10" stroke-width="6" />
<path d="M1733.0,398.2 L1727.7,400.7 L1722.7,403.3 L1718.0,405.9 L1713.7,408.5 L1709.7,411.1 L1706.0,413.6 L1702.5,416.0 L1699.0,418.5 L1695.2,421.3 L1691.4,424.1 L1687.8,426.9 L1684.3,429.8 L1680.8,432.6 L1677.3,435.6 L1673.6,438.7 L1669.5,442.1 L1665.0,445.9 L1660.3,450.0 L1655.4,454.2 L1650.3,458.6 L1645.1,463.2 L1639.6,467.9 L1634.0,472.7 L1628.2,477.7 L1622.1,483.0 L1615.4,488.7 L1608.4,494.6 L1601.3,500.7 L1594.2,506.8 L1587.2,512.8 L1580.5,518.5 L1574.3,523.8 L1568.5,528.8 L1562.9,533.5 L1557.5,538.1 L1552.2,542.6 L1547.0,547.0 L1542.0,551.4 L1537.1,555.7 L1532.4,559.9 L1528.2,563.8 L1524.2,567.4 L1520.3,571.1 L1516.4,574.8 L1512.6,578.6 L1508.8,582.6 L1505.0,586.9 L1501.2,591.4 L1497.6,596.1 L1494.3,600.9 L1491.4,605.6 L1488.7,610.1 L1486.3,614.4 L1484.1,618.5 L1482.2,622.4 L1480.4,626.1 L1478.6,629.8 L1476.9,633.7 L1475.4,637.7 L1473.9,641.7 L1472.6,645.8 L1471.4,650.0 L1470.4,654.2 L1469.6,658.4 L1469.0,662.3 L1468.4,666.3 L1468.1,670.6" fill="none" stroke="#5c7048" stroke-width="1.6" />
<path d="M1736.3,405.6 L1731.2,407.9 L1726.5,410.3 L1722.0,412.8 L1717.9,415.3 L1714.1,417.8 L1710.5,420.2 L1707.1,422.6 L1703.6,425.1 L1699.9,427.7 L1696.3,430.4 L1692.8,433.2 L1689.3,436.0 L1685.9,438.8 L1682.4,441.7 L1678.7,444.9 L1674.7,448.3 L1670.2,452.0 L1665.5,456.0 L1660.6,460.3 L1655.5,464.6 L1650.3,469.2 L1644.9,473.9 L1639.3,478.8 L1633.5,483.7 L1627.3,489.0 L1620.6,494.7 L1613.6,500.7 L1606.5,506.8 L1599.4,512.9 L1592.4,518.9 L1585.7,524.6 L1579.5,529.9 L1573.7,534.8 L1568.1,539.6 L1562.7,544.2 L1557.4,548.7 L1552.2,553.1 L1547.2,557.4 L1542.4,561.7 L1537.8,565.8 L1533.6,569.7 L1529.6,573.3 L1525.8,576.9 L1522.0,580.5 L1518.3,584.2 L1514.6,588.1 L1511.0,592.1 L1507.5,596.4 L1504.1,600.8 L1501.0,605.3 L1498.2,609.7 L1495.6,614.1 L1493.3,618.2 L1491.2,622.2 L1489.4,625.9 L1487.6,629.5 L1485.9,633.1 L1484.3,636.8 L1482.8,640.5 L1481.5,644.3 L1480.2,648.1 L1479.1,652.0 L1478.2,655.9 L1477.5,659.8 L1476.9,663.4 L1476.4,667.2 L1476.0,671.1" fill="none" stroke="#5c7048" stroke-width="1" />
<path d="M1727.4,385.4 L1721.6,388.1 L1716.1,390.9 L1710.9,393.8 L1706.2,396.7 L1701.9,399.5 L1698.0,402.1 L1694.5,404.6 L1690.9,407.1 L1686.9,410.0 L1682.9,413.0 L1679.1,416.0 L1675.4,418.9 L1671.8,421.9 L1668.3,424.9 L1664.6,428.0 L1660.5,431.4 L1656.0,435.3 L1651.2,439.3 L1646.2,443.6 L1641.1,448.0 L1635.9,452.6 L1630.5,457.3 L1624.9,462.1 L1619.1,467.0 L1613.0,472.3 L1606.3,478.0 L1599.3,484.0 L1592.2,490.1 L1585.1,496.2 L1578.1,502.1 L1571.4,507.9 L1565.2,513.2 L1559.4,518.1 L1553.9,522.8 L1548.4,527.4 L1543.1,532.0 L1537.9,536.4 L1532.8,540.8 L1527.8,545.2 L1523.0,549.5 L1518.7,553.4 L1514.7,557.2 L1510.7,560.9 L1506.6,564.8 L1502.6,568.8 L1498.5,573.1 L1494.4,577.7 L1490.3,582.7 L1486.3,587.9 L1482.7,593.1 L1479.4,598.2 L1476.5,603.1 L1473.9,607.8 L1471.7,612.1 L1469.6,616.2 L1467.8,620.0 L1465.9,624.1 L1464.0,628.3 L1462.3,632.7 L1460.7,637.1 L1459.2,641.8 L1457.8,646.5 L1456.7,651.3 L1455.8,655.9" fill="none" stroke="#5c7048" stroke-width="1" />
<path d="M1762.0,379.0 L1721.0,392.0 L1694.0,407.0 L1661.0,430.0 L1626.0,458.0 L1572.0,501.0 L1517.0,547.0 L1463.0,596.0 L1422.0,640.0 L1390.0,680.0 L1354.0,710.0 L1341.0,722.5" fill="none" stroke="#0a8cb0" stroke-width="13"/>
<path d="M2384.0,324.0 L2280.0,328.0 L2172.0,334.0 L2036.0,343.5 L1900.0,357.0 L1816.0,368.0 L1762.0,379.0 L1721.0,392.0 L1694.0,407.0 L1661.0,430.0 L1626.0,458.0 L1572.0,501.0 L1517.0,547.0 L1463.0,596.0 L1422.0,640.0 L1390.0,680.0 L1354.0,710.0 L1341.0,722.5" fill="none" stroke="#101090" stroke-width="2.2"/>
<path d="M2343.9,436.4 L2344.7,443.1 L2345.5,450.1 L2346.3,457.5 L2347.1,465.5 L2347.9,473.9 L2348.8,482.7 L2349.8,492.0 L2350.9,501.7 L2352.1,511.9 L2353.4,522.9 L2354.8,534.4 L2356.2,546.1 L2357.7,557.9 L2359.1,569.4 L2360.5,581.3 L2362.0,593.9 L2363.4,606.4 L2364.8,618.3 L2366.1,628.7 L2367.2,637.1 L2368.0,642.3 L2368.5,644.5 L2368.8,645.5 L2369.5,647.9 L2370.3,651.8 L2371.2,657.2 L2372.2,664.3 L2373.2,672.3 L2374.3,681.2 L2375.5,690.9 L2376.7,701.2 L2377.9,711.9 L2379.1,723.6 L2380.4,736.4 L2381.8,749.7 L2383.1,763.1 L2384.5,775.9 L2385.9,787.7 L2387.2,797.9 L2388.5,807.0 L2396.4,805.8 L2395.1,796.8 L2393.8,786.7 L2392.4,775.0 L2391.1,762.2 L2389.7,748.9 L2388.4,735.6 L2387.1,722.8 L2385.8,711.0 L2384.6,700.3 L2383.4,690.0 L2382.3,680.3 L2381.1,671.3 L2380.1,663.2 L2379.1,656.1 L2378.2,650.4 L2377.2,645.9 L2376.4,643.2 L2376.3,642.7 L2375.9,640.9 L2375.1,636.0 L2374.1,627.7 L2372.8,617.3 L2371.4,605.5 L2369.9,593.0 L2368.4,580.4 L2367.0,568.5 L2365.6,556.9 L2364.2,545.2 L2362.7,533.5 L2361.3,522.0 L2360.0,511.0 L2358.8,500.8 L2357.8,491.1 L2356.8,481.9 L2355.9,473.1 L2355.1,464.7 L2354.2,456.7 L2353.4,449.2 L2352.6,442.1 L2351.8,435.4 Z" fill="#0a96a0" />
<path d="M2362.7,434.1 L2363.5,440.9 L2364.4,448.0 L2365.2,455.5 L2366.0,463.6 L2366.8,472.0 L2367.7,480.8 L2368.7,490.0 L2369.8,499.5 L2370.9,509.7 L2372.3,520.7 L2373.6,532.1 L2375.1,543.8 L2376.5,555.6 L2377.9,567.2 L2379.4,579.1 L2380.8,591.7 L2382.3,604.2 L2383.7,616.0 L2385.0,626.4 L2386.0,634.4 L2386.7,639.0 L2387.0,640.2 L2387.0,640.2 L2387.9,643.2 L2389.0,648.4 L2390.0,654.5 L2391.0,661.8 L2392.1,669.9 L2393.2,678.9 L2394.3,688.7 L2395.5,699.0 L2396.8,709.8 L2398.0,721.6 L2399.3,734.5 L2400.7,747.8 L2402.0,761.1 L2403.4,773.8 L2404.7,785.4 L2406.0,795.4 L2407.3,804.2 L2415.2,803.0 L2413.9,794.3 L2412.7,784.4 L2411.3,772.9 L2410.0,760.3 L2408.6,747.0 L2407.3,733.7 L2406.0,720.8 L2404.7,709.0 L2403.5,698.1 L2402.3,687.7 L2401.1,678.0 L2400.0,668.9 L2398.9,660.7 L2397.9,653.3 L2396.9,646.9 L2395.6,641.3 L2394.7,638.0 L2394.8,638.4 L2394.6,637.7 L2394.0,633.3 L2392.9,625.3 L2391.6,615.0 L2390.2,603.3 L2388.8,590.8 L2387.3,578.2 L2385.9,566.2 L2384.5,554.6 L2383.0,542.9 L2381.6,531.1 L2380.2,519.7 L2378.9,508.8 L2377.7,498.6 L2376.7,489.1 L2375.7,480.0 L2374.8,471.2 L2374.0,462.7 L2373.1,454.7 L2372.3,447.1 L2371.5,439.9 L2370.7,433.1 Z" fill="#0a96a0" />
<path d="M2384.9,461.6 L2385.7,470.1 L2386.6,478.8 L2387.6,487.9 L2388.6,497.4 L2389.8,507.5 L2391.1,518.4 L2392.5,529.8 L2393.9,541.5 L2395.4,553.3 L2396.8,564.9 L2398.2,576.9 L2399.7,589.5 L2401.2,602.0 L2402.6,613.7 L2403.8,624.0 L2404.9,631.8 L2405.5,635.8 L2405.5,635.9 L2405.3,634.9 L2406.3,638.6 L2407.7,645.0 L2408.8,651.7 L2409.8,659.3 L2410.9,667.5 L2412.0,676.6 L2413.2,686.4 L2414.4,696.8 L2415.7,707.8 L2416.9,719.7 L2418.2,732.6 L2419.6,745.9 L2420.9,759.1 L2422.2,771.7 L2423.6,783.0 L2424.8,792.8 L2426.1,801.5 L2427.3,809.8 L2479.7,801.7 L2478.5,793.8 L2477.4,785.7 L2476.2,776.5 L2474.9,765.8 L2473.6,753.7 L2472.3,740.6 L2471.0,727.3 L2469.7,714.2 L2468.3,701.9 L2467.1,690.8 L2465.8,680.2 L2464.6,670.2 L2463.5,660.9 L2462.4,652.3 L2461.2,644.0 L2459.8,635.4 L2457.7,625.6 L2456.2,620.3 L2457.1,623.9 L2457.7,626.9 L2457.3,624.5 L2456.4,617.3 L2455.2,607.4 L2453.8,595.8 L2452.3,583.3 L2450.9,570.7 L2449.4,558.6 L2448.0,546.9 L2446.5,535.1 L2445.1,523.4 L2443.7,512.0 L2442.4,501.3 L2441.3,491.4 L2440.3,482.3 L2439.4,473.4 L2438.5,464.7 L2437.6,456.3 Z" fill="url(#rpo)" />
<path d="M2356.3,765.9 L2357.6,778.9 L2359.1,791.0 L2360.4,801.5 L2361.8,810.9 L2363.1,819.7 L2364.5,828.9 L2366.2,839.1 L2368.1,851.2 L2370.4,865.7 L2372.9,882.0 L2375.7,899.4 L2378.5,917.2 L2381.4,934.7 L2384.1,951.3 L2386.8,967.1 L2389.5,982.5 L2392.3,997.7 L2394.9,1012.5 L2397.6,1027.1 L2400.1,1041.4 L2402.6,1055.2 L2405.1,1068.5 L2407.5,1081.4 L2409.8,1094.3 L2412.0,1107.5 L2414.1,1121.1 L2416.0,1135.5 L2417.8,1150.5 L2419.4,1165.8 L2421.0,1181.2 L2422.5,1196.3 L2424.0,1210.8 L2425.5,1225.1 L2427.0,1239.3 L2428.4,1253.3 L2429.7,1266.7 L2431.0,1279.3 L2432.0,1290.7 L2433.0,1301.3 L2433.8,1311.4 L2434.5,1320.6 L2435.1,1328.7 L2435.6,1335.5 L2436.0,1340.6 L2503.8,1335.4 L2503.4,1330.4 L2502.9,1323.7 L2502.3,1315.4 L2501.6,1305.9 L2500.7,1295.5 L2499.8,1284.5 L2498.7,1272.8 L2497.4,1260.1 L2496.1,1246.5 L2494.7,1232.4 L2493.2,1218.1 L2491.7,1203.8 L2490.2,1189.3 L2488.7,1174.3 L2487.0,1158.7 L2485.3,1142.9 L2483.5,1127.1 L2481.4,1111.6 L2479.2,1096.8 L2476.8,1082.7 L2474.4,1069.2 L2471.9,1056.1 L2469.5,1043.0 L2467.1,1029.4 L2464.5,1015.1 L2461.9,1000.4 L2459.2,985.6 L2456.5,970.6 L2453.8,955.4 L2451.2,940.0 L2448.5,923.7 L2445.6,906.4 L2442.8,888.7 L2440.1,871.4 L2437.5,855.2 L2435.3,840.7 L2433.3,828.5 L2431.7,818.2 L2430.3,809.3 L2429.0,801.0 L2427.8,792.4 L2426.5,782.7 L2425.2,771.3 L2423.9,758.8 Z" fill="#0a98a2" />
<path d="M2352.0,429.2 L2352.8,435.3 L2353.6,442.0 L2354.4,449.1 L2355.2,456.6 L2356.0,464.6 L2356.9,473.0 L2357.8,481.8 L2358.8,491.0 L2359.8,500.6 L2361.0,510.9 L2362.3,521.9 L2363.7,533.3 L2365.2,545.0 L2366.6,556.8 L2368.0,568.4 L2369.4,580.3 L2370.9,592.9 L2372.4,605.4 L2373.8,617.2 L2375.1,627.6 L2376.1,635.8 L2376.9,640.7 L2377.2,642.4 L2377.4,643.0 L2378.2,645.7 L2379.2,650.2 L2380.1,655.9 L2381.1,663.1 L2382.1,671.2 L2383.2,680.1 L2384.4,689.8 L2385.6,700.1 L2386.8,710.9 L2388.1,722.7 L2389.4,735.5 L2390.7,748.8 L2392.1,762.1 L2393.4,774.9 L2394.8,786.6 L2396.1,796.7 L2397.4,805.7 L2398.7,814.2 L2400.1,823.2 L2401.7,833.5 L2403.7,845.7 L2405.9,860.1 L2408.5,876.4 L2411.2,893.7 L2414.1,911.5 L2416.9,928.9 L2419.6,945.3 L2422.3,960.9 L2425.0,976.2 L2427.7,991.3 L2430.4,1006.1 L2433.0,1020.7 L2435.6,1035.1 L2438.0,1048.7 L2440.5,1061.9 L2442.9,1075.0 L2445.3,1088.2 L2447.6,1101.8 L2449.7,1116.1 L2451.7,1131.1 L2453.5,1146.5 L2455.2,1162.0 L2456.8,1177.5 L2458.3,1192.6 L2459.8,1207.1 L2461.3,1221.4 L2462.8,1235.7 L2464.2,1249.7 L2465.6,1263.2 L2466.8,1275.9 L2467.9,1287.5 L2468.8,1298.3 L2469.7,1308.5 L2470.4,1317.9 L2471.0,1326.1 L2471.5,1332.8 L2471.9,1337.9 L2479.9,1337.3 L2479.5,1332.2 L2479.0,1325.5 L2478.4,1317.3 L2477.7,1307.9 L2476.8,1297.6 L2475.9,1286.7 L2474.8,1275.1 L2473.5,1262.4 L2472.2,1248.9 L2470.8,1234.9 L2469.3,1220.5 L2467.8,1206.3 L2466.3,1191.8 L2464.8,1176.7 L2463.2,1161.2 L2461.5,1145.6 L2459.6,1130.1 L2457.6,1115.0 L2455.5,1100.6 L2453.2,1086.8 L2450.8,1073.5 L2448.4,1060.4 L2445.9,1047.3 L2443.4,1033.6 L2440.9,1019.3 L2438.2,1004.7 L2435.6,989.9 L2432.9,974.8 L2430.2,959.5 L2427.5,944.0 L2424.8,927.6 L2421.9,910.2 L2419.1,892.5 L2416.4,875.1 L2413.8,858.9 L2411.6,844.4 L2409.6,832.2 L2408.0,822.0 L2406.6,813.0 L2405.3,804.5 L2404.0,795.6 L2402.7,785.6 L2401.4,774.0 L2400.0,761.3 L2398.7,748.0 L2397.3,734.7 L2396.0,721.9 L2394.8,710.1 L2393.6,699.2 L2392.4,688.9 L2391.2,679.2 L2390.1,670.2 L2389.0,662.0 L2388.0,654.8 L2387.0,648.7 L2385.9,643.7 L2385.1,640.8 L2385.0,640.6 L2384.8,639.4 L2384.1,634.7 L2383.0,626.6 L2381.7,616.2 L2380.3,604.4 L2378.8,591.9 L2377.4,579.4 L2375.9,567.4 L2374.5,555.8 L2373.1,544.1 L2371.7,532.4 L2370.3,520.9 L2369.0,510.0 L2367.8,499.7 L2366.7,490.2 L2365.8,481.0 L2364.9,472.2 L2364.0,463.8 L2363.2,455.8 L2362.4,448.2 L2361.6,441.1 L2360.7,434.3 L2360.0,428.2 Z" fill="url(#rpd)" />
<path d="M2413.3,772.7 L2414.6,784.1 L2415.9,794.0 L2417.2,802.8 L2418.4,811.1 L2419.8,820.1 L2421.5,830.3 L2423.4,842.6 L2425.7,857.0 L2428.2,873.3 L2431.0,890.6 L2433.8,908.3 L2436.6,925.7 L2439.3,942.0 L2442.0,957.5 L2444.7,972.7 L2447.4,987.7 L2450.0,1002.6 L2452.7,1017.2 L2455.2,1031.5 L2457.7,1045.1 L2460.2,1058.2 L2462.6,1071.4 L2465.0,1084.8 L2467.3,1098.7 L2469.5,1113.3 L2471.6,1128.6 L2473.4,1144.2 L2475.1,1159.9 L2476.7,1175.5 L2478.2,1190.6 L2479.7,1205.0 L2481.2,1219.3 L2482.7,1233.6 L2484.1,1247.7 L2485.5,1261.3 L2486.7,1274.0 L2487.8,1285.6 L2488.8,1296.5 L2489.6,1306.9 L2490.4,1316.3 L2491.0,1324.6 L2491.5,1331.3 L2491.9,1336.3" fill="none" stroke="#0a7c86" stroke-width="7" />
<path d="M2335.5,425.8 L2336.2,431.2 L2336.9,437.3 L2337.7,443.9 L2338.5,450.9 L2339.3,458.3 L2340.1,466.2 L2341.0,474.6 L2341.9,483.5 L2342.9,492.8 L2343.9,502.4 L2345.1,512.8 L2346.4,523.8 L2347.8,535.3 L2349.3,547.0 L2350.7,558.7 L2352.1,570.3 L2353.5,582.2 L2355.0,594.7 L2356.5,607.3 L2357.9,619.1 L2359.2,629.6 L2360.3,638.0 L2361.1,643.4 L2361.6,646.0 L2362.0,647.4 L2362.7,649.6 L2363.4,653.1 L2364.3,658.3 L2365.2,665.2 L2366.3,673.2 L2367.4,682.1 L2368.5,691.7 L2369.7,702.0 L2370.9,712.7 L2372.2,724.3 L2373.5,737.1 L2374.8,750.4 L2376.1,763.8 L2377.5,776.7" fill="none" stroke="#5c7048" stroke-width="1" stroke-dasharray="7 3"/>
<path d="M2345.4,416.7 L2345.8,420.0 L2346.4,424.4 L2347.1,429.8 L2347.8,435.9 L2348.6,442.6 L2349.5,449.7 L2350.3,457.1 L2351.1,465.1 L2351.9,473.5 L2352.8,482.3 L2353.8,491.6 L2354.9,501.2 L2356.0,511.5 L2357.4,522.5 L2358.8,533.9 L2360.2,545.7 L2361.6,557.4 L2363.0,569.0 L2364.5,580.9 L2365.9,593.4 L2367.4,606.0 L2368.8,617.8 L2370.1,628.2 L2371.2,636.5 L2372.0,641.6 L2372.4,643.6 L2372.6,644.4 L2373.3,646.9 L2374.3,651.1 L2375.2,656.7 L2376.1,663.8 L2377.2,671.8 L2378.3,680.7 L2379.4,690.4 L2380.6,700.7 L2381.9,711.5 L2383.1,723.2 L2384.4,736.0 L2385.7,749.3 L2387.1,762.7 L2388.5,775.4 L2389.8,787.2 L2391.2,797.4 L2392.4,806.4 L2393.7,815.0 L2395.2,824.0 L2396.8,834.3 L2398.7,846.4 L2401.0,860.9 L2403.5,877.2 L2406.3,894.5 L2409.1,912.3 L2411.9,929.7 L2414.7,946.2 L2417.4,961.8 L2420.1,977.1 L2422.8,992.2 L2425.4,1007.0 L2428.1,1021.6 L2430.6,1035.9 L2433.1,1049.6 L2435.6,1062.8 L2438.0,1075.9 L2440.4,1089.0 L2442.6,1102.6 L2444.8,1116.8 L2446.7,1131.7 L2448.6,1147.0 L2450.2,1162.6 L2451.8,1178.0 L2453.4,1193.1 L2454.9,1207.6 L2456.4,1221.9 L2457.8,1236.2 L2459.3,1250.2 L2460.6,1263.7 L2461.8,1276.3 L2462.9,1287.9 L2463.9,1298.7 L2464.7,1308.9 L2465.4,1318.2 L2466.0,1326.4 L2466.5,1333.2 L2466.9,1338.2" fill="none" stroke="#5c7078" stroke-width="1.1" />
<path d="M2364.3,414.4 L2364.7,417.6 L2365.2,422.0 L2365.9,427.4 L2366.7,433.6 L2367.5,440.4 L2368.3,447.6 L2369.2,455.1 L2370.0,463.2 L2370.8,471.6 L2371.7,480.4 L2372.7,489.5 L2373.7,499.1 L2374.9,509.3 L2376.2,520.2 L2377.6,531.6 L2379.1,543.3 L2380.5,555.1 L2381.9,566.7 L2383.3,578.6 L2384.8,591.2 L2386.3,603.7 L2387.7,615.5 L2388.9,625.9 L2390.0,633.9 L2390.7,638.4 L2390.9,639.3 L2390.9,639.1 L2391.8,642.2 L2392.9,647.7 L2394.0,653.9 L2395.0,661.3 L2396.0,669.4 L2397.1,678.4 L2398.3,688.2 L2399.5,698.5 L2400.7,709.4 L2402.0,721.2 L2403.3,734.1 L2404.6,747.4 L2406.0,760.7 L2407.3,773.3 L2408.7,784.9 L2410.0,794.8 L2411.2,803.6 L2412.5,812.1 L2413.9,821.0 L2415.6,831.3 L2417.5,843.5 L2419.8,858.0 L2422.3,874.2 L2425.0,891.5 L2427.9,909.2 L2430.7,926.6 L2433.4,943.0 L2436.1,958.5 L2438.8,973.8 L2441.5,988.8 L2444.1,1003.6 L2446.8,1018.3 L2449.3,1032.6 L2451.8,1046.2 L2454.3,1059.3 L2456.7,1072.4 L2459.1,1085.8 L2461.4,1099.6 L2463.6,1114.1 L2465.6,1129.3 L2467.4,1144.9 L2469.1,1160.6 L2470.7,1176.1 L2472.3,1191.2 L2473.8,1205.6 L2475.3,1219.9 L2476.7,1234.3 L2478.2,1248.3 L2479.5,1261.8 L2480.7,1274.5 L2481.8,1286.2 L2482.8,1297.1 L2483.6,1307.4 L2484.4,1316.8 L2485.0,1325.0 L2485.5,1331.8 L2485.9,1336.8" fill="none" stroke="#5c7078" stroke-width="1.1" />
<path d="M2375.5,439.5 L2376.3,446.7 L2377.1,454.3 L2377.9,462.3 L2378.8,470.8 L2379.7,479.6 L2380.6,488.7 L2381.7,498.2 L2382.9,508.3 L2384.2,519.2 L2385.6,530.7 L2387.0,542.4 L2388.4,554.1 L2389.8,565.7 L2391.3,577.7 L2392.7,590.3 L2394.2,602.8 L2395.6,614.6 L2396.9,624.8 L2397.9,632.8 L2398.6,637.0 L2398.7,637.5 L2398.5,636.9 L2399.5,640.3 L2400.8,646.2 L2401.9,652.7 L2402.9,660.2 L2404.0,668.4 L2405.1,677.5 L2406.3,687.3 L2407.5,697.6 L2408.7,708.5 L2410.0,720.4 L2411.3,733.3 L2412.6,746.6 L2413.9,759.9 L2415.3,772.4 L2416.6,783.9 L2417.9,793.8 L2419.1,802.5 L2420.4,810.8 L2421.8,819.8 L2423.5,830.0 L2425.4,842.2 L2427.7,856.7 L2430.2,873.0 L2432.9,890.3 L2435.8,908.0 L2438.6,925.4 L2441.3,941.7" fill="none" stroke="#5c7078" stroke-width="1.2" />
<path d="M2380.4,438.9 L2381.3,446.1 L2382.1,453.8 L2382.9,461.8 L2383.8,470.3 L2384.6,479.0 L2385.6,488.1 L2386.6,497.6 L2387.8,507.7 L2389.1,518.6 L2390.5,530.1 L2392.0,541.8 L2393.4,553.5 L2394.8,565.1 L2396.2,577.1 L2397.7,589.7 L2399.2,602.2 L2400.6,614.0 L2401.8,624.2 L2402.9,632.1 L2403.5,636.2 L2403.5,636.3 L2403.3,635.5 L2404.4,639.1 L2405.7,645.3 L2406.8,652.0 L2407.9,659.5 L2408.9,667.8 L2410.0,676.9 L2411.2,686.7 L2412.4,697.1 L2413.7,708.0 L2414.9,719.9 L2416.3,732.8 L2417.6,746.1 L2418.9,759.3 L2420.3,771.9 L2421.6,783.3 L2422.9,793.1 L2424.1,801.7 L2425.4,810.1 L2426.8,819.0 L2428.4,829.2 L2430.3,841.5 L2432.6,856.0 L2435.1,872.2 L2437.9,889.5 L2440.7,907.2 L2443.5,924.5 L2446.2,940.9" fill="none" stroke="#5c7078" stroke-width="1.2" />
<path d="M2418.6,783.6 L2419.9,793.5 L2421.1,802.2 L2422.4,810.5 L2423.8,819.5 L2425.4,829.7 L2427.4,841.9 L2429.6,856.4 L2432.2,872.7 L2434.9,890.0 L2437.7,907.7 L2440.6,925.0 L2443.3,941.4 L2445.9,956.8 L2448.6,972.0 L2451.3,987.0 L2454.0,1001.9 L2456.6,1016.5 L2459.2,1030.8" fill="none" stroke="#30dc30" stroke-width="3.5" />
<path d="M2353.4,449.3 L2352.9,444.5 L2352.5,440.0 L2352.1,435.6 L2351.7,431.3 L2351.3,427.0 L2350.7,422.5 L2349.9,417.8 L2348.8,413.2 L2347.7,409.0 L2346.5,405.0 L2345.1,401.0 L2343.5,397.0 L2341.7,393.0 L2339.6,389.1 L2337.2,385.3 L2334.6,381.6 L2331.8,378.1 L2328.8,374.7 L2325.6,371.5 L2322.3,368.4 L2318.7,365.5 L2314.9,362.7 L2311.0,360.1 L2307.0,357.8 L2303.1,355.8 L2299.1,353.9 L2294.8,352.1 L2290.3,350.5 L2285.6,349.0 L2280.6,347.8 L2275.4,346.8 L2270.1,346.0 L2265.1,345.5 L2260.3,345.2 L2255.5,345.1 L2250.7,345.1 L2245.6,345.3 L2239.9,345.6 L2233.0,346.0 L2224.6,346.4 L2214.3,347.0" fill="none" stroke="#0a90a0" stroke-width="4.5" />
<path d="M2347.5,450.0 L2347.0,445.1 L2346.5,440.5 L2346.2,436.2 L2345.8,431.9 L2345.3,427.7 L2344.7,423.4 L2344.0,419.0 L2343.0,414.7 L2341.9,410.6 L2340.8,406.8 L2339.5,403.1 L2338.0,399.3 L2336.3,395.7 L2334.4,392.1 L2332.2,388.6 L2329.8,385.2 L2327.2,381.9 L2324.4,378.8 L2321.5,375.8 L2318.3,372.9 L2315.0,370.2 L2311.5,367.7 L2307.8,365.2 L2304.1,363.1 L2300.4,361.2 L2296.6,359.4 L2292.7,357.7 L2288.4,356.2 L2284.0,354.8 L2279.3,353.6 L2274.4,352.7 L2269.4,352.0 L2264.6,351.5 L2260.0,351.2 L2255.5,351.1 L2250.9,351.1 L2245.9,351.3 L2240.2,351.6 L2233.3,352.0 L2224.9,352.4 L2214.6,353.0 L2202.6,353.6 L2189.4,354.4" fill="none" stroke="#5c7058" stroke-width="1.1" />
<path d="M2359.4,448.7 L2358.9,443.9 L2358.5,439.4 L2358.1,435.1 L2357.7,430.7 L2357.2,426.3 L2356.6,421.6 L2355.7,416.7 L2354.7,411.8 L2353.5,407.4 L2352.2,403.1 L2350.8,398.9 L2349.0,394.6 L2347.0,390.3 L2344.7,386.1 L2342.2,381.9 L2339.4,378.0 L2336.4,374.2 L2333.2,370.6 L2329.8,367.2 L2326.2,363.9 L2322.4,360.7 L2318.3,357.8 L2314.1,355.0 L2309.9,352.6 L2305.7,350.4 L2301.5,348.4 L2297.0,346.5 L2292.2,344.8 L2287.2,343.3 L2281.9,341.9 L2276.4,340.9 L2270.9,340.1 L2265.6,339.5 L2260.6,339.2 L2255.6,339.1 L2250.6,339.1 L2245.4,339.3 L2239.6,339.6 L2232.7,340.0 L2224.3,340.4 L2213.9,341.0 L2201.9,341.7 L2188.6,342.4" fill="none" stroke="#5c7058" stroke-width="1.1" />
<path d="M2368.4,447.7 L2367.9,443.0 L2367.5,438.6 L2367.1,434.3 L2366.7,429.8 L2366.1,425.2 L2365.5,420.2 L2364.6,415.0 L2363.4,409.7 L2362.2,404.9 L2360.8,400.4 L2359.2,395.7 L2357.3,391.0 L2355.1,386.3 L2352.5,381.5 L2349.7,377.0 L2346.6,372.6 L2343.3,368.4 L2339.8,364.5 L2336.0,360.7 L2332.1,357.1 L2327.9,353.6 L2323.5,350.4 L2318.8,347.4 L2314.2,344.7 L2309.7,342.4 L2305.2,340.2 L2300.3,338.2 L2295.1,336.3 L2289.6,334.6 L2283.9,333.1 L2277.9,332.0 L2272.0,331.1 L2266.4,330.5 L2261.0,330.2 L2255.6,330.1 L2250.3,330.1 L2245.0,330.4 L2239.1,330.7 L2232.2,331.0 L2223.8,331.5 L2213.5,332.0 L2201.4,332.7 L2188.1,333.5" fill="none" stroke="#5c7058" stroke-width="1.1" />
<path d="M2373.4,438.1 L2373.0,433.7 L2372.6,429.2 L2372.1,424.5 L2371.4,419.3 L2370.5,413.8 L2369.2,408.3 L2367.9,403.3 L2366.5,398.5 L2364.8,393.7 L2362.8,388.6 L2360.4,383.6 L2357.7,378.5 L2354.7,373.6 L2351.4,369.0 L2347.9,364.6 L2344.2,360.4 L2340.2,356.3 L2336.0,352.5 L2331.6,348.9 L2326.9,345.5 L2322.0,342.3 L2317.1,339.4 L2312.4,337.0 L2307.6,334.7 L2302.5,332.6 L2297.0,330.6 L2291.2,328.8 L2285.2,327.3 L2278.9,326.1 L2272.7,325.2 L2266.9,324.6 L2261.2,324.2 L2255.6,324.1 L2250.1,324.2 L2244.7,324.4 L2238.8,324.7 L2231.9,325.0 L2223.5,325.5" fill="none" stroke="#18b060" stroke-width="3" />
<path d="M2322,336 L2380,334 M2322,336 Q2350,352 2362,394 M2354,370 L2392,368 M2350,378 L2393,376" fill="none" stroke="#5c7048" stroke-width="1.3"/>
<path d="M2356,380 L2394,378 L2400,405 L2372,400 Z" fill="#1eb414"/>
<circle cx="2367" cy="348" r="3.2" fill="#d8d8d8"/>
<path d="M2362.2,720.9 L2361.6,713.8 L2360.9,706.7 L2360.1,699.4 L2359.3,691.9 L2358.3,684.5 L2357.4,677.4 L2356.5,670.8 L2355.7,664.8 L2355.0,659.6 L2354.4,655.7 L2353.9,653.1 L2353.4,651.3 L2353.0,650.0 L2352.6,648.7 L2352.2,646.8 L2351.6,643.9 L2351.0,639.3 L2350.2,633.2 L2349.2,625.7 L2348.2,617.4 L2347.1,608.4 L2346.0,599.0 L2344.9,589.5 L2343.8,580.2 L2342.8,571.4 L2341.7,562.8 L2340.7,554.0 L2339.6,545.2 L2338.5,536.4 L2337.5,527.8 L2336.4,519.3 L2335.5,511.2 L2334.6,503.5 L2333.8,496.2 L2333.0,489.0 L2332.3,482.2 L2331.6,475.5 L2331.0,469.2 L2330.4,463.1 L2329.8,457.4 L2329.2,451.9 L2328.7,446.9 L2328.2,442.2 L2327.8,437.9 L2327.4,433.8 L2327.0,429.9 L2326.5,426.2 L2325.9,422.5 L2325.1,419.0 L2324.2,415.6 L2323.3,412.5 L2322.3,409.5 L2321.1,406.6 L2319.9,403.9 L2318.4,401.3 L2316.9,398.8 L2315.1,396.2 L2313.1,393.8 L2311.0,391.4 L2308.7,389.1 L2306.3,386.9 L2303.7,384.8 L2301.0,382.8 L2298.2,380.9 L2295.3,379.2 L2292.2,377.7 L2289.2,376.2 L2285.9,374.9 L2282.6,373.6 L2279.1,372.5 L2275.3,371.6 L2271.3,370.8 L2267.1,370.2 L2263.0,369.8 L2259.3,369.6 L2255.5,369.5 L2251.4,369.5 L2246.7,369.7 L2241.1,370.0 L2234.3,370.4 L2225.9,370.8 L2215.6,371.3 L2203.7,372.0 L2190.5,372.8 L2176.3,373.6 L2161.6,374.6 L2146.6,375.6 L2131.7,376.6 L2117.2,377.6 L2102.7,378.7 L2087.5,379.8 L2072.0,381.0 L2056.4,382.3 L2041.1,383.5 L2026.4,384.8 L2012.5,386.0 L1999.8,387.1 L1988.4,388.2 L1978.2,389.2 L1968.8,390.1 L1960.0,391.1 L1951.4,392.0 L1942.9,393.0 L1934.1,394.1 L1924.7,395.2 L1914.6,396.4 L1904.1,397.7 L1893.4,399.1 L1882.6,400.5 L1872.0,401.9 L1861.8,403.3 L1852.1,404.7 L1843.1,406.1 L1834.9,407.5 L1827.2,408.8 L1820.0,410.1 L1813.2,411.4 L1806.7,412.8 L1800.4,414.2 L1794.4,415.6 L1788.4,417.1 L1782.5,418.6 L1776.8,420.2 L1771.4,421.8 L1766.2,423.5 L1761.2,425.2 L1756.4,426.9 L1751.8,428.8 L1747.3,430.6 L1743.2,432.5 L1739.4,434.5 L1735.8,436.5 L1732.5,438.5 L1729.2,440.6 L1726.0,442.8 L1722.8,445.0 L1719.5,447.4 L1716.2,449.8" fill="none" stroke="#c2c4c6" stroke-width="5.2" />
<path d="M2360.0,721.1 L2359.4,714.0 L2358.7,706.9 L2357.9,699.6 L2357.1,692.2 L2356.2,684.8 L2355.2,677.7 L2354.3,671.1 L2353.5,665.1 L2352.8,659.9 L2352.2,656.1 L2351.7,653.6 L2351.3,651.9 L2350.9,650.6 L2350.5,649.2 L2350.0,647.3 L2349.5,644.2 L2348.8,639.6 L2348.0,633.4 L2347.0,626.0 L2346.0,617.6 L2345.0,608.6 L2343.9,599.2 L2342.7,589.8 L2341.7,580.5 L2340.6,571.7 L2339.6,563.0 L2338.5,554.3 L2337.4,545.5 L2336.3,536.7 L2335.3,528.0 L2334.3,519.6 L2333.3,511.5 L2332.4,503.8 L2331.6,496.4 L2330.8,489.3 L2330.1,482.4 L2329.4,475.8 L2328.8,469.4 L2328.2,463.3 L2327.6,457.6 L2327.0,452.2 L2326.5,447.1 L2326.0,442.4 L2325.6,438.1 L2325.3,434.0 L2324.8,430.2 L2324.4,426.5 L2323.8,423.0 L2323.0,419.5 L2322.1,416.2 L2321.2,413.1 L2320.2,410.3 L2319.1,407.5 L2317.9,404.9 L2316.5,402.4 L2315.0,400.0 L2313.3,397.6 L2311.4,395.2 L2309.4,392.9 L2307.2,390.7 L2304.9,388.5 L2302.4,386.5 L2299.8,384.6 L2297.0,382.8 L2294.2,381.1 L2291.3,379.6 L2288.3,378.2 L2285.1,376.9 L2281.9,375.7 L2278.5,374.7 L2274.8,373.8 L2271.0,373.0 L2266.8,372.4 L2262.8,372.0 L2259.2,371.8 L2255.5,371.7 L2251.5,371.7 L2246.8,371.9 L2241.3,372.2 L2234.4,372.6 L2226.0,373.0 L2215.7,373.5 L2203.8,374.2 L2190.6,375.0 L2176.5,375.8 L2161.7,376.8 L2146.7,377.8 L2131.8,378.8 L2117.4,379.8 L2102.8,380.9 L2087.6,382.0 L2072.1,383.2 L2056.6,384.5 L2041.3,385.7 L2026.5,387.0 L2012.7,388.2 L2000.0,389.3 L1988.6,390.4 L1978.4,391.4 L1969.0,392.3 L1960.2,393.3 L1951.7,394.2 L1943.2,395.2 L1934.3,396.3 L1925.0,397.4 L1914.9,398.6 L1904.4,399.9 L1893.7,401.3 L1882.9,402.7 L1872.3,404.1 L1862.1,405.5 L1852.4,406.9 L1843.4,408.3 L1835.2,409.7 L1827.6,411.0 L1820.4,412.3 L1813.6,413.6 L1807.1,414.9 L1800.9,416.3 L1794.9,417.7 L1788.9,419.2 L1783.1,420.7 L1777.5,422.3 L1772.1,423.9 L1766.9,425.6 L1761.9,427.3 L1757.2,429.0 L1752.6,430.8 L1748.2,432.6 L1744.2,434.5 L1740.4,436.4 L1736.9,438.4 L1733.6,440.4 L1730.4,442.5 L1727.3,444.6 L1724.1,446.8 L1720.8,449.2 L1717.5,451.5" fill="none" stroke="#14148c" stroke-width="1" stroke-dasharray="5 7 2 4 9 6"/>
<path d="M1340.0,715.0 L1400.0,690.0 L1470.0,690.0 L1480.0,760.0 L1500.0,850.0 L1530.0,930.0 L1560.0,985.0 L1540.0,990.0 L1506.0,921.0 L1474.0,896.0 L1458.0,877.0 L1452.0,845.0 L1414.0,823.0 L1406.0,790.0 L1402.0,756.0 L1385.0,760.0 L1370.0,790.0 L1362.0,760.0 L1350.0,740.0 Z" fill="#2ff024" />
<path d="M1362.0,775.0 L1372.0,800.0 L1385.0,770.0 L1402.0,762.0 L1406.0,790.0 L1414.0,823.0 L1452.0,845.0 L1458.0,877.0 L1474.0,896.0 L1506.0,921.0 L1535.0,975.0 L1572.0,1030.0 L1620.0,1095.0 L1667.0,1172.0 L1600.0,1150.0 L1520.0,1110.0 L1460.0,1070.0 L1425.0,1020.0 L1395.0,950.0 L1372.0,870.0 Z" fill="#0a8e96" />
<path d="M1470.0,660.0 C1475.7,646.7 1503.7,650.0 1512.0,660.0 C1520.3,670.0 1514.5,705.8 1520.0,720.0 C1525.5,734.2 1535.0,736.7 1545.0,745.0 C1555.0,753.3 1576.5,760.8 1580.0,770.0 C1583.5,779.2 1567.2,786.7 1566.0,800.0 C1564.8,813.3 1569.0,832.5 1573.0,850.0 C1577.0,867.5 1587.8,894.0 1590.0,905.0 C1592.2,916.0 1589.0,912.0 1586.0,916.0 C1583.0,920.0 1576.7,928.2 1572.0,929.0 C1567.3,929.8 1562.2,920.5 1558.0,921.0 C1553.8,921.5 1551.7,933.8 1547.0,932.0 C1542.3,930.2 1536.5,922.0 1530.0,910.0 C1523.5,898.0 1514.7,878.3 1508.0,860.0 C1501.3,841.7 1495.0,820.0 1490.0,800.0 C1485.0,780.0 1481.3,763.3 1478.0,740.0 C1474.7,716.7 1464.3,673.3 1470.0,660.0 Z" fill="#2ff024" />
<path d="M1593.0,877.0 C1594.0,870.5 1614.7,872.8 1626.0,876.0 C1637.3,879.2 1649.7,888.5 1661.0,896.0 C1672.3,903.5 1690.8,915.3 1694.0,921.0 C1697.2,926.7 1690.0,928.2 1680.0,930.0 C1670.0,931.8 1644.0,934.5 1634.0,932.0 C1624.0,929.5 1626.8,924.2 1620.0,915.0 C1613.2,905.8 1592.0,883.5 1593.0,877.0 Z" fill="#2ff024" />
<path d="M1545.0,768.0 C1553.3,761.7 1592.5,768.3 1610.0,772.0 C1627.5,775.7 1635.0,780.3 1650.0,790.0 C1665.0,799.7 1688.3,820.0 1700.0,830.0 C1711.7,840.0 1726.7,845.0 1720.0,850.0 C1713.3,855.0 1680.0,860.8 1660.0,860.0 C1640.0,859.2 1616.7,853.3 1600.0,845.0 C1583.3,836.7 1569.2,822.8 1560.0,810.0 C1550.8,797.2 1536.7,774.3 1545.0,768.0 Z" fill="#0a9ba3" />
<path d="M1600.0,750.0 L2362.0,772.0 L2380.0,800.0 L2372.0,850.0 L2330.0,862.0 L2300.0,880.0 L2250.0,870.0 L2200.0,890.0 L2120.0,900.0 L2100.0,870.0 L2050.0,868.0 L2010.0,872.0 L1980.0,868.0 L1900.0,870.0 L1860.0,872.0 L1800.0,878.0 L1760.0,870.0 L1700.0,860.0 L1660.0,848.0 L1700.0,835.0 L1660.0,800.0 L1620.0,780.0 Z" fill="#2ff024" />
<path d="M1545.0,742.0 L1600.0,751.0 L1790.0,764.6 L2000.0,770.0 L2356.0,773.6 L2362.0,790.0 L2000.0,790.0 L1790.0,786.0 L1620.0,776.0 L1560.0,765.0 Z" fill="url(#belt)" />
<path d="M1655.0,842.0 L1700.0,838.0 L1800.0,842.0 L1860.0,846.0 L1880.0,858.0 L1800.0,854.0 L1720.0,852.0 L1670.0,862.0 Z" fill="#0a9aa0" />
<path d="M2110.0,880.0 C2123.3,872.0 2175.0,872.0 2200.0,872.0 C2225.0,872.0 2245.0,875.3 2260.0,880.0 C2275.0,884.7 2283.3,886.7 2290.0,900.0 C2296.7,913.3 2300.0,941.7 2300.0,960.0 C2300.0,978.3 2297.5,998.3 2290.0,1010.0 C2282.5,1021.7 2265.0,1030.0 2255.0,1030.0 C2245.0,1030.0 2236.7,1021.7 2230.0,1010.0 C2223.3,998.3 2225.0,973.3 2215.0,960.0 C2205.0,946.7 2185.8,936.7 2170.0,930.0 C2154.2,923.3 2130.0,928.3 2120.0,920.0 C2110.0,911.7 2096.7,888.0 2110.0,880.0 Z" fill="#2ff024" />
<path d="M2290.0,900.0 C2294.2,889.2 2317.5,885.0 2325.0,895.0 C2332.5,905.0 2335.0,935.8 2335.0,960.0 C2335.0,984.2 2330.8,1023.3 2325.0,1040.0 C2319.2,1056.7 2305.8,1065.0 2300.0,1060.0 C2294.2,1055.0 2290.0,1026.7 2290.0,1010.0 C2290.0,993.3 2300.0,978.3 2300.0,960.0 C2300.0,941.7 2285.8,910.8 2290.0,900.0 Z" fill="#2ff024" />
<path d="M2236.0,905.0 C2238.0,893.0 2253.0,888.0 2262.0,888.0 C2271.0,888.0 2283.7,894.7 2290.0,905.0 C2296.3,915.3 2299.2,936.7 2300.0,950.0 C2300.8,963.3 2293.3,973.3 2295.0,985.0 C2296.7,996.7 2309.2,1010.5 2310.0,1020.0 C2310.8,1029.5 2308.0,1038.7 2300.0,1042.0 C2292.0,1045.3 2272.7,1045.3 2262.0,1040.0 C2251.3,1034.7 2238.0,1023.3 2236.0,1010.0 C2234.0,996.7 2250.0,977.5 2250.0,960.0 C2250.0,942.5 2234.0,917.0 2236.0,905.0 Z" fill="#0a9ba3" />
<path d="M2191.0,925.0 C2196.0,910.8 2214.5,904.2 2222.0,905.0 C2229.5,905.8 2234.3,918.3 2236.0,930.0 C2237.7,941.7 2231.3,961.7 2232.0,975.0 C2232.7,988.3 2240.7,1000.8 2240.0,1010.0 C2239.3,1019.2 2232.2,1024.2 2228.0,1030.0 C2223.8,1035.8 2219.7,1045.0 2215.0,1045.0 C2210.3,1045.0 2204.5,1031.7 2200.0,1030.0 C2195.5,1028.3 2189.3,1041.7 2188.0,1035.0 C2186.7,1028.3 2191.5,1008.3 2192.0,990.0 C2192.5,971.7 2186.0,939.2 2191.0,925.0 Z" fill="#2ff024" />
<path d="M2290.0,880.0 C2294.0,869.7 2319.3,864.7 2326.0,878.0 C2332.7,891.3 2329.7,934.7 2330.0,960.0 C2330.3,985.3 2331.0,1020.3 2328.0,1030.0 C2325.0,1039.7 2317.3,1024.7 2312.0,1018.0 C2306.7,1011.3 2297.7,1003.0 2296.0,990.0 C2294.3,977.0 2303.0,958.3 2302.0,940.0 C2301.0,921.7 2286.0,890.3 2290.0,880.0 Z" fill="#2ff024" />
<path d="M2470.0,800.0 C2475.0,793.3 2493.0,813.3 2500.0,830.0 C2507.0,846.7 2508.7,871.7 2512.0,900.0 C2515.3,928.3 2518.3,970.0 2520.0,1000.0 C2521.7,1030.0 2524.5,1070.0 2522.0,1080.0 C2519.5,1090.0 2510.3,1073.3 2505.0,1060.0 C2499.7,1046.7 2494.2,1021.7 2490.0,1000.0 C2485.8,978.3 2483.3,951.7 2480.0,930.0 C2476.7,908.3 2471.7,891.7 2470.0,870.0 C2468.3,848.3 2465.0,806.7 2470.0,800.0 Z" fill="#2ff024" />
<path d="M2440.0,1180.0 C2442.5,1171.7 2460.0,1190.0 2470.0,1200.0 C2480.0,1210.0 2493.3,1223.3 2500.0,1240.0 C2506.7,1256.7 2513.3,1291.7 2510.0,1300.0 C2506.7,1308.3 2489.2,1298.3 2480.0,1290.0 C2470.8,1281.7 2461.7,1268.3 2455.0,1250.0 C2448.3,1231.7 2437.5,1188.3 2440.0,1180.0 Z" fill="#2ff024" />
<path d="M2462.0,812.0 C2464.7,816.7 2473.3,825.3 2478.0,840.0 C2482.7,854.7 2486.3,880.0 2490.0,900.0 C2493.7,920.0 2497.0,938.3 2500.0,960.0 C2503.0,981.7 2505.7,1005.0 2508.0,1030.0 C2510.3,1055.0 2512.2,1080.0 2514.0,1110.0 C2515.8,1140.0 2517.7,1175.0 2519.0,1210.0 C2520.3,1245.0 2521.8,1288.3 2522.0,1320.0 C2522.2,1351.7 2521.7,1376.7 2520.0,1400.0 C2518.3,1423.3 2513.3,1436.7 2512.0,1460.0 C2510.7,1483.3 2512.0,1520.0 2512.0,1540.0 C2512.0,1560.0 2512.0,1573.3 2512.0,1580.0" fill="none" stroke="#34ea28" stroke-width="22" stroke-linecap="round" stroke-linejoin="round" />
<path d="M2486.0,1090.0 C2488.8,1076.7 2501.0,1085.0 2505.0,1100.0 C2509.0,1115.0 2510.8,1158.3 2510.0,1180.0 C2509.2,1201.7 2503.7,1230.0 2500.0,1230.0 C2496.3,1230.0 2490.3,1203.3 2488.0,1180.0 C2485.7,1156.7 2483.2,1103.3 2486.0,1090.0 Z" fill="#0a98b4" />
<path d="M2466.0,800.0 C2469.3,803.7 2481.0,812.0 2486.0,822.0 C2491.0,832.0 2492.3,844.5 2496.0,860.0 C2499.7,875.5 2504.5,897.5 2508.0,915.0 C2511.5,932.5 2514.5,946.7 2517.0,965.0 C2519.5,983.3 2521.0,1001.7 2523.0,1025.0 C2525.0,1048.3 2527.2,1074.2 2529.0,1105.0 C2530.8,1135.8 2532.7,1174.2 2534.0,1210.0 C2535.3,1245.8 2536.3,1290.8 2537.0,1320.0 C2537.7,1349.2 2539.5,1365.0 2538.0,1385.0 C2536.5,1405.0 2529.7,1413.3 2528.0,1440.0 C2526.3,1466.7 2527.7,1520.3 2528.0,1545.0 C2528.3,1569.7 2529.7,1580.8 2530.0,1588.0" fill="none" stroke="#9af212" stroke-width="9" stroke-linecap="round" stroke-linejoin="round" />
<path d="M2468.0,803.0 C2471.3,806.8 2483.0,816.2 2488.0,826.0 C2493.0,835.8 2494.3,846.8 2498.0,862.0 C2501.7,877.2 2506.5,899.5 2510.0,917.0 C2513.5,934.5 2516.5,948.7 2519.0,967.0 C2521.5,985.3 2523.0,1003.7 2525.0,1027.0 C2527.0,1050.3 2529.2,1076.5 2531.0,1107.0 C2532.8,1137.5 2534.3,1174.5 2535.5,1210.0 C2536.7,1245.5 2537.6,1301.7 2538.0,1320.0" fill="none" stroke="#f2f000" stroke-width="3" stroke-linecap="round" stroke-linejoin="round" />
<path d="M1880.0,1420.0 L1900.0,1445.0 L1960.0,1470.0 L2040.0,1492.0 L2140.0,1500.0 L2250.0,1497.0 L2350.0,1488.0 L2430.0,1462.0 L2466.0,1424.0 L2486.0,1384.0 L2496.0,1340.0 L2545.0,1330.0 L2545.0,1595.0 L1860.0,1610.0 L1850.0,1500.0 L1835.0,1450.0 Z" fill="#2ff024" />
<path d="M1995.0,1490.0 C2000.0,1489.2 2034.2,1495.0 2050.0,1500.0 C2065.8,1505.0 2082.5,1512.5 2090.0,1520.0 C2097.5,1527.5 2100.0,1539.7 2095.0,1545.0 C2090.0,1550.3 2070.0,1554.5 2060.0,1552.0 C2050.0,1549.5 2041.7,1537.8 2035.0,1530.0 C2028.3,1522.2 2026.7,1511.7 2020.0,1505.0 C2013.3,1498.3 1990.0,1490.8 1995.0,1490.0 Z" fill="#0a9ba3" />
<path d="M1912.0,1572.0 C1936.2,1569.0 2028.7,1569.3 2060.0,1570.0 C2091.3,1570.7 2110.0,1574.0 2100.0,1576.0 C2090.0,1578.0 2030.8,1580.0 2000.0,1582.0 C1969.2,1584.0 1929.7,1589.7 1915.0,1588.0 C1900.3,1586.3 1887.8,1575.0 1912.0,1572.0 Z" fill="#12a890" />
<path d="M2476.0,1300.0 C2477.3,1316.7 2481.0,1366.7 2484.0,1400.0 C2487.0,1433.3 2491.5,1474.0 2494.0,1500.0 C2496.5,1526.0 2500.0,1543.7 2499.0,1556.0 C2498.0,1568.3 2497.8,1569.8 2488.0,1574.0 C2478.2,1578.2 2471.3,1579.0 2440.0,1581.0 C2408.7,1583.0 2356.7,1584.5 2300.0,1586.0 C2243.3,1587.5 2162.5,1588.3 2100.0,1590.0 C2037.5,1591.7 1958.3,1597.7 1925.0,1596.0 C1891.7,1594.3 1906.2,1589.3 1900.0,1580.0 C1893.8,1570.7 1890.0,1546.7 1888.0,1540.0" fill="none" stroke="#0a8e96" stroke-width="5" stroke-linecap="round" stroke-linejoin="round" />
<path d="M2470.0,1300.0 C2471.3,1316.7 2475.0,1366.7 2478.0,1400.0 C2481.0,1433.3 2485.7,1474.7 2488.0,1500.0 C2490.3,1525.3 2491.3,1543.3 2492.0,1552.0" fill="none" stroke="#06666c" stroke-width="4" stroke-linecap="round" stroke-linejoin="round" />
<rect x="2476" y="1566" width="12" height="12" fill="#30d830" stroke="#5f7372" stroke-width="1"/><circle cx="2486" cy="1574" r="3.2" fill="#1040e0"/>
<rect x="1913" y="1584" width="12" height="12" fill="#30d830" stroke="#5f7372" stroke-width="1"/><circle cx="1919" cy="1591" r="3.2" fill="#1040e0"/>
<path d="M1868.0,1597.0 L1900.0,1598.0 L2100.0,1594.0 L2260.0,1589.0 L2330.0,1590.0 L2200.0,1596.0 L1930.0,1605.0 L1868.0,1605.0 Z" fill="#ffe400" />
<path d="M1864.0,1590.0 L1880.0,1597.0 L1905.0,1604.0 L1867.0,1605.0 Z" fill="#ff8a00" />
<path d="M1344.0,724.5 C1342.3,727.4 1336.3,734.6 1334.0,742.0 C1331.7,749.4 1330.2,759.2 1330.0,769.0 C1329.8,778.8 1331.0,790.2 1332.5,801.0 C1334.0,811.8 1336.1,821.3 1339.0,834.0 C1341.9,846.7 1345.8,862.5 1350.0,877.0 C1354.2,891.5 1359.0,906.5 1364.0,921.0 C1369.0,935.5 1374.5,949.5 1380.0,964.0 C1385.5,978.5 1392.0,995.3 1397.0,1008.0 C1402.0,1020.7 1406.2,1030.7 1410.0,1040.0 C1413.8,1049.3 1414.2,1054.7 1420.0,1064.0 C1425.8,1073.3 1434.8,1085.7 1445.0,1096.0 C1455.2,1106.3 1468.3,1117.0 1481.0,1126.0 C1493.7,1135.0 1505.2,1141.3 1521.0,1150.0 C1536.8,1158.7 1557.8,1168.8 1576.0,1178.0 C1594.2,1187.2 1614.2,1196.0 1630.0,1205.0 C1645.8,1214.0 1657.3,1222.0 1671.0,1232.0 C1684.7,1242.0 1699.8,1254.2 1712.0,1265.0 C1724.2,1275.8 1734.2,1285.8 1744.0,1297.0 C1753.8,1308.2 1762.8,1320.2 1771.0,1332.0 C1779.2,1343.8 1786.7,1357.2 1793.0,1368.0 C1799.3,1378.8 1803.8,1386.5 1809.0,1397.0 C1814.2,1407.5 1818.3,1420.2 1824.0,1431.0 C1829.7,1441.8 1838.3,1450.5 1843.0,1462.0 C1847.7,1473.5 1849.5,1488.0 1852.0,1500.0 C1854.5,1512.0 1855.8,1522.2 1858.0,1534.0 C1860.2,1545.8 1863.0,1560.0 1865.0,1571.0 C1867.0,1582.0 1869.2,1595.2 1870.0,1600.0" fill="none" stroke="#50e81c" stroke-width="38" stroke-linecap="round" stroke-linejoin="round" />
<path d="M1342.0,742.0 C1341.3,746.5 1338.2,759.2 1338.0,769.0 C1337.8,778.8 1339.0,790.2 1340.5,801.0 C1342.0,811.8 1344.1,821.3 1347.0,834.0 C1349.9,846.7 1353.8,862.5 1358.0,877.0 C1362.2,891.5 1367.0,906.5 1372.0,921.0 C1377.0,935.5 1382.5,949.5 1388.0,964.0 C1393.5,978.5 1400.0,995.3 1405.0,1008.0 C1410.0,1020.7 1414.2,1030.7 1418.0,1040.0 C1421.8,1049.3 1422.2,1054.7 1428.0,1064.0 C1433.8,1073.3 1442.8,1085.7 1453.0,1096.0 C1463.2,1106.3 1476.3,1117.0 1489.0,1126.0 C1501.7,1135.0 1513.2,1141.3 1529.0,1150.0 C1544.8,1158.7 1565.8,1168.8 1584.0,1178.0 C1602.2,1187.2 1622.2,1196.0 1638.0,1205.0 C1653.8,1214.0 1665.3,1222.0 1679.0,1232.0 C1692.7,1242.0 1707.8,1254.2 1720.0,1265.0 C1732.2,1275.8 1742.2,1285.8 1752.0,1297.0 C1761.8,1308.2 1770.8,1320.2 1779.0,1332.0 C1787.2,1343.8 1794.7,1357.2 1801.0,1368.0 C1807.3,1378.8 1811.8,1386.5 1817.0,1397.0 C1822.2,1407.5 1826.3,1420.2 1832.0,1431.0 C1837.7,1441.8 1846.3,1450.5 1851.0,1462.0 C1855.7,1473.5 1857.5,1488.0 1860.0,1500.0 C1862.5,1512.0 1863.8,1522.2 1866.0,1534.0 C1868.2,1545.8 1871.0,1560.0 1873.0,1571.0 C1875.0,1582.0 1877.2,1595.2 1878.0,1600.0" fill="none" stroke="#9af212" stroke-width="9" stroke-linecap="round" stroke-linejoin="round" />
<path d="M1388.0,964.0 C1390.8,971.3 1400.0,995.3 1405.0,1008.0 C1410.0,1020.7 1414.2,1030.7 1418.0,1040.0 C1421.8,1049.3 1422.2,1054.7 1428.0,1064.0 C1433.8,1073.3 1442.8,1085.7 1453.0,1096.0 C1463.2,1106.3 1476.3,1117.0 1489.0,1126.0 C1501.7,1135.0 1513.2,1141.3 1529.0,1150.0 C1544.8,1158.7 1565.8,1168.8 1584.0,1178.0 C1602.2,1187.2 1622.2,1196.0 1638.0,1205.0 C1653.8,1214.0 1665.3,1222.0 1679.0,1232.0 C1692.7,1242.0 1707.8,1254.2 1720.0,1265.0 C1732.2,1275.8 1742.2,1285.8 1752.0,1297.0 C1761.8,1308.2 1770.8,1320.2 1779.0,1332.0 C1787.2,1343.8 1794.7,1357.2 1801.0,1368.0 C1807.3,1378.8 1811.8,1386.5 1817.0,1397.0 C1822.2,1407.5 1826.3,1420.2 1832.0,1431.0 C1837.7,1441.8 1846.3,1450.5 1851.0,1462.0 C1855.7,1473.5 1857.5,1488.0 1860.0,1500.0 C1862.5,1512.0 1863.8,1522.2 1866.0,1534.0 C1868.2,1545.8 1871.0,1560.0 1873.0,1571.0 C1875.0,1582.0 1877.2,1595.2 1878.0,1600.0" fill="none" stroke="#e4f400" stroke-width="3.4" stroke-linecap="round" stroke-linejoin="round" />
<path d="M1354.0,771.0 C1354.4,776.3 1355.0,792.2 1356.5,803.0 C1358.0,813.8 1360.1,823.3 1363.0,836.0 C1365.9,848.7 1369.8,864.5 1374.0,879.0 C1378.2,893.5 1383.0,908.5 1388.0,923.0 C1393.0,937.5 1398.5,951.5 1404.0,966.0 C1409.5,980.5 1416.0,997.3 1421.0,1010.0 C1426.0,1022.7 1430.2,1032.7 1434.0,1042.0 C1437.8,1051.3 1438.2,1056.7 1444.0,1066.0 C1449.8,1075.3 1458.8,1087.7 1469.0,1098.0 C1479.2,1108.3 1492.3,1119.0 1505.0,1128.0 C1517.7,1137.0 1529.2,1143.3 1545.0,1152.0 C1560.8,1160.7 1581.8,1170.8 1600.0,1180.0 C1618.2,1189.2 1638.2,1198.0 1654.0,1207.0 C1669.8,1216.0 1681.3,1224.0 1695.0,1234.0 C1708.7,1244.0 1723.8,1256.2 1736.0,1267.0 C1748.2,1277.8 1758.2,1287.8 1768.0,1299.0 C1777.8,1310.2 1786.8,1322.2 1795.0,1334.0 C1803.2,1345.8 1810.7,1359.2 1817.0,1370.0 C1823.3,1380.8 1827.8,1388.5 1833.0,1399.0 C1838.2,1409.5 1842.3,1422.2 1848.0,1433.0 C1853.7,1443.8 1862.3,1452.5 1867.0,1464.0 C1871.7,1475.5 1873.5,1490.0 1876.0,1502.0 C1878.5,1514.0 1879.8,1524.2 1882.0,1536.0 C1884.2,1547.8 1887.0,1562.0 1889.0,1573.0 C1891.0,1584.0 1893.2,1597.2 1894.0,1602.0" fill="none" stroke="#0a98a0" stroke-width="7" stroke-linecap="round" stroke-linejoin="round" />
<path d="M1580.0,994.0 C1584.5,1000.7 1599.0,1022.3 1607.0,1034.0 C1615.0,1045.7 1620.3,1053.8 1628.0,1064.0 C1635.7,1074.2 1645.0,1085.3 1653.0,1095.0 C1661.0,1104.7 1667.8,1112.8 1676.0,1122.0 C1684.2,1131.2 1693.3,1141.3 1702.0,1150.0 C1710.7,1158.7 1719.0,1165.8 1728.0,1174.0 C1737.0,1182.2 1746.8,1190.0 1756.0,1199.0 C1765.2,1208.0 1773.8,1218.5 1783.0,1228.0 C1792.2,1237.5 1803.2,1247.7 1811.0,1256.0 C1818.8,1264.3 1823.3,1270.2 1830.0,1278.0 C1836.7,1285.8 1844.0,1294.7 1851.0,1303.0 C1858.0,1311.3 1864.8,1319.5 1872.0,1328.0 C1879.2,1336.5 1886.2,1345.3 1894.0,1354.0 C1901.8,1362.7 1909.0,1370.8 1919.0,1380.0 C1929.0,1389.2 1939.7,1399.7 1954.0,1409.0 C1968.3,1418.3 1986.0,1428.0 2005.0,1436.0 C2024.0,1444.0 2044.7,1450.8 2068.0,1457.0 C2091.3,1463.2 2114.0,1470.2 2145.0,1473.0 C2176.0,1475.8 2218.8,1475.3 2254.0,1474.0 C2289.2,1472.7 2327.0,1470.8 2356.0,1465.0 C2385.0,1459.2 2409.0,1451.0 2428.0,1439.0 C2447.0,1427.0 2460.0,1408.8 2470.0,1393.0 C2480.0,1377.2 2485.0,1352.2 2488.0,1344.0" fill="none" stroke="#0a86a8" stroke-width="30" stroke-linecap="round" stroke-linejoin="round" />
<path d="M1455.0,650.0 C1455.5,658.3 1456.7,684.8 1458.0,700.0 C1459.3,715.2 1460.2,724.3 1463.0,741.0 C1465.8,757.7 1470.5,781.8 1475.0,800.0 C1479.5,818.2 1487.5,841.7 1490.0,850.0" fill="none" stroke="#05494d" stroke-width="7" stroke-linecap="round" stroke-linejoin="round" />
<path d="M1490.0,850.0 C1494.2,859.2 1505.8,886.8 1515.0,905.0 C1524.2,923.2 1540.0,950.0 1545.0,959.0" fill="none" stroke="#05494d" stroke-width="8" stroke-linecap="round" stroke-linejoin="round" />
<path d="M1545.0,959.0 C1549.5,965.8 1563.0,986.5 1572.0,1000.0 C1581.0,1013.5 1591.0,1028.3 1599.0,1040.0 C1607.0,1051.7 1616.5,1065.0 1620.0,1070.0" fill="none" stroke="#05494d" stroke-width="12" stroke-linecap="round" stroke-linejoin="round" />
<path d="M2480.0,1350.0 C2481.0,1340.0 2485.7,1310.0 2486.0,1290.0 C2486.3,1270.0 2484.0,1251.7 2482.0,1230.0 C2480.0,1208.3 2476.7,1181.7 2474.0,1160.0 C2471.3,1138.3 2468.7,1120.0 2466.0,1100.0 C2463.3,1080.0 2459.3,1050.0 2458.0,1040.0" fill="none" stroke="#066a70" stroke-width="8" stroke-linecap="round" stroke-linejoin="round" />
<path d="M2420.0,1445.0 C2427.0,1437.3 2452.0,1414.8 2462.0,1399.0 C2472.0,1383.2 2476.0,1368.2 2480.0,1350.0 C2484.0,1331.8 2485.0,1300.0 2486.0,1290.0" fill="none" stroke="#055a60" stroke-width="12" stroke-linecap="round" stroke-linejoin="round" />
<path d="M1620.0,1070.0 C1624.2,1075.2 1637.0,1091.3 1645.0,1101.0 C1653.0,1110.7 1659.8,1118.8 1668.0,1128.0 C1676.2,1137.2 1685.3,1147.3 1694.0,1156.0 C1702.7,1164.7 1711.0,1171.8 1720.0,1180.0 C1729.0,1188.2 1738.8,1196.0 1748.0,1205.0 C1757.2,1214.0 1765.8,1224.5 1775.0,1234.0 C1784.2,1243.5 1795.2,1253.7 1803.0,1262.0 C1810.8,1270.3 1815.3,1276.2 1822.0,1284.0 C1828.7,1291.8 1836.0,1300.7 1843.0,1309.0 C1850.0,1317.3 1856.8,1325.5 1864.0,1334.0 C1871.2,1342.5 1878.2,1351.3 1886.0,1360.0 C1893.8,1368.7 1901.0,1376.8 1911.0,1386.0 C1921.0,1395.2 1931.7,1405.7 1946.0,1415.0 C1960.3,1424.3 1978.0,1434.0 1997.0,1442.0 C2016.0,1450.0 2036.7,1456.8 2060.0,1463.0 C2083.3,1469.2 2106.0,1476.2 2137.0,1479.0 C2168.0,1481.8 2210.8,1481.3 2246.0,1480.0 C2281.2,1478.7 2319.0,1476.8 2348.0,1471.0 C2377.0,1465.2 2401.0,1457.0 2420.0,1445.0 C2439.0,1433.0 2455.0,1406.7 2462.0,1399.0" fill="none" stroke="#05494d" stroke-width="17" stroke-linecap="round" stroke-linejoin="round" />
<path d="M1608.0,1075.0 C1612.2,1080.2 1625.0,1096.3 1633.0,1106.0 C1641.0,1115.7 1647.8,1123.8 1656.0,1133.0 C1664.2,1142.2 1673.3,1152.3 1682.0,1161.0 C1690.7,1169.7 1699.0,1176.8 1708.0,1185.0 C1717.0,1193.2 1726.8,1201.0 1736.0,1210.0 C1745.2,1219.0 1753.8,1229.5 1763.0,1239.0 C1772.2,1248.5 1783.2,1258.7 1791.0,1267.0 C1798.8,1275.3 1803.3,1281.2 1810.0,1289.0 C1816.7,1296.8 1824.0,1305.7 1831.0,1314.0 C1838.0,1322.3 1844.8,1330.5 1852.0,1339.0 C1859.2,1347.5 1866.2,1356.3 1874.0,1365.0 C1881.8,1373.7 1894.8,1386.7 1899.0,1391.0" fill="none" stroke="#0c7a14" stroke-width="4.5" stroke-linecap="round" stroke-linejoin="round" />
<path d="M1353.0,726.0 C1353.7,733.3 1355.5,755.5 1357.0,770.0 C1358.5,784.5 1359.2,796.3 1362.0,813.0 C1364.8,829.7 1369.7,851.7 1374.0,870.0 C1378.3,888.3 1383.0,904.7 1388.0,923.0 C1393.0,941.3 1398.0,961.5 1404.0,980.0 C1410.0,998.5 1418.0,1020.3 1424.0,1034.0 C1430.0,1047.7 1437.3,1057.3 1440.0,1062.0" fill="none" stroke="#066068" stroke-width="5" stroke-linecap="round" stroke-linejoin="round" />
<path d="M1428.0,1000.0 C1430.0,1006.7 1434.3,1027.0 1440.0,1040.0 C1445.7,1053.0 1452.0,1066.0 1462.0,1078.0 C1472.0,1090.0 1483.7,1100.7 1500.0,1112.0 C1516.3,1123.3 1540.0,1135.0 1560.0,1146.0 C1580.0,1157.0 1602.0,1168.0 1620.0,1178.0 C1638.0,1188.0 1652.7,1196.0 1668.0,1206.0 C1683.3,1216.0 1698.0,1226.3 1712.0,1238.0 C1726.0,1249.7 1739.7,1263.3 1752.0,1276.0 C1764.3,1288.7 1775.5,1301.3 1786.0,1314.0 C1796.5,1326.7 1806.3,1339.0 1815.0,1352.0 C1823.7,1365.0 1830.8,1378.0 1838.0,1392.0 C1845.2,1406.0 1854.7,1428.7 1858.0,1436.0" fill="none" stroke="#06443c" stroke-width="10" stroke-linecap="round" stroke-linejoin="round" />
<rect x="2014" y="815" width="147" height="46" rx="12" fill="#3ee424" stroke="#5c7048" stroke-width="1.3"/>
<rect x="2024" y="822" width="127" height="30" rx="9" fill="#46dc20" stroke="#4ea82c" stroke-width="1"/>
<path d="M2176,848 V818 Q2176,808 2190,808 Q2204,808 2204,818 V848" fill="#3ad828" stroke="#5c7048" stroke-width="1.3"/>
<path d="M1560,768 L1790,787 L2000,792 L2356,795" fill="none" stroke="#5f7372" stroke-width="1.1"/>
<path d="M1620,790 L1790,800 L2000,806 L2340,808" fill="none" stroke="#5f7372" stroke-width="1.1"/>
<path d="M1640,845 Q1760,838 1900,842 L2010,845 M2165,850 L2300,852 Q2330,856 2336,880 V1000" fill="none" stroke="#5f7372" stroke-width="1.1"/>
<path d="M1650,858 Q1760,852 1900,856 L2012,860" fill="none" stroke="#5f7372" stroke-width="1.1"/>
<path d="M1568,756 V776" fill="none" stroke="#5f7372" stroke-width="1"/>
<path d="M1606,756 V777" fill="none" stroke="#5f7372" stroke-width="1"/>
<path d="M1676,758 V778" fill="none" stroke="#5f7372" stroke-width="1"/>
<path d="M1696,758 V778" fill="none" stroke="#5f7372" stroke-width="1"/>
<path d="M1813,761 V781" fill="none" stroke="#5f7372" stroke-width="1"/>
<path d="M1835,761 V782" fill="none" stroke="#5f7372" stroke-width="1"/>
<path d="M1942,763 V784" fill="none" stroke="#5f7372" stroke-width="1"/>
<path d="M1972,764 V785" fill="none" stroke="#5f7372" stroke-width="1"/>
<path d="M2052,765 V786" fill="none" stroke="#5f7372" stroke-width="1"/>
<path d="M2088,766 V787" fill="none" stroke="#5f7372" stroke-width="1"/>
<path d="M2098,766 V787" fill="none" stroke="#5f7372" stroke-width="1"/>
<path d="M2132,767 V788" fill="none" stroke="#5f7372" stroke-width="1"/>
<path d="M2170,768 V789" fill="none" stroke="#5f7372" stroke-width="1"/>
<path d="M2205,768 V790" fill="none" stroke="#5f7372" stroke-width="1"/>
<path d="M2240,769 V790" fill="none" stroke="#5f7372" stroke-width="1"/>
<path d="M2275,770 V791" fill="none" stroke="#5f7372" stroke-width="1"/>
<path d="M1548,742.5 L1600,751.5 L1790,765 L2000,770.5 L2352,774" fill="none" stroke="#10108c" stroke-width="1.6" stroke-dasharray="30 9 70 14 16 6"/>
<path d="M1690,930 Q1720,960 1760,1040 Q1800,1120 1850,1240 Q1880,1300 1950,1345 Q2040,1380 2140,1360 Q2200,1340 2215,1260 Q2225,1160 2240,1080 Q2262,1000 2300,920" fill="none" stroke="#5f7372" stroke-width="1.1"/>
<path d="M1700,925 Q1735,960 1772,1040 Q1812,1120 1862,1238 Q1890,1292 1955,1334 Q2040,1366 2135,1348 Q2190,1330 2204,1258 Q2214,1160 2230,1078 Q2250,1000 2288,918" fill="none" stroke="#5f7372" stroke-width="1.1"/>
<path d="M2240,1170 H2400 Q2420,1172 2424,1195 L2440,1330 M2232,1180 Q2250,1260 2236,1340 Q2230,1390 2260,1400 H2400" fill="none" stroke="#5f7372" stroke-width="1.1"/>
<path d="M2226,1162 H2405 Q2432,1166 2436,1195 L2450,1320" fill="none" stroke="#5f7372" stroke-width="1.1"/>
<path d="M1810,950 Q1790,1000 1830,1040 M2010,935 Q2040,1000 2100,1030 Q2160,1050 2190,1000 M1985,1010 L2050,960 M2000,1022 L2066,972" fill="none" stroke="#5f7372" stroke-width="1.1"/>
<path d="M2036,1008 H2080 Q2086,1008 2086,1016 V1032 H2036 Z M2090,1006 H2126 Q2132,1006 2132,1014 V1030 H2090 Z" fill="none" stroke="#5f7372" stroke-width="1.1"/>
<path d="M2148,950 Q2190,930 2194,980 L2186,1060 Q2180,1100 2140,1104" fill="none" stroke="#5f7372" stroke-width="1.1"/>
<path d="M1780,1104 H1812 L1818,1140 Q1812,1160 1796,1158 Q1782,1154 1780,1140 Z" fill="none" stroke="#5f7372" stroke-width="1.1"/>
<path d="M1400,960 L1520,905 M1420,1010 L1560,960 M1560,1146 L1640,1090 M1626,1180 L1700,1130 M1700,1230 L1760,1190 M1760,1290 L1830,1250 M1800,1350 L1880,1320 M1850,1440 L1920,1410" fill="none" stroke="#5f7372" stroke-width="1.1"/>
<path d="M1960,1470 L1985,1420 M2090,1500 L2092,1450 M2250,1497 L2248,1440 M2380,1480 L2360,1430" fill="none" stroke="#5f7372" stroke-width="1.1"/>
<path d="M1905,1470 Q1925,1540 1960,1560 L2330,1548 Q2450,1540 2470,1500 L2490,1400" fill="none" stroke="#5f7372" stroke-width="1.1"/>
<path d="M1892,1480 Q1910,1556 1950,1574 L2340,1560 Q2470,1552 2492,1500 L2506,1400" fill="none" stroke="#5f7372" stroke-width="1.1"/>
<path d="M2258,1482 V1536 H2400 Q2440,1500 2462,1452 M2310,1476 L2314,1520" fill="none" stroke="#5f7372" stroke-width="1.1"/>
<path d="M2010,1500 V1578 M2068,1498 V1576" fill="none" stroke="#5f7372" stroke-width="1.1"/>
<circle cx="1758" cy="816" r="14" fill="#0b0b8b" />
<circle cx="1461.7" cy="876" r="7.6" fill="#0b0b8b" />
<circle cx="1604" cy="798.6" r="4" fill="#0b0b8b" />
<circle cx="1571.7" cy="800" r="3" fill="#0b0b8b" />
<circle cx="1534" cy="819.5" r="3" fill="#0b0b8b" />
<circle cx="1614" cy="895" r="3.3" fill="#0b0b8b" />
<circle cx="1855.7" cy="896" r="16" fill="none" stroke="#30e030" stroke-width="5"/>
<circle cx="1855.7" cy="896" r="7.6" fill="#0b0b8b" />
<circle cx="1768.8" cy="922" r="23" fill="none" stroke="#6e7276" stroke-width="1.2"/>
<circle cx="1768.8" cy="922" r="19" fill="none" stroke="#6e7276" stroke-width="1.2"/>
<circle cx="1768.8" cy="922" r="2.4" fill="#0b0b8b" />
<rect x="1481" y="738" width="5" height="19" rx="2.4" fill="#0b0b8b" transform="rotate(-8 1483 747)"/>
<path d="M1657.7,948.7 C1656.8,941.7 1665.5,938.2 1669.9,934.7 C1674.3,931.2 1679.2,927.7 1683.9,927.7 C1688.6,927.7 1692.6,929.5 1697.8,934.7 C1703.0,940.0 1710.9,951.1 1715.3,959.2 C1719.7,967.4 1722.8,976.0 1724.0,983.6 C1725.2,991.2 1723.8,1000.5 1722.3,1004.6 C1720.8,1008.7 1717.6,1009.3 1715.3,1008.1 C1713.0,1006.9 1711.8,998.5 1708.3,997.6 C1704.8,996.7 1699.8,1006.3 1694.3,1002.8 C1688.8,999.3 1681.2,985.6 1675.1,976.6 C1669.0,967.6 1658.6,955.7 1657.7,948.7 Z" fill="#0b0b8b" stroke="#8a8a96" stroke-width="1.2"/>
<path d="M1820.8,948.7 C1822.0,941.7 1825.5,938.8 1830.6,934.7 C1835.7,930.6 1844.6,927.7 1851.6,924.2 C1858.6,920.7 1866.1,918.7 1872.5,913.7 C1878.9,908.8 1883.0,899.5 1890.0,894.5 C1897.0,889.5 1904.6,885.8 1914.5,884.0 C1924.4,882.2 1938.3,882.0 1949.4,884.0 C1960.5,886.0 1972.2,890.8 1980.9,896.3 C1989.6,901.8 1997.5,909.6 2001.8,917.2 C2006.1,924.8 2007.6,933.5 2007.0,941.7 C2006.4,949.9 2004.4,959.2 1998.3,966.2 C1992.2,973.2 1981.5,979.0 1970.4,983.6 C1959.3,988.2 1944.1,990.9 1931.9,994.1 C1919.7,997.3 1908.1,999.9 1897.0,1002.8 C1885.9,1005.7 1874.2,1010.0 1865.5,1011.6 C1856.8,1013.2 1850.4,1014.1 1844.6,1012.3 C1838.8,1010.5 1834.1,1007.0 1830.6,1001.0 C1827.1,995.0 1825.2,985.3 1823.6,976.6 C1822.0,967.9 1819.6,955.7 1820.8,948.7 Z" fill="#0b0b8b" stroke="#8a8a96" stroke-width="1.2"/>
<path d="M1607.0,1033.0 L1630.0,1020.0 L1644.0,1042.0 L1622.0,1054.0 L1612.0,1062.0 Z" fill="#0a0aa0" />
<circle cx="2272.3" cy="926.3" r="13.6" fill="none" stroke="#30e030" stroke-width="4"/>
<circle cx="2272.3" cy="926.3" r="7.6" fill="#0b0b8b" />
<circle cx="2171.7" cy="945.3" r="7.6" fill="#0b0b8b" />
<circle cx="2268.2" cy="998.3" r="18.5" fill="#0b0b8b" />
<circle cx="2073" cy="897" r="26" fill="none" stroke="#34e030" stroke-width="6"/>
<circle cx="2073" cy="897" r="17" fill="none" stroke="#2cd02c" stroke-width="4"/>
<circle cx="2073" cy="897" r="2.6" fill="#0b0b8b" />
<rect x="2186.5" y="828" width="7" height="7" fill="#0b0b8b"/>
<circle cx="2355" cy="836.6" r="2.4" fill="#0b0b8b" />
<rect x="2357" y="854" width="9" height="8" rx="1.5" fill="#0b0b8b"/>
<circle cx="2166" cy="993" r="16" fill="none" stroke="#6e7276" stroke-width="1.2"/>
<circle cx="2166" cy="993" r="3" fill="#0b0b8b" />
<circle cx="2377" cy="1005.7" r="16" fill="none" stroke="#6e7276" stroke-width="1.2"/>
<circle cx="2377" cy="1005.7" r="2.6" fill="#0b0b8b" />
<circle cx="2386.4" cy="887" r="2.4" fill="#c0c8d0" />
<rect x="2051" y="1017" width="8" height="8" fill="#0b0b8b"/><rect x="2101" y="1016" width="8" height="8" fill="#0b0b8b"/>
<circle cx="1665" cy="1071" r="8" fill="none" stroke="#5a66a0" stroke-width="1.3"/>
<circle cx="1727" cy="1070" r="15" fill="none" stroke="#5a66a0" stroke-width="1.4"/>
<circle cx="1727" cy="1070" r="11" fill="none" stroke="#5a66a0" stroke-width="1.2"/>
<circle cx="1727" cy="1070" r="3" fill="#1028e0" />
<circle cx="1758" cy="1051" r="13.6" fill="none" stroke="#5a66a0" stroke-width="1.3"/>
<circle cx="1758" cy="1051" r="2.6" fill="#0b0b8b" />
<circle cx="1793" cy="1127" r="7" fill="#3432bd" />
<rect x="1795.5" y="1130" width="3.6" height="14" fill="#3432bd"/>
<circle cx="1842.7" cy="1187" r="31" fill="none" stroke="#6e7276" stroke-width="1.4"/>
<circle cx="1842.7" cy="1187" r="19" fill="#3432bd" />
<circle cx="1874" cy="1251.5" r="15" fill="none" stroke="#30e030" stroke-width="5"/>
<circle cx="1874" cy="1251.5" r="3.6" fill="#0b0b8b" />
<path d="M1876.0,1092.0 C1876.2,1083.7 1879.0,1075.7 1883.0,1070.0 C1887.0,1064.3 1893.0,1060.5 1900.0,1058.0 C1907.0,1055.5 1908.3,1055.5 1925.0,1055.0 C1941.7,1054.5 1972.5,1054.0 2000.0,1055.0 C2027.5,1056.0 2071.3,1057.1 2090.0,1060.8 C2108.7,1064.5 2106.1,1068.8 2112.0,1077.0 C2117.9,1085.2 2120.1,1093.9 2125.5,1109.7 C2130.9,1125.5 2139.2,1154.3 2144.6,1172.0 C2150.0,1189.7 2154.8,1202.5 2158.0,1215.7 C2161.2,1228.9 2164.0,1239.7 2163.6,1251.0 C2163.2,1262.3 2160.4,1274.1 2155.4,1283.6 C2150.4,1293.1 2144.6,1301.7 2133.7,1308.0 C2122.8,1314.3 2109.9,1320.3 2090.0,1321.6 C2070.1,1322.9 2032.1,1318.8 2014.0,1316.0 C1995.9,1313.2 1992.3,1311.3 1981.5,1305.0 C1970.7,1298.7 1958.1,1288.3 1949.0,1278.0 C1939.9,1267.7 1935.2,1261.3 1927.0,1243.0 C1918.8,1224.7 1907.5,1188.5 1900.0,1168.0 C1892.5,1147.5 1886.0,1132.7 1882.0,1120.0 C1878.0,1107.3 1875.8,1100.3 1876.0,1092.0 Z" fill="url(#vb1)" stroke="#8a8a96" stroke-width="1.5"/>
<circle cx="2153.5" cy="1219" r="6.5" fill="#c4c8d0" />
<circle cx="2153.5" cy="1219" r="2.4" fill="#3432bd" />
<circle cx="1927" cy="1237" r="6.5" fill="#c4c8d0" />
<circle cx="1927" cy="1237" r="2.4" fill="#3432bd" />
<circle cx="2001" cy="1311" r="6.5" fill="#c4c8d0" />
<circle cx="2001" cy="1311" r="2.4" fill="#3432bd" />
<circle cx="2110" cy="1316" r="6.5" fill="#c4c8d0" />
<circle cx="2110" cy="1316" r="2.4" fill="#3432bd" />
<path d="M2280.4,1209 H2344.3 V1229 Q2386,1262 2386,1297 Q2386,1338 2356.5,1362 V1378.7 H2283 V1360 Q2245,1338 2245,1297 Q2245,1258 2280.4,1229 Z" fill="#3432bd"/>
<path d="M2366.0,1165.0 C2371.5,1159.2 2387.3,1174.2 2395.0,1180.0 C2402.7,1185.8 2407.8,1186.7 2412.0,1200.0 C2416.2,1213.3 2419.5,1240.3 2420.0,1260.0 C2420.5,1279.7 2419.2,1303.8 2415.0,1318.0 C2410.8,1332.2 2400.8,1348.0 2395.0,1345.0 C2389.2,1342.0 2383.8,1315.8 2380.0,1300.0 C2376.2,1284.2 2375.0,1264.2 2372.0,1250.0 C2369.0,1235.8 2363.0,1229.2 2362.0,1215.0 C2361.0,1200.8 2360.5,1170.8 2366.0,1165.0 Z" fill="#2ff024" />
<path d="M2424.0,1245.0 C2426.5,1233.3 2436.0,1234.2 2440.0,1240.0 C2444.0,1245.8 2448.0,1266.7 2448.0,1280.0 C2448.0,1293.3 2443.8,1315.0 2440.0,1320.0 C2436.2,1325.0 2427.7,1322.5 2425.0,1310.0 C2422.3,1297.5 2421.5,1256.7 2424.0,1245.0 Z" fill="#2ff024" />
<path d="M2193.0,1406.6 C2196.1,1400.4 2224.6,1395.7 2233.4,1397.3 C2242.2,1398.9 2233.4,1410.3 2245.8,1416.0 C2258.2,1421.7 2287.3,1429.4 2308.0,1431.4 C2328.7,1433.5 2351.9,1432.4 2370.0,1428.3 C2388.1,1424.2 2408.3,1408.1 2416.6,1406.6 C2424.9,1405.0 2427.5,1413.3 2419.7,1419.0 C2411.9,1424.7 2391.2,1436.5 2370.0,1440.7 C2348.8,1444.9 2318.3,1444.9 2292.4,1443.9 C2266.5,1442.9 2231.4,1440.7 2214.8,1434.5 C2198.2,1428.3 2189.9,1412.8 2193.0,1406.6 Z" fill="#2ff024" />
<circle cx="2030.6" cy="1394" r="17" fill="none" stroke="#6e7276" stroke-width="1.6"/>
<circle cx="2030.6" cy="1394" r="14" fill="none" stroke="#34dc34" stroke-width="2.2"/>
<circle cx="2030.6" cy="1394" r="3" fill="#0b0b8b" />
<circle cx="2139.8" cy="1402.7" r="23.5" fill="none" stroke="#6e7276" stroke-width="1.6"/>
<circle cx="2139.8" cy="1402.7" r="17" fill="none" stroke="#30e030" stroke-width="4"/>
<circle cx="2139.8" cy="1402.7" r="3.2" fill="#0b0b8b" />
<circle cx="2215.8" cy="1415.5" r="20" fill="none" stroke="#30e030" stroke-width="4"/>
<circle cx="2215.8" cy="1415.5" r="16" fill="none" stroke="#6e7276" stroke-width="1.4"/>
<circle cx="2215.8" cy="1415.5" r="3" fill="#0b0b8b" />
<circle cx="2070" cy="1399.5" r="3.4" fill="#0b0b8b" />
<circle cx="2181.5" cy="1427.3" r="3" fill="#0b0b8b" />
<path d="M1882.0,1265.7 C1882.0,1257.7 1901.8,1256.3 1911.0,1260.5 C1920.2,1264.7 1927.0,1280.8 1937.0,1291.0 C1947.0,1301.2 1963.8,1314.5 1971.0,1322.0 C1978.2,1329.5 1981.3,1333.7 1980.0,1336.0 C1978.7,1338.3 1970.2,1337.2 1963.0,1336.0 C1955.8,1334.8 1945.7,1333.6 1937.0,1329.0 C1928.3,1324.4 1920.2,1319.0 1911.0,1308.5 C1901.8,1298.0 1882.0,1273.7 1882.0,1265.7 Z" fill="#2ff024" />
<path d="M1940.6,1332.0 C1948.8,1334.5 1971.1,1341.7 1990.0,1347.0 C2008.9,1352.3 2036.2,1360.2 2054.0,1364.0 C2071.8,1367.8 2082.7,1370.2 2097.0,1369.5 C2111.3,1368.8 2127.0,1365.2 2139.8,1360.0 C2152.6,1354.8 2165.5,1346.4 2174.0,1338.5 C2182.5,1330.6 2187.4,1321.4 2191.0,1312.8 C2194.6,1304.2 2193.3,1298.5 2195.5,1287.0 C2197.7,1275.5 2200.4,1256.5 2204.0,1244.0 C2207.6,1231.5 2211.7,1222.7 2217.0,1212.0 C2222.3,1201.3 2232.8,1185.3 2236.0,1180.0" fill="none" stroke="#30e030" stroke-width="3" stroke-linecap="round" stroke-linejoin="round" />
<path d="M2199.7,1296.0 C2199.9,1303.3 2200.4,1323.7 2201.0,1340.0 C2201.6,1356.3 2202.7,1385.0 2203.0,1394.0" fill="none" stroke="#30e030" stroke-width="3.5" stroke-linecap="round" stroke-linejoin="round" />
<circle cx="2432.6" cy="1365" r="20" fill="none" stroke="#30e030" stroke-width="7"/>
<circle cx="2432.6" cy="1365" r="3" fill="#0b0b8b" />
<circle cx="2171.7" cy="1079" r="3" fill="#0b0b8b" />
<circle cx="2256" cy="1186" r="3" fill="#0b0b8b" />
<circle cx="2356.5" cy="1182" r="3" fill="#0b0b8b" />
<circle cx="2402" cy="1171" r="3" fill="#0b0b8b" />
<circle cx="2399.5" cy="1231.4" r="3" fill="#0b0b8b" />
<circle cx="2381" cy="1367" r="3.6" fill="#0b0b8b" />
<circle cx="2262" cy="1382" r="3.6" fill="#0b0b8b" />
<circle cx="2158.7" cy="1151" r="7.6" fill="#3432bd" />
<rect x="2089" y="1337" width="18" height="12" fill="#3432bd"/>
</g>
<path d="M1850.5,1547 L1857,1546 L1863,1590 L1859,1600 L1853,1592 Z" fill="#f0281c"/><circle cx="1861" cy="1603" r="2" fill="#f0281c"/>
</svg>
<svg style="position:absolute;left:566.5px;top:331px;overflow:visible;" width="27" height="27" viewBox="0 0 27 27"><g transform="scale(1.17391)"><path d="M9,3 V14 H20 M9,14 L2,21" fill="none" stroke="#e8641b" stroke-width="1.5"/><g fill="#e8641b"><path d="M9,0 L12,5.5 H6 Z"/><path d="M23,14 L17.5,11 V17 Z"/><path d="M0,23 L1.5,17 L6,21.5 Z"/></g></g></svg>
<div class="t" style="left:600.5px;top:334.7px;font-size:22.0px;letter-spacing:0.09px;color:#000;">world</div>
<svg style="position:absolute;left:566.5px;top:362px;overflow:visible;" width="26" height="26" viewBox="0 0 26 27"><g transform="scale(1.13043)"><path d="M11.5,0.5 L22,5.5 V17 L11.5,23 L1,17 V5.5 Z" fill="#a9bfd6" stroke="#5d7692" stroke-width="1.2" stroke-linejoin="round"/><path d="M6.2,0.2 L9.6,4 L6,6.4 Z M16.8,0.2 L13.4,4 L17,6.4 Z M0,9 L4.4,11 V14.8 L0,14 Z M23,9 L18.6,11 V14.8 L23,14 Z M7,23.6 L9.4,19.6 L13.6,19.6 L16,23.6 Z" fill="#fff" opacity=".0"/><path d="M11.5,3 L17.5,6.5 L11.5,10 L5.5,6.5 Z" fill="#f07d1c"/><path d="M4,9 L10,12.5 V19.5 L4,16 Z" fill="#f07d1c"/><path d="M19,9 L13,12.5 V19.5 L19,16 Z" fill="#f07d1c"/><path d="M11.5,11 V21 M11.5,11 L3,6 M11.5,11 L20,6" stroke="#fff" stroke-width="1.4"/></g></svg>
<div class="t" style="left:600.5px;top:365.7px;font-size:22.0px;letter-spacing:-0.05px;color:#000;">original</div>
<div style="position:absolute;left:3757px;top:291px;width:81px;height:1426px;background:rgba(255,255,255,0.26);"></div>
<div style="position:absolute;left:3811.2px;top:301.1px;width:24.8px;height:703.851px;box-sizing:border-box;border:1.2px solid #000;border-bottom:none;background:linear-gradient(to bottom,#ff0505 0%,#ff2800 12%,#ff4600 25%,#ff7800 40%,#ffa800 50%,#ffd000 60%,#fff000 67%,#f0ff00 71%,#a8ff00 80%,#50fc08 90%,#0af010 100%)"></div>
<div style="position:absolute;left:3811.2px;top:1004.95px;width:24.8px;height:701.749px;box-sizing:border-box;border:1.2px solid #000;border-top:1px solid #087878;background:linear-gradient(to bottom,#009c9c 0%,#009aa6 14%,#0092d0 25%,#0088f0 32%,#007cff 33.5%,#0058ff 40%,#0038ff 45%,#0012ff 52%,#1800f8 58%,#5000f0 65%,#8800f0 72%,#c800f8 80%,#ff00ff 86%,#ff00d0 93%,#ff00a0 100%)"></div>
<div class="t" style="right:31.6px;top:293.3px;font-size:17.4px;letter-spacing:0.07px;font-weight:bold;color:#000;">9.999</div>
<div class="t" style="right:31.6px;top:329.4px;font-size:17.4px;letter-spacing:0.07px;font-weight:bold;color:#000;">9.500</div>
<div style="position:absolute;left:3812.7px;top:336.85px;width:21.8px;height:0;border-top:1.3px dashed #000"></div>
<div class="t" style="right:31.6px;top:364.5px;font-size:17.4px;letter-spacing:0.07px;font-weight:bold;color:#000;">9.000</div>
<div style="position:absolute;left:3812.7px;top:371.979px;width:21.8px;height:0;border-top:1.3px dashed #000"></div>
<div class="t" style="right:31.6px;top:399.6px;font-size:17.4px;letter-spacing:0.07px;font-weight:bold;color:#000;">8.500</div>
<div style="position:absolute;left:3812.7px;top:407.108px;width:21.8px;height:0;border-top:1.3px dashed #000"></div>
<div class="t" style="right:31.6px;top:434.8px;font-size:17.4px;letter-spacing:0.07px;font-weight:bold;color:#000;">8.000</div>
<div style="position:absolute;left:3812.7px;top:442.237px;width:21.8px;height:0;border-top:1.3px dashed #000"></div>
<div class="t" style="right:31.6px;top:469.9px;font-size:17.4px;letter-spacing:0.07px;font-weight:bold;color:#000;">7.500</div>
<div style="position:absolute;left:3812.7px;top:477.366px;width:21.8px;height:0;border-top:1.3px dashed #000"></div>
<div class="t" style="right:31.6px;top:505.0px;font-size:17.4px;letter-spacing:0.07px;font-weight:bold;color:#000;">7.000</div>
<div style="position:absolute;left:3812.7px;top:512.495px;width:21.8px;height:0;border-top:1.3px dashed #000"></div>
<div class="t" style="right:31.6px;top:540.1px;font-size:17.4px;letter-spacing:0.07px;font-weight:bold;color:#000;">6.500</div>
<div style="position:absolute;left:3812.7px;top:547.624px;width:21.8px;height:0;border-top:1.3px dashed #000"></div>
<div class="t" style="right:31.6px;top:575.3px;font-size:17.4px;letter-spacing:0.07px;font-weight:bold;color:#000;">6.000</div>
<div style="position:absolute;left:3812.7px;top:582.753px;width:21.8px;height:0;border-top:1.3px dashed #000"></div>
<div class="t" style="right:31.6px;top:610.4px;font-size:17.4px;letter-spacing:0.07px;font-weight:bold;color:#000;">5.500</div>
<div style="position:absolute;left:3812.7px;top:617.882px;width:21.8px;height:0;border-top:1.3px dashed #000"></div>
<div class="t" style="right:31.6px;top:645.5px;font-size:17.4px;letter-spacing:0.07px;font-weight:bold;color:#000;">5.000</div>
<div style="position:absolute;left:3812.7px;top:653.011px;width:21.8px;height:0;border-top:1.3px dashed #000"></div>
<div class="t" style="right:31.6px;top:680.7px;font-size:17.4px;letter-spacing:0.07px;font-weight:bold;color:#000;">4.500</div>
<div style="position:absolute;left:3812.7px;top:688.14px;width:21.8px;height:0;border-top:1.3px dashed #000"></div>
<div class="t" style="right:31.6px;top:715.8px;font-size:17.4px;letter-spacing:0.07px;font-weight:bold;color:#000;">4.000</div>
<div style="position:absolute;left:3812.7px;top:723.269px;width:21.8px;height:0;border-top:1.3px dashed #000"></div>
<div class="t" style="right:31.6px;top:750.9px;font-size:17.4px;letter-spacing:0.07px;font-weight:bold;color:#000;">3.500</div>
<div style="position:absolute;left:3812.7px;top:758.398px;width:21.8px;height:0;border-top:1.3px dashed #000"></div>
<div class="t" style="right:31.6px;top:786.0px;font-size:17.4px;letter-spacing:0.07px;font-weight:bold;color:#000;">3.000</div>
<div style="position:absolute;left:3812.7px;top:793.527px;width:21.8px;height:0;border-top:1.3px dashed #000"></div>
<div class="t" style="right:31.6px;top:821.2px;font-size:17.4px;letter-spacing:0.07px;font-weight:bold;color:#000;">2.500</div>
<div style="position:absolute;left:3812.7px;top:828.656px;width:21.8px;height:0;border-top:1.3px dashed #000"></div>
<div class="t" style="right:31.6px;top:856.3px;font-size:17.4px;letter-spacing:0.07px;font-weight:bold;color:#000;">2.000</div>
<div style="position:absolute;left:3812.7px;top:863.785px;width:21.8px;height:0;border-top:1.3px dashed #000"></div>
<div class="t" style="right:31.6px;top:891.4px;font-size:17.4px;letter-spacing:0.07px;font-weight:bold;color:#000;">1.500</div>
<div style="position:absolute;left:3812.7px;top:898.914px;width:21.8px;height:0;border-top:1.3px dashed #000"></div>
<div class="t" style="right:31.6px;top:926.6px;font-size:17.4px;letter-spacing:0.07px;font-weight:bold;color:#000;">1.000</div>
<div style="position:absolute;left:3812.7px;top:934.043px;width:21.8px;height:0;border-top:1.3px dashed #000"></div>
<div class="t" style="right:31.6px;top:961.7px;font-size:17.4px;letter-spacing:0.07px;font-weight:bold;color:#000;">0.500</div>
<div style="position:absolute;left:3812.7px;top:969.172px;width:21.8px;height:0;border-top:1.3px dashed #000"></div>
<div class="t" style="right:31.6px;top:996.8px;font-size:17.4px;letter-spacing:0.07px;font-weight:bold;color:#000;">0.000</div>
<div style="position:absolute;left:3812.7px;top:1004.3px;width:21.8px;height:0;border-top:1.3px dashed #000"></div>
<div class="t" style="right:31.7px;top:1032.0px;font-size:17.4px;letter-spacing:0.04px;font-weight:bold;color:#000;">-0.500</div>
<div style="position:absolute;left:3812.7px;top:1039.43px;width:21.8px;height:0;border-top:1.3px dashed #000"></div>
<div class="t" style="right:31.7px;top:1067.1px;font-size:17.4px;letter-spacing:0.04px;font-weight:bold;color:#000;">-1.000</div>
<div style="position:absolute;left:3812.7px;top:1074.56px;width:21.8px;height:0;border-top:1.3px dashed #000"></div>
<div class="t" style="right:31.7px;top:1102.2px;font-size:17.4px;letter-spacing:0.04px;font-weight:bold;color:#000;">-1.500</div>
<div style="position:absolute;left:3812.7px;top:1109.69px;width:21.8px;height:0;border-top:1.3px dashed #000"></div>
<div class="t" style="right:31.7px;top:1137.3px;font-size:17.4px;letter-spacing:0.04px;font-weight:bold;color:#000;">-2.000</div>
<div style="position:absolute;left:3812.7px;top:1144.82px;width:21.8px;height:0;border-top:1.3px dashed #000"></div>
<div class="t" style="right:31.7px;top:1172.5px;font-size:17.4px;letter-spacing:0.04px;font-weight:bold;color:#000;">-2.500</div>
<div style="position:absolute;left:3812.7px;top:1179.95px;width:21.8px;height:0;border-top:1.3px dashed #000"></div>
<div class="t" style="right:31.7px;top:1207.6px;font-size:17.4px;letter-spacing:0.04px;font-weight:bold;color:#000;">-3.000</div>
<div style="position:absolute;left:3812.7px;top:1215.07px;width:21.8px;height:0;border-top:1.3px dashed #000"></div>
<div class="t" style="right:31.7px;top:1242.7px;font-size:17.4px;letter-spacing:0.04px;font-weight:bold;color:#000;">-3.500</div>
<div style="position:absolute;left:3812.7px;top:1250.2px;width:21.8px;height:0;border-top:1.3px dashed #000"></div>
<div class="t" style="right:31.7px;top:1277.9px;font-size:17.4px;letter-spacing:0.04px;font-weight:bold;color:#000;">-4.000</div>
<div style="position:absolute;left:3812.7px;top:1285.33px;width:21.8px;height:0;border-top:1.3px dashed #000"></div>
<div class="t" style="right:31.7px;top:1313.0px;font-size:17.4px;letter-spacing:0.04px;font-weight:bold;color:#000;">-4.500</div>
<div style="position:absolute;left:3812.7px;top:1320.46px;width:21.8px;height:0;border-top:1.3px dashed #000"></div>
<div class="t" style="right:31.7px;top:1348.1px;font-size:17.4px;letter-spacing:0.04px;font-weight:bold;color:#000;">-5.000</div>
<div style="position:absolute;left:3812.7px;top:1355.59px;width:21.8px;height:0;border-top:1.3px dashed #000"></div>
<div class="t" style="right:31.7px;top:1383.2px;font-size:17.4px;letter-spacing:0.04px;font-weight:bold;color:#000;">-5.500</div>
<div style="position:absolute;left:3812.7px;top:1390.72px;width:21.8px;height:0;border-top:1.3px dashed #000"></div>
<div class="t" style="right:31.7px;top:1418.4px;font-size:17.4px;letter-spacing:0.04px;font-weight:bold;color:#000;">-6.000</div>
<div style="position:absolute;left:3812.7px;top:1425.85px;width:21.8px;height:0;border-top:1.3px dashed #000"></div>
<div class="t" style="right:31.7px;top:1453.5px;font-size:17.4px;letter-spacing:0.04px;font-weight:bold;color:#000;">-6.500</div>
<div style="position:absolute;left:3812.7px;top:1460.98px;width:21.8px;height:0;border-top:1.3px dashed #000"></div>
<div class="t" style="right:31.7px;top:1488.6px;font-size:17.4px;letter-spacing:0.04px;font-weight:bold;color:#000;">-7.000</div>
<div style="position:absolute;left:3812.7px;top:1496.11px;width:21.8px;height:0;border-top:1.3px dashed #000"></div>
<div class="t" style="right:31.7px;top:1523.8px;font-size:17.4px;letter-spacing:0.04px;font-weight:bold;color:#000;">-7.500</div>
<div style="position:absolute;left:3812.7px;top:1531.24px;width:21.8px;height:0;border-top:1.3px dashed #000"></div>
<div class="t" style="right:31.7px;top:1558.9px;font-size:17.4px;letter-spacing:0.04px;font-weight:bold;color:#000;">-8.000</div>
<div style="position:absolute;left:3812.7px;top:1566.36px;width:21.8px;height:0;border-top:1.3px dashed #000"></div>
<div class="t" style="right:31.7px;top:1594.0px;font-size:17.4px;letter-spacing:0.04px;font-weight:bold;color:#000;">-8.500</div>
<div style="position:absolute;left:3812.7px;top:1601.49px;width:21.8px;height:0;border-top:1.3px dashed #000"></div>
<div class="t" style="right:31.7px;top:1629.1px;font-size:17.4px;letter-spacing:0.04px;font-weight:bold;color:#000;">-9.000</div>
<div style="position:absolute;left:3812.7px;top:1636.62px;width:21.8px;height:0;border-top:1.3px dashed #000"></div>
<div class="t" style="right:31.7px;top:1664.3px;font-size:17.4px;letter-spacing:0.04px;font-weight:bold;color:#000;">-9.500</div>
<div style="position:absolute;left:3812.7px;top:1671.75px;width:21.8px;height:0;border-top:1.3px dashed #000"></div>
<div class="t" style="right:31.7px;top:1698.5px;font-size:17.4px;letter-spacing:0.04px;font-weight:bold;color:#000;">-9.998</div>
<svg style="position:absolute;left:0;top:0;overflow:visible" width="3840" height="2088" viewBox="0 0 3840 2088"><path d="M627.7,1612 H633.6 V1643 H627.7 Z" fill="#00e000"/><path d="M629.6,1598 L636.8,1612.8 H622.6 Z" fill="#00e400"/><defs><linearGradient id="rg" x1="0" y1="0" x2="0" y2="1"><stop offset="0" stop-color="#ff0000"/><stop offset=".55" stop-color="#f00000"/><stop offset="1" stop-color="#700000"/></linearGradient></defs><circle cx="631.8" cy="1646.8" r="6.4" fill="#0000f0"/><circle cx="630.8" cy="1646.5" r="2.6" fill="#000070"/><path d="M600,1639 H631 V1645.6 H600 Z" fill="url(#rg)"/><path d="M587,1642.8 L601,1635 V1650.3 Z" fill="url(#rg)"/><path d="M627.7,1630 H633.6 V1642 H627.7 Z" fill="#00e000"/><defs><linearGradient id="gg2" x1="0" y1="0" x2="1" y2="0"><stop offset="0" stop-color="#10d810"/><stop offset=".6" stop-color="#08c008"/><stop offset="1" stop-color="#0a8a0a"/></linearGradient><linearGradient id="rg2" x1="0" y1="0" x2="0" y2="1"><stop offset="0" stop-color="#f01010"/><stop offset=".55" stop-color="#d80808"/><stop offset="1" stop-color="#800404"/></linearGradient></defs><path d="M1692,1548 H1698.2 V1611 H1692 Z" fill="url(#gg2)"/><path d="M1694.6,1535.5 L1700.6,1548.5 H1688.2 Z" fill="#10dc10"/><circle cx="1695.4" cy="1622" r="5.6" fill="#0808d8"/><circle cx="1695.4" cy="1622.5" r="2.6" fill="#04047a"/><rect x="1692" y="1606" width="6.4" height="11" fill="#c8c8dc" opacity=".8"/><path d="M1630,1610.2 H1692 V1617.2 H1630 Z" fill="url(#rg2)"/><path d="M1619.5,1614 L1630.5,1608.2 V1620 Z" fill="url(#rg2)"/></svg>
<div class="t" style="left:613.3px;top:1573.3px;font-size:18.5px;color:#00e800;">Y</div>
<div class="t" style="left:571.2px;top:1637.3px;font-size:18.5px;color:#ff0000;">X</div>
<div class="t" style="left:616.2px;top:1643.2px;font-size:17.0px;font-weight:bold;color:#0000f0;">Z</div>
<div class="t" style="left:1693.0px;top:1492.1px;font-size:17.6px;font-weight:bold;color:#10e810;">Y</div>
<div class="t" style="left:1594.0px;top:1595.8px;font-size:18.0px;font-weight:bold;color:#f01010;">X</div>
</body></html>
